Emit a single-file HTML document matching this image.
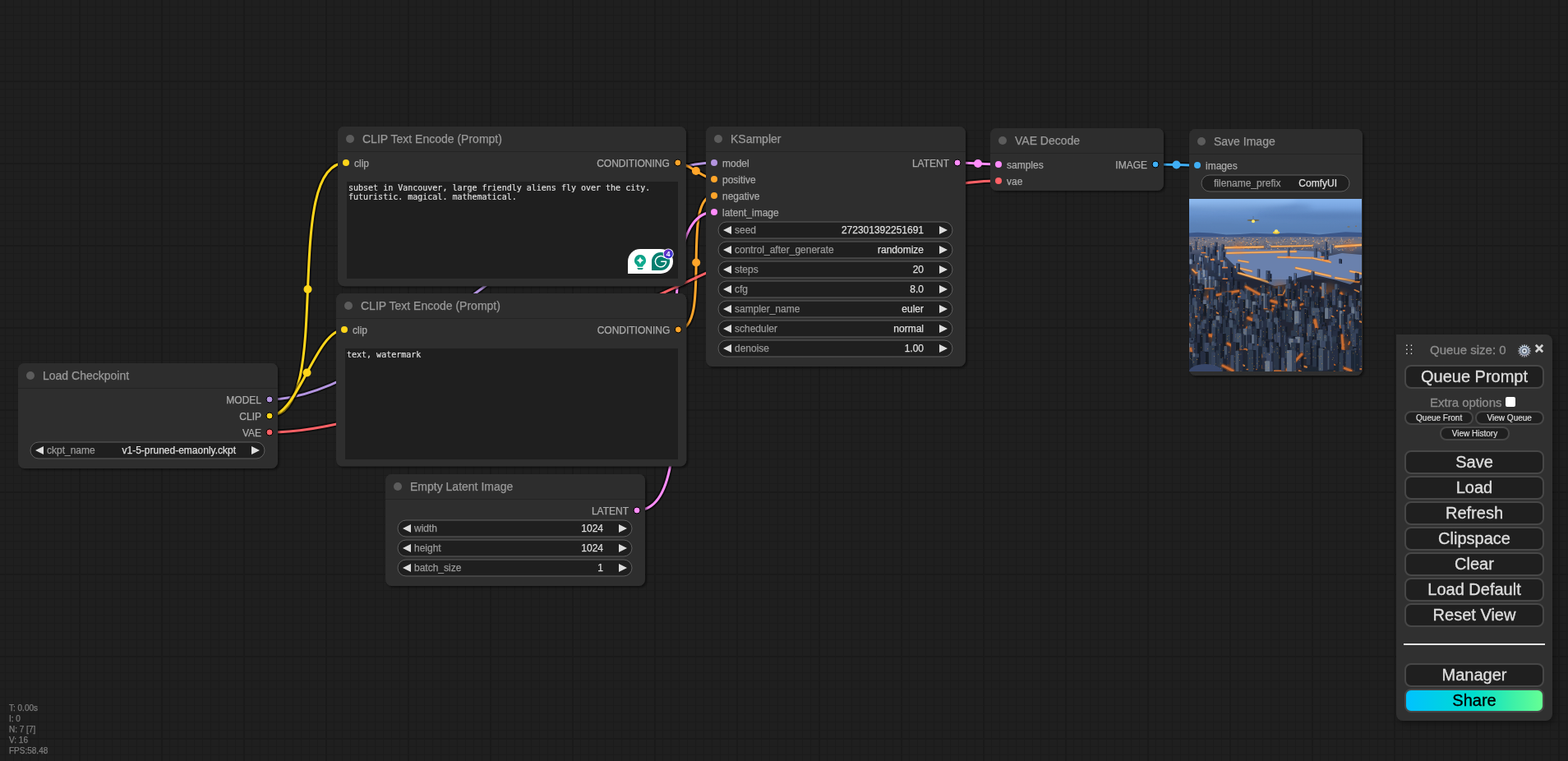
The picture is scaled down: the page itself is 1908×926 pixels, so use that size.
<!DOCTYPE html>
<html lang="en"><head><meta charset="utf-8"><title>ComfyUI</title>
<style>
html,body{margin:0;padding:0;background:#1f1f1f;overflow:hidden}
body{width:1908px;height:926px;position:relative;font-family:"Liberation Sans", sans-serif}
#cv{position:absolute;left:0;top:0;width:1908px;height:926px;display:block;will-change:transform}
#cv text{font-family:"Liberation Sans", sans-serif;stroke-width:0.25px}
.ta{position:absolute;box-sizing:border-box;background:#1f1f1f;color:#ddd;padding:2px;font:10px/11px "DejaVu Sans Mono", "Liberation Mono", monospace;will-change:transform;-webkit-text-stroke:0.2px #ddd;white-space:pre-wrap;overflow:hidden}
.menu{will-change:transform;position:absolute;left:1699px;top:407px;width:190px;height:470px;box-sizing:border-box;background:#303030;border-radius:0 8px 8px 8px;box-shadow:3px 3px 8px rgba(0,0,0,.4);color:#8c8c8c;font-size:15px}
.menu .b{position:absolute;box-sizing:border-box;left:10px;width:170px;height:29px;border:2px solid #474747;border-radius:8px;background:#1f1f1f;color:#ddd;font-size:20px;line-height:23px;padding:1px 6px;text-align:center;white-space:nowrap}
.menu .s{position:absolute;box-sizing:border-box;height:17px;border:2px solid #474747;border-radius:8px;background:#1f1f1f;color:#ddd;font-size:10px;line-height:11px;padding:1px 0;text-align:center;white-space:nowrap}
.menu .t{position:absolute;white-space:nowrap;line-height:17px;-webkit-text-stroke:0.3px #8c8c8c}
.menu .b{-webkit-text-stroke:0.35px #ddd}.menu .s{-webkit-text-stroke:0.2px #ddd}

</style></head><body>
<svg id="cv" width="1908" height="926" viewBox="0 0 1908 926">
<defs>
<pattern id="grid" x="-4" y="-2" width="100" height="100" patternUnits="userSpaceOnUse">
<rect width="100" height="100" fill="#1f1f1f"/>
<rect x="10" y="0" width="1" height="100" fill="#1b1b1b"/><rect x="20" y="0" width="1" height="100" fill="#1b1b1b"/><rect x="30" y="0" width="1" height="100" fill="#1b1b1b"/><rect x="40" y="0" width="1" height="100" fill="#1b1b1b"/><rect x="50" y="0" width="1" height="100" fill="#1b1b1b"/><rect x="60" y="0" width="1" height="100" fill="#1b1b1b"/><rect x="70" y="0" width="1" height="100" fill="#1b1b1b"/><rect x="80" y="0" width="1" height="100" fill="#1b1b1b"/><rect x="90" y="0" width="1" height="100" fill="#1b1b1b"/>
<rect x="0" y="10" width="100" height="1" fill="#1b1b1b"/><rect x="0" y="20" width="100" height="1" fill="#1b1b1b"/><rect x="0" y="30" width="100" height="1" fill="#1b1b1b"/><rect x="0" y="40" width="100" height="1" fill="#1b1b1b"/><rect x="0" y="50" width="100" height="1" fill="#1b1b1b"/><rect x="0" y="60" width="100" height="1" fill="#1b1b1b"/><rect x="0" y="70" width="100" height="1" fill="#1b1b1b"/><rect x="0" y="80" width="100" height="1" fill="#1b1b1b"/><rect x="0" y="90" width="100" height="1" fill="#1b1b1b"/>
<rect x="0" y="0" width="2" height="100" fill="#1a1a1a"/><rect x="0" y="0" width="100" height="2" fill="#1a1a1a"/>
</pattern>
<filter id="sh" x="-10%" y="-10%" width="120%" height="130%"><feDropShadow dx="2" dy="2" stdDeviation="1.5" flood-color="#000" flood-opacity="0.5"/></filter>
<filter id="gb" x="-50%" y="-100%" width="200%" height="300%"><feGaussianBlur stdDeviation="1.2"/></filter>
<linearGradient id="sky" x1="0" y1="0" x2="0" y2="1"><stop offset="0" stop-color="#88b5ee"/><stop offset="0.05" stop-color="#78a4de"/><stop offset="0.1" stop-color="#6690ca"/><stop offset="0.15" stop-color="#5a82b8"/><stop offset="0.19" stop-color="#5a80b4"/><stop offset="0.215" stop-color="#688cba"/></linearGradient>
<filter id="soft" x="-5%" y="-5%" width="110%" height="110%"><feGaussianBlur stdDeviation="0.45"/></filter>
<filter id="gb2" x="-50%" y="-200%" width="200%" height="500%"><feGaussianBlur stdDeviation="3"/></filter>
<linearGradient id="cityg" x1="0" y1="0" x2="0" y2="1"><stop offset="0" stop-color="#5f6a8a"/><stop offset="0.04" stop-color="#77747e"/><stop offset="0.085" stop-color="#5a6178"/><stop offset="0.14" stop-color="#3c4760"/><stop offset="0.3" stop-color="#252e42"/><stop offset="1" stop-color="#212a3c"/></linearGradient>
</defs>
<rect width="1908" height="926" fill="url(#grid)"/>
<path d="M328 486C481.22 486 715.78 198 869 198" fill="none" stroke="rgba(0,0,0,0.5)" stroke-width="7"/>
<path d="M328 486C481.22 486 715.78 198 869 198" fill="none" stroke="#B394DF" stroke-width="3"/>
<circle cx="598.5" cy="342" r="5" fill="#B394DF"/>
<path d="M824.8 198C836.93 198 856.87 218 869 218" fill="none" stroke="rgba(0,0,0,0.5)" stroke-width="7"/>
<path d="M824.8 198C836.93 198 856.87 218 869 218" fill="none" stroke="#FFA52A" stroke-width="3"/>
<circle cx="846.9" cy="208" r="5" fill="#FFA52A"/>
<path d="M825.3 401C867.49 401 826.81 238 869 238" fill="none" stroke="rgba(0,0,0,0.5)" stroke-width="7"/>
<path d="M825.3 401C867.49 401 826.81 238 869 238" fill="none" stroke="#FFA52A" stroke-width="3"/>
<circle cx="847.15" cy="319.5" r="5" fill="#FFA52A"/>
<path d="M775 621C868.74 621 775.26 258 869 258" fill="none" stroke="rgba(0,0,0,0.5)" stroke-width="7"/>
<path d="M775 621C868.74 621 775.26 258 869 258" fill="none" stroke="#FF8CFB" stroke-width="3"/>
<circle cx="822" cy="439.5" r="5" fill="#FF8CFB"/>
<path d="M328 506C408.43 506 340.57 198 421 198" fill="none" stroke="rgba(0,0,0,0.5)" stroke-width="7"/>
<path d="M328 506C408.43 506 340.57 198 421 198" fill="none" stroke="#FFD51A" stroke-width="3"/>
<circle cx="374.5" cy="352" r="5" fill="#FFD51A"/>
<path d="M328 506C362.74 506 384.26 401 419 401" fill="none" stroke="rgba(0,0,0,0.5)" stroke-width="7"/>
<path d="M328 506C362.74 506 384.26 401 419 401" fill="none" stroke="#FFD51A" stroke-width="3"/>
<circle cx="373.5" cy="453.5" r="5" fill="#FFD51A"/>
<path d="M1165 198C1177.51 198 1202.49 200 1215 200" fill="none" stroke="rgba(0,0,0,0.5)" stroke-width="7"/>
<path d="M1165 198C1177.51 198 1202.49 200 1215 200" fill="none" stroke="#FF8CFB" stroke-width="3"/>
<circle cx="1190" cy="199" r="5" fill="#FF8CFB"/>
<path d="M328 526C562.57 526 980.43 220 1215 220" fill="none" stroke="rgba(0,0,0,0.5)" stroke-width="7"/>
<path d="M328 526C562.57 526 980.43 220 1215 220" fill="none" stroke="#FF6166" stroke-width="3"/>
<circle cx="771.5" cy="373" r="5" fill="#FF6166"/>
<path d="M1406 200C1418.75 200 1444.25 201 1457 201" fill="none" stroke="rgba(0,0,0,0.5)" stroke-width="7"/>
<path d="M1406 200C1418.75 200 1444.25 201 1457 201" fill="none" stroke="#40AFF6" stroke-width="3"/>
<circle cx="1431.5" cy="200.5" r="5" fill="#40AFF6"/>
<g transform="translate(859 184)">
<rect x="0" y="-30" width="316" height="292" rx="8" fill="#2f2f2f" filter="url(#sh)"/>
<rect x="0" y="-1" width="316" height="2" fill="rgba(0,0,0,0.2)"/>
<path d="M8 -30H308A8 8 0 0 1 316 -22V0H0V-22A8 8 0 0 1 8 -30Z" fill="#2d2d2d"/>
<circle cx="15" cy="-15" r="5" fill="#5c5c5c"/>
<text x="30" y="-10" font-size="14" fill="#999" stroke="#999">KSampler</text>
<circle cx="10" cy="14" r="4" fill="#B394DF"/>
<text x="20" y="19" font-size="12" fill="#AAA" stroke="#AAA">model</text>
<circle cx="10" cy="34" r="4" fill="#FFA52A"/>
<text x="20" y="39" font-size="12" fill="#AAA" stroke="#AAA">positive</text>
<circle cx="10" cy="54" r="4" fill="#FFA52A"/>
<text x="20" y="59" font-size="12" fill="#AAA" stroke="#AAA">negative</text>
<circle cx="10" cy="74" r="4" fill="#FF8CFB"/>
<text x="20" y="79" font-size="12" fill="#AAA" stroke="#AAA">latent_image</text>
<circle cx="306" cy="14" r="4" fill="#FF8CFB" stroke="#000" stroke-width="1"/>
<text x="296" y="19" font-size="12" fill="#AAA" stroke="#AAA" text-anchor="end">LATENT</text>
<rect x="15" y="86" width="285" height="20" rx="10" fill="#1f1f1f" stroke="#5e5e5e" stroke-width="1"/>
<path d="M31 91L21 96L31 101Z" fill="#DDD"/>
<path d="M284 91L294 96L284 101Z" fill="#DDD"/>
<text x="35" y="100" font-size="12" fill="#999" stroke="#999">seed</text>
<text x="265" y="100" font-size="12" fill="#DDD" stroke="#DDD" text-anchor="end">272301392251691</text>
<rect x="15" y="110" width="285" height="20" rx="10" fill="#1f1f1f" stroke="#5e5e5e" stroke-width="1"/>
<path d="M31 115L21 120L31 125Z" fill="#DDD"/>
<path d="M284 115L294 120L284 125Z" fill="#DDD"/>
<text x="35" y="124" font-size="12" fill="#999" stroke="#999">control_after_generate</text>
<text x="265" y="124" font-size="12" fill="#DDD" stroke="#DDD" text-anchor="end">randomize</text>
<rect x="15" y="134" width="285" height="20" rx="10" fill="#1f1f1f" stroke="#5e5e5e" stroke-width="1"/>
<path d="M31 139L21 144L31 149Z" fill="#DDD"/>
<path d="M284 139L294 144L284 149Z" fill="#DDD"/>
<text x="35" y="148" font-size="12" fill="#999" stroke="#999">steps</text>
<text x="265" y="148" font-size="12" fill="#DDD" stroke="#DDD" text-anchor="end">20</text>
<rect x="15" y="158" width="285" height="20" rx="10" fill="#1f1f1f" stroke="#5e5e5e" stroke-width="1"/>
<path d="M31 163L21 168L31 173Z" fill="#DDD"/>
<path d="M284 163L294 168L284 173Z" fill="#DDD"/>
<text x="35" y="172" font-size="12" fill="#999" stroke="#999">cfg</text>
<text x="265" y="172" font-size="12" fill="#DDD" stroke="#DDD" text-anchor="end">8.0</text>
<rect x="15" y="182" width="285" height="20" rx="10" fill="#1f1f1f" stroke="#5e5e5e" stroke-width="1"/>
<path d="M31 187L21 192L31 197Z" fill="#DDD"/>
<path d="M284 187L294 192L284 197Z" fill="#DDD"/>
<text x="35" y="196" font-size="12" fill="#999" stroke="#999">sampler_name</text>
<text x="265" y="196" font-size="12" fill="#DDD" stroke="#DDD" text-anchor="end">euler</text>
<rect x="15" y="206" width="285" height="20" rx="10" fill="#1f1f1f" stroke="#5e5e5e" stroke-width="1"/>
<path d="M31 211L21 216L31 221Z" fill="#DDD"/>
<path d="M284 211L294 216L284 221Z" fill="#DDD"/>
<text x="35" y="220" font-size="12" fill="#999" stroke="#999">scheduler</text>
<text x="265" y="220" font-size="12" fill="#DDD" stroke="#DDD" text-anchor="end">normal</text>
<rect x="15" y="230" width="285" height="20" rx="10" fill="#1f1f1f" stroke="#5e5e5e" stroke-width="1"/>
<path d="M31 235L21 240L31 245Z" fill="#DDD"/>
<path d="M284 235L294 240L284 245Z" fill="#DDD"/>
<text x="35" y="244" font-size="12" fill="#999" stroke="#999">denoise</text>
<text x="265" y="244" font-size="12" fill="#DDD" stroke="#DDD" text-anchor="end">1.00</text>
</g>
<g transform="translate(22 472)">
<rect x="0" y="-30" width="316" height="128" rx="8" fill="#2f2f2f" filter="url(#sh)"/>
<rect x="0" y="-1" width="316" height="2" fill="rgba(0,0,0,0.2)"/>
<path d="M8 -30H308A8 8 0 0 1 316 -22V0H0V-22A8 8 0 0 1 8 -30Z" fill="#2d2d2d"/>
<circle cx="15" cy="-15" r="5" fill="#5c5c5c"/>
<text x="30" y="-10" font-size="14" fill="#999" stroke="#999">Load Checkpoint</text>
<circle cx="306" cy="14" r="4" fill="#B394DF" stroke="#000" stroke-width="1"/>
<text x="296" y="19" font-size="12" fill="#AAA" stroke="#AAA" text-anchor="end">MODEL</text>
<circle cx="306" cy="34" r="4" fill="#FFD51A" stroke="#000" stroke-width="1"/>
<text x="296" y="39" font-size="12" fill="#AAA" stroke="#AAA" text-anchor="end">CLIP</text>
<circle cx="306" cy="54" r="4" fill="#FF6166" stroke="#000" stroke-width="1"/>
<text x="296" y="59" font-size="12" fill="#AAA" stroke="#AAA" text-anchor="end">VAE</text>
<rect x="15" y="66" width="285" height="20" rx="10" fill="#1f1f1f" stroke="#5e5e5e" stroke-width="1"/>
<path d="M31 71L21 76L31 81Z" fill="#DDD"/>
<path d="M284 71L294 76L284 81Z" fill="#DDD"/>
<text x="35" y="80" font-size="12" fill="#999" stroke="#999">ckpt_name</text>
<text x="265" y="80" font-size="12" fill="#DDD" stroke="#DDD" text-anchor="end">v1-5-pruned-emaonly.ckpt</text>
</g>
<g transform="translate(469 607)">
<rect x="0" y="-30" width="316" height="136" rx="8" fill="#2f2f2f" filter="url(#sh)"/>
<rect x="0" y="-1" width="316" height="2" fill="rgba(0,0,0,0.2)"/>
<path d="M8 -30H308A8 8 0 0 1 316 -22V0H0V-22A8 8 0 0 1 8 -30Z" fill="#2d2d2d"/>
<circle cx="15" cy="-15" r="5" fill="#5c5c5c"/>
<text x="30" y="-10" font-size="14" fill="#999" stroke="#999">Empty Latent Image</text>
<circle cx="306" cy="14" r="4" fill="#FF8CFB" stroke="#000" stroke-width="1"/>
<text x="296" y="19" font-size="12" fill="#AAA" stroke="#AAA" text-anchor="end">LATENT</text>
<rect x="15" y="26" width="285" height="20" rx="10" fill="#1f1f1f" stroke="#5e5e5e" stroke-width="1"/>
<path d="M31 31L21 36L31 41Z" fill="#DDD"/>
<path d="M284 31L294 36L284 41Z" fill="#DDD"/>
<text x="35" y="40" font-size="12" fill="#999" stroke="#999">width</text>
<text x="265" y="40" font-size="12" fill="#DDD" stroke="#DDD" text-anchor="end">1024</text>
<rect x="15" y="50" width="285" height="20" rx="10" fill="#1f1f1f" stroke="#5e5e5e" stroke-width="1"/>
<path d="M31 55L21 60L31 65Z" fill="#DDD"/>
<path d="M284 55L294 60L284 65Z" fill="#DDD"/>
<text x="35" y="64" font-size="12" fill="#999" stroke="#999">height</text>
<text x="265" y="64" font-size="12" fill="#DDD" stroke="#DDD" text-anchor="end">1024</text>
<rect x="15" y="74" width="285" height="20" rx="10" fill="#1f1f1f" stroke="#5e5e5e" stroke-width="1"/>
<path d="M31 79L21 84L31 89Z" fill="#DDD"/>
<path d="M284 79L294 84L284 89Z" fill="#DDD"/>
<text x="35" y="88" font-size="12" fill="#999" stroke="#999">batch_size</text>
<text x="265" y="88" font-size="12" fill="#DDD" stroke="#DDD" text-anchor="end">1</text>
</g>
<g transform="translate(411 184)">
<rect x="0" y="-30" width="423.8" height="194.3" rx="8" fill="#2f2f2f" filter="url(#sh)"/>
<rect x="0" y="-1" width="423.8" height="2" fill="rgba(0,0,0,0.2)"/>
<path d="M8 -30H415.8A8 8 0 0 1 423.8 -22V0H0V-22A8 8 0 0 1 8 -30Z" fill="#2d2d2d"/>
<circle cx="15" cy="-15" r="5" fill="#5c5c5c"/>
<text x="30" y="-10" font-size="14" fill="#999" stroke="#999">CLIP Text Encode (Prompt)</text>
<circle cx="10" cy="14" r="4" fill="#FFD51A"/>
<text x="20" y="19" font-size="12" fill="#AAA" stroke="#AAA">clip</text>
<circle cx="413.8" cy="14" r="4" fill="#FFA52A" stroke="#000" stroke-width="1"/>
<text x="403.8" y="19" font-size="12" fill="#AAA" stroke="#AAA" text-anchor="end">CONDITIONING</text>
</g>
<g transform="translate(409 387)">
<rect x="0" y="-30" width="426.3" height="210.6" rx="8" fill="#2f2f2f" filter="url(#sh)"/>
<rect x="0" y="-1" width="426.3" height="2" fill="rgba(0,0,0,0.2)"/>
<path d="M8 -30H418.3A8 8 0 0 1 426.3 -22V0H0V-22A8 8 0 0 1 8 -30Z" fill="#2d2d2d"/>
<circle cx="15" cy="-15" r="5" fill="#5c5c5c"/>
<text x="30" y="-10" font-size="14" fill="#999" stroke="#999">CLIP Text Encode (Prompt)</text>
<circle cx="10" cy="14" r="4" fill="#FFD51A"/>
<text x="20" y="19" font-size="12" fill="#AAA" stroke="#AAA">clip</text>
<circle cx="416.3" cy="14" r="4" fill="#FFA52A" stroke="#000" stroke-width="1"/>
<text x="406.3" y="19" font-size="12" fill="#AAA" stroke="#AAA" text-anchor="end">CONDITIONING</text>
</g>
<g transform="translate(1205 186)">
<rect x="0" y="-30" width="211" height="76" rx="8" fill="#2f2f2f" filter="url(#sh)"/>
<rect x="0" y="-1" width="211" height="2" fill="rgba(0,0,0,0.2)"/>
<path d="M8 -30H203A8 8 0 0 1 211 -22V0H0V-22A8 8 0 0 1 8 -30Z" fill="#2d2d2d"/>
<circle cx="15" cy="-15" r="5" fill="#5c5c5c"/>
<text x="30" y="-10" font-size="14" fill="#999" stroke="#999">VAE Decode</text>
<circle cx="10" cy="14" r="4" fill="#FF8CFB"/>
<text x="20" y="19" font-size="12" fill="#AAA" stroke="#AAA">samples</text>
<circle cx="10" cy="34" r="4" fill="#FF6166"/>
<text x="20" y="39" font-size="12" fill="#AAA" stroke="#AAA">vae</text>
<circle cx="201" cy="14" r="4" fill="#40AFF6" stroke="#000" stroke-width="1"/>
<text x="191" y="19" font-size="12" fill="#AAA" stroke="#AAA" text-anchor="end">IMAGE</text>
</g>
<g transform="translate(1447 187)">
<rect x="0" y="-30" width="211" height="300" rx="8" fill="#2f2f2f" filter="url(#sh)"/>
<rect x="0" y="-1" width="211" height="2" fill="rgba(0,0,0,0.2)"/>
<path d="M8 -30H203A8 8 0 0 1 211 -22V0H0V-22A8 8 0 0 1 8 -30Z" fill="#2d2d2d"/>
<circle cx="15" cy="-15" r="5" fill="#5c5c5c"/>
<text x="30" y="-10" font-size="14" fill="#999" stroke="#999">Save Image</text>
<circle cx="10" cy="14" r="4" fill="#40AFF6"/>
<text x="20" y="19" font-size="12" fill="#AAA" stroke="#AAA">images</text>
<rect x="15" y="26" width="180" height="20" rx="10" fill="#1f1f1f" stroke="#5e5e5e" stroke-width="1"/>
<text x="30" y="40" font-size="12" fill="#999" stroke="#999">filename_prefix</text>
<text x="180" y="40" font-size="12" fill="#DDD" stroke="#DDD" text-anchor="end">ComfyUI</text>
</g>
<svg x="1447" y="242" width="210" height="210" viewBox="0 0 210 210" overflow="hidden"><g filter="url(#soft)">
<rect width="210" height="210" fill="url(#sky)"/>
<ellipse cx="60" cy="10" rx="90" ry="5" fill="#3b5a8a" opacity="0.35" filter="url(#gb2)"/>
<ellipse cx="160" cy="20" rx="80" ry="5" fill="#3b5a8a" opacity="0.3" filter="url(#gb2)"/>
<ellipse cx="90" cy="30" rx="120" ry="4" fill="#6888b6" opacity="0.25" filter="url(#gb2)"/>
<ellipse cx="40" cy="22" rx="50" ry="3" fill="#5d7fb0" opacity="0.2" filter="url(#gb2)"/>
<ellipse cx="45" cy="0" rx="85" ry="13" fill="#9cc6f6" opacity="0.45" filter="url(#gb2)"/>
<path d="M0 41.500L10 40.800L28 41.500L45 43.500L62 43L78 41.800L100 42.500L120 41.500L140 41.800L158 43.500L172 42L190 40.200L210 41V48H0Z" fill="#3a5688"/>
<rect y="46" width="210" height="164" fill="url(#cityg)"/>
<rect x="95" y="55.2" width="1.1" height="1" fill="#9aa0b0"/>
<rect x="39.9" y="59" width="1.4" height="1" fill="#9aa0b0"/>
<rect x="19.8" y="51.2" width="1.2" height="1" fill="#c89060"/>
<rect x="133.2" y="55.7" width="1.8" height="0.9" fill="#8a93a8"/>
<rect x="129.3" y="48.9" width="1.6" height="0.5" fill="#e0a065"/>
<rect x="7.5" y="60.1" width="1.5" height="0.7" fill="#e0a065"/>
<rect x="124.1" y="49.5" width="1.4" height="0.8" fill="#a09aa0"/>
<rect x="139.1" y="53.6" width="1.1" height="0.8" fill="#34425e"/>
<rect x="195.7" y="47.8" width="1" height="0.6" fill="#34425e"/>
<rect x="60.7" y="47.6" width="1.1" height="1" fill="#c89060"/>
<rect x="81.2" y="61.3" width="0.9" height="1.1" fill="#e0a065"/>
<rect x="11" y="52.3" width="1.1" height="0.8" fill="#8a93a8"/>
<rect x="41.7" y="57" width="0.7" height="0.7" fill="#44506c"/>
<rect x="202.5" y="58.2" width="0.8" height="0.9" fill="#c89060"/>
<rect x="2.3" y="53.7" width="0.8" height="0.8" fill="#9aa0b0"/>
<rect x="94" y="49.5" width="1.1" height="0.7" fill="#f0b070"/>
<rect x="82.9" y="61.8" width="0.9" height="1.1" fill="#e0a065"/>
<rect x="168.7" y="51.2" width="0.9" height="0.7" fill="#e0a065"/>
<rect x="179.4" y="56.4" width="0.7" height="0.6" fill="#c89060"/>
<rect x="92.7" y="46.6" width="1.6" height="0.7" fill="#44506c"/>
<rect x="15.6" y="49.7" width="0.6" height="0.7" fill="#a09aa0"/>
<rect x="130.7" y="48.5" width="1.6" height="0.6" fill="#9aa0b0"/>
<rect x="81.1" y="56.2" width="1.7" height="1" fill="#34425e"/>
<rect x="52.4" y="49.4" width="0.8" height="1.1" fill="#525e78"/>
<rect x="185.3" y="55.9" width="0.7" height="0.6" fill="#8a93a8"/>
<rect x="107.6" y="50.5" width="0.9" height="1" fill="#8a93a8"/>
<rect x="125.3" y="51" width="1.7" height="1.1" fill="#f0b070"/>
<rect x="26.5" y="53.9" width="0.9" height="1.1" fill="#c89060"/>
<rect x="42.8" y="46.8" width="1.1" height="0.6" fill="#34425e"/>
<rect x="9.8" y="50.9" width="1.3" height="0.6" fill="#525e78"/>
<rect x="76.1" y="60.3" width="1.4" height="0.9" fill="#44506c"/>
<rect x="122.7" y="48.7" width="1.7" height="0.8" fill="#e0a065"/>
<rect x="75.1" y="51.3" width="0.6" height="0.9" fill="#e0a065"/>
<rect x="101.3" y="57.8" width="0.8" height="0.5" fill="#44506c"/>
<rect x="95.1" y="52.2" width="1.7" height="0.9" fill="#e0a065"/>
<rect x="147.8" y="58.8" width="1" height="0.9" fill="#44506c"/>
<rect x="189.2" y="60" width="1.7" height="0.5" fill="#8a93a8"/>
<rect x="105" y="46.7" width="1.1" height="0.5" fill="#8a93a8"/>
<rect x="15.2" y="47.9" width="1.8" height="1" fill="#c89060"/>
<rect x="152.9" y="52.5" width="1.1" height="1" fill="#9aa0b0"/>
<rect x="17.6" y="58.1" width="1" height="0.6" fill="#e0a065"/>
<rect x="4.7" y="61.3" width="1.2" height="0.9" fill="#c89060"/>
<rect x="193.3" y="50.5" width="1" height="0.6" fill="#e0a065"/>
<rect x="128.5" y="54.5" width="1.4" height="0.8" fill="#44506c"/>
<rect x="187.3" y="51.6" width="0.8" height="0.8" fill="#34425e"/>
<rect x="169.3" y="60.7" width="1.1" height="0.8" fill="#a09aa0"/>
<rect x="66.5" y="48.6" width="1" height="1" fill="#9aa0b0"/>
<rect x="8.5" y="47.5" width="1.6" height="0.6" fill="#34425e"/>
<rect x="99" y="60.8" width="1.1" height="0.8" fill="#8a93a8"/>
<rect x="141.2" y="57.6" width="1" height="1" fill="#9aa0b0"/>
<rect x="58.4" y="55.9" width="1.3" height="0.7" fill="#34425e"/>
<rect x="166.2" y="46.8" width="1.1" height="0.6" fill="#f0b070"/>
<rect x="161.5" y="50.6" width="1.6" height="1.1" fill="#f0b070"/>
<rect x="24.2" y="48.2" width="1.4" height="1" fill="#525e78"/>
<rect x="201.3" y="57.1" width="1.6" height="0.7" fill="#a09aa0"/>
<rect x="150" y="58.2" width="1.5" height="0.6" fill="#525e78"/>
<rect x="57.2" y="51.9" width="1.2" height="1.1" fill="#525e78"/>
<rect x="33.4" y="59.7" width="0.7" height="1.1" fill="#a09aa0"/>
<rect x="151.7" y="48.5" width="0.8" height="1" fill="#9aa0b0"/>
<rect x="1.4" y="55" width="1.6" height="1.1" fill="#525e78"/>
<rect x="97.4" y="56.6" width="0.7" height="1" fill="#a09aa0"/>
<rect x="167.6" y="60.8" width="0.9" height="1" fill="#c89060"/>
<rect x="205.9" y="61.6" width="1.8" height="1.1" fill="#525e78"/>
<rect x="55" y="57.6" width="1" height="0.5" fill="#e0a065"/>
<rect x="92.6" y="55" width="1.2" height="0.5" fill="#34425e"/>
<rect x="169.9" y="47.5" width="0.8" height="0.7" fill="#e0a065"/>
<rect x="165.5" y="48.7" width="1.8" height="1" fill="#f0b070"/>
<rect x="108.8" y="57" width="1.7" height="0.8" fill="#9aa0b0"/>
<rect x="199.3" y="47.8" width="1.1" height="0.8" fill="#a09aa0"/>
<rect x="174.5" y="55.2" width="1.2" height="1" fill="#f0b070"/>
<rect x="117.6" y="51.3" width="1.7" height="1" fill="#8a93a8"/>
<rect x="128" y="51.2" width="1.8" height="0.8" fill="#f0b070"/>
<rect x="120.3" y="49.6" width="0.7" height="0.5" fill="#525e78"/>
<rect x="79.2" y="54.8" width="1.2" height="0.7" fill="#e0a065"/>
<rect x="168.2" y="55.2" width="0.7" height="0.6" fill="#9aa0b0"/>
<rect x="195.5" y="53.6" width="0.9" height="0.8" fill="#8a93a8"/>
<rect x="26.7" y="53.2" width="1.2" height="0.6" fill="#9aa0b0"/>
<rect x="88.1" y="47" width="0.8" height="1" fill="#34425e"/>
<rect x="4.8" y="49.5" width="0.6" height="0.7" fill="#a09aa0"/>
<rect x="152" y="50.3" width="0.7" height="0.9" fill="#9aa0b0"/>
<rect x="25.8" y="54.4" width="1.5" height="0.9" fill="#34425e"/>
<rect x="184.5" y="46.9" width="1.6" height="0.9" fill="#8a93a8"/>
<rect x="113" y="59.9" width="1.4" height="0.8" fill="#525e78"/>
<rect x="178.8" y="56" width="0.9" height="0.9" fill="#f0b070"/>
<rect x="170.2" y="60.5" width="1.3" height="1" fill="#44506c"/>
<rect x="40.9" y="58.6" width="1.7" height="0.6" fill="#a09aa0"/>
<rect x="50.3" y="57.8" width="1.1" height="0.8" fill="#34425e"/>
<rect x="197.6" y="54.9" width="0.8" height="0.9" fill="#f0b070"/>
<rect x="167.8" y="48" width="1.7" height="1.1" fill="#44506c"/>
<rect x="24.2" y="54.3" width="1.2" height="0.9" fill="#44506c"/>
<rect x="39.7" y="47.6" width="0.6" height="1" fill="#c89060"/>
<rect x="128.8" y="60.5" width="0.8" height="0.6" fill="#9aa0b0"/>
<rect x="42.8" y="59.5" width="1.7" height="0.6" fill="#34425e"/>
<rect x="13" y="61.2" width="0.7" height="0.6" fill="#9aa0b0"/>
<rect x="82.1" y="53.1" width="1.1" height="0.9" fill="#44506c"/>
<rect x="2.8" y="57.4" width="0.8" height="0.8" fill="#a09aa0"/>
<rect x="155.3" y="52.8" width="1.3" height="0.6" fill="#a09aa0"/>
<rect x="166.4" y="51.5" width="1.6" height="0.9" fill="#c89060"/>
<rect x="180.8" y="56.3" width="1.3" height="0.6" fill="#8a93a8"/>
<rect x="122.8" y="51.8" width="0.9" height="0.6" fill="#34425e"/>
<rect x="156" y="49" width="0.8" height="0.7" fill="#8a93a8"/>
<rect x="113.2" y="52.2" width="1.5" height="0.7" fill="#8a93a8"/>
<rect x="151.8" y="47.6" width="1" height="0.6" fill="#44506c"/>
<rect x="186.5" y="61.9" width="0.9" height="1.1" fill="#e0a065"/>
<rect x="139.9" y="51.7" width="1.3" height="0.8" fill="#8a93a8"/>
<rect x="81.8" y="62" width="1.4" height="1" fill="#a09aa0"/>
<rect x="205.8" y="46.9" width="1.5" height="0.7" fill="#c89060"/>
<rect x="84.3" y="47.3" width="1.4" height="0.5" fill="#a09aa0"/>
<rect x="54.3" y="50.8" width="1.3" height="0.8" fill="#44506c"/>
<rect x="203.1" y="55.3" width="1.4" height="1" fill="#c89060"/>
<rect x="16" y="55.8" width="1.1" height="1.1" fill="#e0a065"/>
<rect x="81" y="61.5" width="1.3" height="0.9" fill="#9aa0b0"/>
<rect x="90.2" y="54.2" width="1.2" height="0.9" fill="#34425e"/>
<rect x="76.8" y="50.9" width="1.3" height="0.7" fill="#34425e"/>
<rect x="150.5" y="51.1" width="1.5" height="0.9" fill="#e0a065"/>
<rect x="132.9" y="52.8" width="0.7" height="0.7" fill="#8a93a8"/>
<rect x="83.5" y="55.5" width="0.7" height="1" fill="#44506c"/>
<rect x="90.2" y="53.9" width="0.7" height="0.6" fill="#a09aa0"/>
<rect x="170.1" y="60.6" width="1.8" height="1" fill="#f0b070"/>
<rect x="126.8" y="48.3" width="1.1" height="0.6" fill="#8a93a8"/>
<rect x="10.9" y="54.7" width="1" height="0.6" fill="#c89060"/>
<rect x="87.6" y="55.8" width="1" height="0.9" fill="#8a93a8"/>
<rect x="171.2" y="48.6" width="1.5" height="0.6" fill="#34425e"/>
<rect x="23.9" y="60.3" width="1.3" height="0.7" fill="#525e78"/>
<rect x="57" y="57.1" width="1.4" height="1" fill="#a09aa0"/>
<rect x="39.9" y="50.4" width="1.7" height="0.5" fill="#a09aa0"/>
<rect x="12.8" y="50.7" width="0.6" height="0.5" fill="#8a93a8"/>
<rect x="46.7" y="50.8" width="1.7" height="0.6" fill="#c89060"/>
<rect x="49.3" y="61.7" width="1.2" height="0.6" fill="#9aa0b0"/>
<rect x="72.2" y="58" width="1.6" height="0.8" fill="#c89060"/>
<rect x="172.6" y="59.5" width="1.1" height="0.9" fill="#a09aa0"/>
<rect x="81.9" y="48.8" width="1.4" height="1.1" fill="#f0b070"/>
<rect x="68.3" y="55" width="1.1" height="0.7" fill="#f0b070"/>
<rect x="20.4" y="60.1" width="1.3" height="0.8" fill="#c89060"/>
<rect x="119.3" y="59.1" width="1" height="1" fill="#9aa0b0"/>
<rect x="16" y="49.8" width="1.4" height="0.8" fill="#c89060"/>
<rect x="160.5" y="51.6" width="0.9" height="0.9" fill="#f0b070"/>
<rect x="68.7" y="60.5" width="1.5" height="0.8" fill="#44506c"/>
<rect x="192.9" y="61.1" width="1.1" height="1" fill="#34425e"/>
<rect x="64" y="51.4" width="1.8" height="0.9" fill="#8a93a8"/>
<rect x="108.4" y="47.8" width="0.6" height="0.9" fill="#44506c"/>
<rect x="122.8" y="58.8" width="1.6" height="0.8" fill="#44506c"/>
<rect x="175.6" y="55.2" width="0.7" height="0.8" fill="#f0b070"/>
<rect x="179.5" y="59.1" width="1.2" height="0.8" fill="#a09aa0"/>
<rect x="119.2" y="61.5" width="0.7" height="0.8" fill="#8a93a8"/>
<rect x="165.5" y="47.8" width="0.9" height="0.6" fill="#c89060"/>
<rect x="65.9" y="46.9" width="0.7" height="1" fill="#f0b070"/>
<rect x="88.6" y="57.5" width="1.5" height="0.8" fill="#9aa0b0"/>
<rect x="160.6" y="52.6" width="1.6" height="0.7" fill="#44506c"/>
<rect x="28.7" y="54.1" width="1.4" height="1" fill="#c89060"/>
<rect x="86.2" y="59.3" width="1.6" height="1" fill="#44506c"/>
<rect x="175.1" y="60.3" width="1.4" height="0.8" fill="#525e78"/>
<rect x="149.1" y="58.9" width="1.7" height="1" fill="#8a93a8"/>
<rect x="51.6" y="49" width="1.4" height="0.7" fill="#8a93a8"/>
<rect x="81.8" y="54.7" width="1.8" height="0.5" fill="#34425e"/>
<rect x="64.8" y="48.3" width="1.5" height="0.6" fill="#f0b070"/>
<rect x="13.1" y="53.6" width="1.7" height="0.5" fill="#9aa0b0"/>
<rect x="22.8" y="49.4" width="1.3" height="0.9" fill="#a09aa0"/>
<rect x="99.1" y="54.4" width="0.8" height="0.7" fill="#9aa0b0"/>
<rect x="36.2" y="58.2" width="1.4" height="1.1" fill="#34425e"/>
<rect x="115.6" y="59.7" width="1.7" height="1" fill="#9aa0b0"/>
<rect x="71.8" y="55" width="1.2" height="0.6" fill="#c89060"/>
<rect x="10.4" y="61.2" width="1.8" height="1" fill="#8a93a8"/>
<rect x="162.6" y="58.7" width="1.4" height="0.6" fill="#e0a065"/>
<rect x="2.3" y="53.8" width="1.1" height="0.6" fill="#44506c"/>
<rect x="88.5" y="60.1" width="0.8" height="0.7" fill="#8a93a8"/>
<rect x="54.5" y="60" width="0.8" height="0.9" fill="#525e78"/>
<rect x="130.1" y="54.5" width="0.8" height="1" fill="#e0a065"/>
<rect x="0.3" y="59.2" width="1.6" height="0.5" fill="#f0b070"/>
<rect x="56.7" y="57.6" width="1.7" height="0.9" fill="#c89060"/>
<rect x="17.4" y="58.1" width="1.6" height="0.7" fill="#525e78"/>
<rect x="165.8" y="53" width="1.5" height="0.8" fill="#c89060"/>
<rect x="7.8" y="52.9" width="0.8" height="1" fill="#9aa0b0"/>
<rect x="65.4" y="51.3" width="1.3" height="1.1" fill="#c89060"/>
<rect x="140.1" y="47.5" width="1.4" height="0.6" fill="#c89060"/>
<rect x="82.8" y="53.7" width="1.4" height="0.5" fill="#c89060"/>
<rect x="79.2" y="57.5" width="1" height="0.6" fill="#a09aa0"/>
<rect x="162.1" y="59.8" width="1.7" height="0.6" fill="#a09aa0"/>
<rect x="131.8" y="61" width="1.7" height="1" fill="#34425e"/>
<rect x="116.7" y="47.8" width="0.8" height="0.9" fill="#a09aa0"/>
<rect x="69.2" y="61.1" width="1.5" height="0.7" fill="#9aa0b0"/>
<rect x="173.6" y="47.9" width="1.3" height="0.6" fill="#f0b070"/>
<rect x="132.4" y="49.3" width="1.1" height="1" fill="#a09aa0"/>
<rect x="124.5" y="47.9" width="0.6" height="1.1" fill="#a09aa0"/>
<rect x="91.1" y="58.5" width="1.7" height="0.8" fill="#44506c"/>
<rect x="107.4" y="56.5" width="1.6" height="0.7" fill="#f0b070"/>
<rect x="69.6" y="52.9" width="1.5" height="0.9" fill="#e0a065"/>
<rect x="66.7" y="58.7" width="1.4" height="0.9" fill="#a09aa0"/>
<rect x="3.9" y="51.6" width="1" height="0.8" fill="#44506c"/>
<rect x="117" y="49.7" width="1.5" height="1" fill="#44506c"/>
<rect x="128.4" y="49" width="1.7" height="0.8" fill="#525e78"/>
<rect x="74" y="54.3" width="1.3" height="0.6" fill="#f0b070"/>
<rect x="196" y="62" width="1.3" height="0.5" fill="#a09aa0"/>
<rect x="138.5" y="58.5" width="0.9" height="0.8" fill="#f0b070"/>
<rect x="146.4" y="51.6" width="0.9" height="1" fill="#44506c"/>
<rect x="95" y="57.8" width="1.7" height="0.8" fill="#a09aa0"/>
<rect x="117.8" y="55.2" width="0.8" height="0.9" fill="#34425e"/>
<rect x="188.4" y="51.7" width="0.7" height="1" fill="#f0b070"/>
<rect x="60.6" y="60.4" width="1.5" height="0.7" fill="#a09aa0"/>
<rect x="34.8" y="55.8" width="1.1" height="0.7" fill="#c89060"/>
<rect x="164.4" y="60.9" width="1" height="0.9" fill="#f0b070"/>
<rect x="154.9" y="52.4" width="0.8" height="0.7" fill="#e0a065"/>
<rect x="6.9" y="54.7" width="1.3" height="0.6" fill="#c89060"/>
<rect x="109.2" y="50.6" width="0.7" height="1" fill="#44506c"/>
<rect x="151.5" y="58.7" width="1.8" height="0.9" fill="#8a93a8"/>
<rect x="98.7" y="52.9" width="1.5" height="0.8" fill="#8a93a8"/>
<rect x="208.9" y="59.5" width="1.6" height="0.6" fill="#8a93a8"/>
<rect x="24.1" y="61.1" width="1.2" height="0.8" fill="#44506c"/>
<rect x="189.9" y="51.5" width="1" height="0.9" fill="#e0a065"/>
<rect x="91" y="52.3" width="1.5" height="0.7" fill="#44506c"/>
<rect x="124.6" y="47.6" width="1.6" height="0.6" fill="#c89060"/>
<rect x="183.3" y="61.6" width="1.4" height="0.8" fill="#9aa0b0"/>
<rect x="50.2" y="51.2" width="1.7" height="1" fill="#8a93a8"/>
<rect x="209.8" y="57.8" width="1.6" height="0.8" fill="#44506c"/>
<rect x="169.1" y="49.9" width="1.3" height="1" fill="#8a93a8"/>
<rect x="20.7" y="58.8" width="1.7" height="0.8" fill="#c89060"/>
<rect x="95.2" y="51.1" width="0.6" height="0.6" fill="#34425e"/>
<rect x="92.6" y="53.5" width="1.1" height="0.7" fill="#525e78"/>
<rect x="123" y="47.2" width="1.1" height="0.7" fill="#e0a065"/>
<rect x="68.1" y="48.7" width="1.7" height="0.6" fill="#9aa0b0"/>
<rect x="180.4" y="57.2" width="0.8" height="1" fill="#e0a065"/>
<rect x="74.4" y="53.8" width="1.4" height="0.9" fill="#f0b070"/>
<rect x="117.6" y="54.8" width="0.8" height="1" fill="#a09aa0"/>
<rect x="10.5" y="48.1" width="1.8" height="0.7" fill="#44506c"/>
<rect x="88.3" y="60.1" width="1.4" height="1.1" fill="#44506c"/>
<rect x="93.5" y="47.7" width="1.6" height="0.6" fill="#a09aa0"/>
<rect x="145.1" y="50.7" width="1.2" height="0.7" fill="#a09aa0"/>
<rect x="57.4" y="59" width="1.7" height="0.9" fill="#525e78"/>
<rect x="48.1" y="51.2" width="1.4" height="0.7" fill="#f0b070"/>
<rect x="134.4" y="47.9" width="1.1" height="0.8" fill="#c89060"/>
<rect x="111.5" y="47.2" width="1.2" height="0.8" fill="#34425e"/>
<rect x="119.4" y="49" width="0.9" height="0.7" fill="#a09aa0"/>
<rect x="115.1" y="49.4" width="1.8" height="0.5" fill="#f0b070"/>
<rect x="96.9" y="58.1" width="0.6" height="1" fill="#8a93a8"/>
<rect x="12.6" y="47.5" width="1" height="0.8" fill="#44506c"/>
<rect x="6.7" y="51" width="1.5" height="0.8" fill="#525e78"/>
<rect x="124.7" y="58.5" width="1.3" height="0.6" fill="#c89060"/>
<rect x="92.5" y="58.5" width="0.9" height="0.8" fill="#a09aa0"/>
<rect x="179.1" y="55.9" width="0.6" height="0.9" fill="#34425e"/>
<rect x="150.1" y="55.4" width="1" height="0.9" fill="#f0b070"/>
<rect x="127.8" y="59" width="1.1" height="0.7" fill="#525e78"/>
<rect x="167.7" y="47.6" width="1.3" height="0.8" fill="#f0b070"/>
<rect x="166.2" y="50.2" width="0.7" height="0.8" fill="#f0b070"/>
<rect x="146.1" y="59.2" width="1.5" height="1" fill="#525e78"/>
<rect x="104.7" y="56.6" width="0.8" height="0.7" fill="#525e78"/>
<rect x="33.6" y="57.2" width="0.7" height="0.7" fill="#9aa0b0"/>
<rect x="76.5" y="49.9" width="0.8" height="1" fill="#e0a065"/>
<rect x="126.2" y="48.6" width="1.2" height="1.1" fill="#9aa0b0"/>
<rect x="0.7" y="52.9" width="0.8" height="0.7" fill="#525e78"/>
<rect x="62.6" y="53.1" width="1.8" height="0.9" fill="#c89060"/>
<rect x="150.6" y="61.6" width="1" height="0.6" fill="#a09aa0"/>
<rect x="179.6" y="53" width="1.7" height="0.7" fill="#c89060"/>
<rect x="70.8" y="61.7" width="0.6" height="0.7" fill="#a09aa0"/>
<rect x="136.5" y="47.4" width="1.3" height="1" fill="#44506c"/>
<rect x="185.7" y="60.8" width="1.2" height="0.7" fill="#f0b070"/>
<rect x="177" y="52.4" width="0.9" height="0.7" fill="#e0a065"/>
<rect x="38.6" y="55" width="1.2" height="0.7" fill="#f0b070"/>
<rect x="124.7" y="58.3" width="1.1" height="1.1" fill="#9aa0b0"/>
<rect x="142.6" y="59.9" width="1.2" height="0.8" fill="#a09aa0"/>
<rect x="9.9" y="50.8" width="1.3" height="0.8" fill="#34425e"/>
<rect x="155.7" y="54.4" width="0.9" height="0.7" fill="#a09aa0"/>
<rect x="32.2" y="61" width="0.8" height="0.6" fill="#44506c"/>
<rect x="176.3" y="48.3" width="1.6" height="0.8" fill="#44506c"/>
<rect x="179.5" y="52.4" width="1.5" height="0.8" fill="#34425e"/>
<rect x="11.5" y="52.6" width="1.2" height="0.6" fill="#a09aa0"/>
<rect x="107.9" y="48.5" width="1" height="0.8" fill="#a09aa0"/>
<rect x="114.2" y="48.6" width="0.9" height="0.9" fill="#525e78"/>
<rect x="139.9" y="48.8" width="1.6" height="0.8" fill="#a09aa0"/>
<rect x="94.4" y="48.6" width="1.6" height="0.6" fill="#525e78"/>
<rect x="61.3" y="51.8" width="0.8" height="1" fill="#a09aa0"/>
<rect x="156.9" y="54" width="1.6" height="1.1" fill="#e0a065"/>
<rect x="62.6" y="56.9" width="1.3" height="0.7" fill="#a09aa0"/>
<rect x="25.6" y="58.5" width="0.9" height="0.9" fill="#44506c"/>
<rect x="18.9" y="53.1" width="1.2" height="0.8" fill="#8a93a8"/>
<rect x="195.4" y="50.9" width="0.9" height="1.1" fill="#34425e"/>
<rect x="42.4" y="58.4" width="1.4" height="0.6" fill="#44506c"/>
<rect x="19.5" y="51.8" width="1.6" height="0.8" fill="#8a93a8"/>
<rect x="54" y="59.7" width="1.4" height="0.5" fill="#34425e"/>
<rect x="82.2" y="52.1" width="1.7" height="0.7" fill="#c89060"/>
<rect x="79.2" y="59.6" width="1.2" height="0.7" fill="#34425e"/>
<rect x="53.2" y="46.9" width="1" height="0.7" fill="#44506c"/>
<rect x="62.4" y="59.1" width="1.4" height="0.7" fill="#f0b070"/>
<rect x="71.7" y="60.4" width="1.3" height="1.1" fill="#e0a065"/>
<rect x="162" y="56.2" width="1.1" height="0.7" fill="#525e78"/>
<rect x="58" y="59.4" width="1.1" height="1" fill="#9aa0b0"/>
<rect x="8" y="48.6" width="0.9" height="0.8" fill="#525e78"/>
<rect x="99.3" y="46.8" width="0.9" height="0.7" fill="#a09aa0"/>
<rect x="46.2" y="54.6" width="1.8" height="0.5" fill="#525e78"/>
<rect x="114.9" y="59.7" width="0.7" height="1" fill="#525e78"/>
<rect x="185.7" y="57.2" width="0.9" height="0.6" fill="#44506c"/>
<rect x="4.1" y="59" width="1.4" height="0.9" fill="#a09aa0"/>
<rect x="202.4" y="59.3" width="1" height="0.9" fill="#f0b070"/>
<rect x="169" y="51.1" width="0.9" height="0.9" fill="#8a93a8"/>
<rect x="112.1" y="50.2" width="1" height="0.9" fill="#a09aa0"/>
<rect x="192.7" y="57.9" width="1.8" height="1" fill="#c89060"/>
<rect x="186" y="51.3" width="1.2" height="0.9" fill="#9aa0b0"/>
<rect x="8.5" y="56.1" width="1.6" height="0.5" fill="#8a93a8"/>
<rect x="53.3" y="54.4" width="0.9" height="0.9" fill="#8a93a8"/>
<rect x="77.2" y="57.1" width="1" height="1" fill="#f0b070"/>
<rect x="177" y="59.3" width="1.4" height="0.6" fill="#8a93a8"/>
<rect x="155.5" y="50.7" width="0.8" height="0.7" fill="#f0b070"/>
<rect x="140.6" y="50.1" width="1.8" height="0.8" fill="#f0b070"/>
<rect x="145.7" y="58.8" width="0.9" height="0.7" fill="#f0b070"/>
<rect x="52.9" y="56.8" width="1.7" height="1.1" fill="#8a93a8"/>
<rect x="10.2" y="57.6" width="1.6" height="0.6" fill="#c89060"/>
<rect x="74.9" y="54.8" width="1.1" height="1" fill="#c89060"/>
<rect x="174.9" y="59.8" width="1" height="0.7" fill="#f0b070"/>
<rect x="168.1" y="59.5" width="0.9" height="0.9" fill="#34425e"/>
<rect x="85.7" y="48.7" width="1.4" height="0.6" fill="#8a93a8"/>
<rect x="59.4" y="59.9" width="0.8" height="0.6" fill="#9aa0b0"/>
<rect x="196" y="50.4" width="1.1" height="0.6" fill="#9aa0b0"/>
<rect x="185.7" y="50.7" width="0.9" height="0.7" fill="#f0b070"/>
<rect x="67.7" y="47.8" width="1" height="0.7" fill="#a09aa0"/>
<rect x="10.8" y="47.5" width="1.4" height="0.5" fill="#34425e"/>
<rect x="70.6" y="48.7" width="1.8" height="0.7" fill="#a09aa0"/>
<rect x="6.7" y="51.9" width="1.1" height="0.5" fill="#525e78"/>
<rect x="115.6" y="56.7" width="0.9" height="1.1" fill="#34425e"/>
<rect x="181.6" y="61.9" width="1.3" height="1.1" fill="#9aa0b0"/>
<rect x="9.9" y="59.8" width="1.2" height="0.9" fill="#f0b070"/>
<rect x="56.9" y="46.9" width="1" height="0.8" fill="#525e78"/>
<rect x="2.2" y="49.8" width="0.6" height="0.8" fill="#44506c"/>
<rect x="170.1" y="58.8" width="1.1" height="1" fill="#9aa0b0"/>
<rect x="173.8" y="58.4" width="1.7" height="0.8" fill="#c89060"/>
<rect x="176.4" y="52.8" width="0.6" height="0.6" fill="#e0a065"/>
<rect x="68" y="57.7" width="1.4" height="1" fill="#525e78"/>
<rect x="76.6" y="56.4" width="1" height="0.5" fill="#44506c"/>
<rect x="137.2" y="55.7" width="1" height="0.9" fill="#34425e"/>
<rect x="44.4" y="58" width="1" height="0.6" fill="#525e78"/>
<rect x="73" y="48.9" width="1" height="0.8" fill="#44506c"/>
<rect x="2" y="54.3" width="0.7" height="1.1" fill="#8a93a8"/>
<rect x="176.4" y="58.3" width="1.7" height="0.7" fill="#e0a065"/>
<rect x="158.4" y="48.2" width="1.1" height="1.1" fill="#44506c"/>
<rect x="46.1" y="52.8" width="1.6" height="0.5" fill="#f0b070"/>
<rect x="81.9" y="60.8" width="1.5" height="0.8" fill="#f0b070"/>
<rect x="2.1" y="57.8" width="1.7" height="0.5" fill="#8a93a8"/>
<rect x="129.5" y="51.8" width="1.6" height="0.9" fill="#9aa0b0"/>
<rect x="106" y="55.3" width="0.7" height="0.9" fill="#c89060"/>
<rect x="156.3" y="53.3" width="1.1" height="0.7" fill="#9aa0b0"/>
<rect x="48.3" y="55.8" width="1.2" height="0.5" fill="#e0a065"/>
<rect x="131.7" y="53.4" width="1.3" height="1.1" fill="#e0a065"/>
<rect x="31.9" y="53.8" width="1.5" height="0.7" fill="#34425e"/>
<rect x="154.7" y="61.8" width="0.7" height="1.1" fill="#8a93a8"/>
<rect x="158.1" y="60.4" width="0.9" height="1" fill="#c89060"/>
<rect x="136.3" y="61" width="1.6" height="0.8" fill="#c89060"/>
<rect x="208.7" y="47.5" width="1.5" height="0.7" fill="#e0a065"/>
<rect x="169.5" y="53.5" width="0.6" height="0.8" fill="#525e78"/>
<rect x="102.7" y="61.4" width="0.7" height="0.8" fill="#a09aa0"/>
<rect x="165.3" y="54.1" width="0.7" height="0.8" fill="#a09aa0"/>
<rect x="11.7" y="60" width="1.6" height="0.6" fill="#c89060"/>
<rect x="76.8" y="48.1" width="1.7" height="1.1" fill="#e0a065"/>
<rect x="46.1" y="51" width="0.8" height="0.7" fill="#8a93a8"/>
<rect x="178.3" y="56.1" width="0.7" height="1.1" fill="#9aa0b0"/>
<rect x="43.4" y="56.3" width="1.3" height="1.1" fill="#a09aa0"/>
<rect x="79.4" y="59.2" width="1.6" height="1.1" fill="#44506c"/>
<rect x="138.2" y="49.7" width="0.8" height="0.6" fill="#a09aa0"/>
<rect x="145.7" y="53.7" width="0.9" height="0.7" fill="#f0b070"/>
<rect x="72.2" y="56.2" width="0.8" height="1.1" fill="#34425e"/>
<rect x="145.2" y="57.9" width="1.6" height="1" fill="#44506c"/>
<rect x="42" y="47.6" width="1.1" height="1" fill="#34425e"/>
<rect x="85.9" y="53.6" width="0.7" height="0.6" fill="#525e78"/>
<rect x="107.9" y="53" width="1.3" height="0.7" fill="#9aa0b0"/>
<rect x="183.3" y="50.9" width="1.4" height="0.8" fill="#c89060"/>
<rect x="196.1" y="52.5" width="1.3" height="0.8" fill="#8a93a8"/>
<rect x="13.5" y="53" width="1.3" height="0.9" fill="#34425e"/>
<rect x="56.2" y="56.8" width="1.4" height="0.6" fill="#e0a065"/>
<rect x="86.4" y="48.5" width="1.1" height="0.7" fill="#34425e"/>
<rect x="21.4" y="60.1" width="1.3" height="0.6" fill="#c89060"/>
<rect x="188.3" y="47.9" width="0.6" height="0.5" fill="#44506c"/>
<rect x="123.9" y="57.3" width="1.4" height="0.6" fill="#e0a065"/>
<rect x="15.2" y="49.1" width="1" height="0.9" fill="#525e78"/>
<rect x="127.2" y="61.5" width="1.8" height="0.7" fill="#e0a065"/>
<rect x="174" y="56.6" width="1.8" height="0.5" fill="#c89060"/>
<rect x="97.1" y="52.7" width="1.2" height="0.9" fill="#a09aa0"/>
<rect x="104.4" y="59.4" width="1.1" height="0.9" fill="#525e78"/>
<rect x="17.5" y="49.1" width="1.4" height="1.1" fill="#34425e"/>
<rect x="99.5" y="60.2" width="1.2" height="0.5" fill="#8a93a8"/>
<rect x="180.5" y="61.1" width="0.7" height="0.7" fill="#e0a065"/>
<rect x="117.8" y="61.6" width="1" height="0.8" fill="#c89060"/>
<rect x="26.2" y="55.3" width="1.4" height="0.8" fill="#f0b070"/>
<rect x="64.8" y="52" width="0.9" height="0.7" fill="#a09aa0"/>
<rect x="11.4" y="49.9" width="0.8" height="0.6" fill="#9aa0b0"/>
<rect x="28.9" y="60.4" width="0.8" height="1.1" fill="#525e78"/>
<rect x="110.2" y="52.8" width="1.1" height="0.5" fill="#c89060"/>
<rect x="32.3" y="59.2" width="0.8" height="0.8" fill="#8a93a8"/>
<rect x="6" y="48.2" width="1.7" height="0.8" fill="#34425e"/>
<rect x="160.1" y="58.5" width="1.1" height="0.5" fill="#8a93a8"/>
<rect x="54.8" y="48.2" width="1" height="0.8" fill="#8a93a8"/>
<rect x="137.3" y="60.2" width="1.3" height="0.8" fill="#f0b070"/>
<rect x="189.8" y="52.6" width="0.9" height="0.9" fill="#34425e"/>
<rect x="46.2" y="47.8" width="1.1" height="0.9" fill="#9aa0b0"/>
<rect x="70.1" y="48.3" width="1.6" height="0.5" fill="#34425e"/>
<rect x="110.9" y="55" width="1.6" height="0.9" fill="#8a93a8"/>
<rect x="149.8" y="47" width="1.2" height="0.6" fill="#44506c"/>
<rect x="157.4" y="54.1" width="1" height="0.9" fill="#e0a065"/>
<rect x="22" y="57.2" width="1.8" height="0.7" fill="#44506c"/>
<rect x="125.6" y="52.2" width="0.9" height="1" fill="#34425e"/>
<rect x="11.8" y="49.3" width="1.2" height="1" fill="#c89060"/>
<rect x="11.1" y="47.9" width="1.3" height="1" fill="#34425e"/>
<rect x="198.2" y="56.5" width="1.1" height="0.7" fill="#44506c"/>
<rect x="142.8" y="47.8" width="1.6" height="0.7" fill="#a09aa0"/>
<rect x="66.6" y="59.2" width="1.4" height="0.5" fill="#34425e"/>
<rect x="160.4" y="47.2" width="1.3" height="1.1" fill="#c89060"/>
<rect x="134.1" y="46.8" width="1.3" height="0.5" fill="#a09aa0"/>
<rect x="154.8" y="53" width="0.8" height="0.6" fill="#c89060"/>
<rect x="143.9" y="48.7" width="1.4" height="1" fill="#9aa0b0"/>
<rect x="93.5" y="60.4" width="1.6" height="1.1" fill="#c89060"/>
<rect x="74.7" y="59.4" width="1.4" height="0.7" fill="#c89060"/>
<rect x="145.1" y="56.6" width="1.7" height="0.6" fill="#c89060"/>
<rect x="87.1" y="54.8" width="0.8" height="0.7" fill="#c89060"/>
<rect x="85.6" y="60.4" width="0.8" height="0.9" fill="#8a93a8"/>
<rect x="103.8" y="53.3" width="1.2" height="0.8" fill="#8a93a8"/>
<rect x="115.4" y="59.8" width="0.8" height="0.7" fill="#44506c"/>
<rect x="34.4" y="51.9" width="1.4" height="0.8" fill="#525e78"/>
<rect x="123.6" y="53.7" width="1.2" height="1.1" fill="#f0b070"/>
<rect x="68.9" y="57.3" width="1.4" height="0.7" fill="#a09aa0"/>
<rect x="86.3" y="47.2" width="1.6" height="0.7" fill="#c89060"/>
<rect x="51.1" y="49.8" width="1.3" height="1.1" fill="#c89060"/>
<rect x="191" y="53.6" width="0.7" height="0.6" fill="#9aa0b0"/>
<rect x="130.2" y="57" width="1.6" height="0.5" fill="#525e78"/>
<rect x="146.7" y="55.3" width="1.2" height="0.8" fill="#525e78"/>
<rect x="93.8" y="61.5" width="1.6" height="0.6" fill="#44506c"/>
<rect x="164.7" y="49.9" width="1.6" height="0.9" fill="#a09aa0"/>
<rect x="72.3" y="49" width="1.3" height="1" fill="#a09aa0"/>
<rect x="194" y="57.2" width="0.7" height="1" fill="#44506c"/>
<rect x="169.4" y="55.9" width="0.7" height="0.7" fill="#34425e"/>
<rect x="36.2" y="60.3" width="0.9" height="0.8" fill="#34425e"/>
<rect x="55.1" y="47.7" width="0.9" height="0.7" fill="#e0a065"/>
<rect x="106.9" y="60" width="1.6" height="0.8" fill="#f0b070"/>
<rect x="27.5" y="47.9" width="1.2" height="0.9" fill="#f0b070"/>
<rect x="193" y="58.5" width="1" height="0.8" fill="#34425e"/>
<rect x="163.8" y="56.6" width="0.9" height="0.8" fill="#525e78"/>
<rect x="77.8" y="57.8" width="0.9" height="0.9" fill="#525e78"/>
<rect x="186" y="47.7" width="0.7" height="1.1" fill="#525e78"/>
<rect x="138" y="47.6" width="0.7" height="0.8" fill="#e0a065"/>
<rect x="25.1" y="61.8" width="1" height="0.6" fill="#34425e"/>
<rect x="199.3" y="56.8" width="0.6" height="0.8" fill="#f0b070"/>
<rect x="206.4" y="57.1" width="1.3" height="0.8" fill="#525e78"/>
<rect x="142.7" y="47.8" width="1.3" height="1.1" fill="#44506c"/>
<rect x="184.7" y="48.1" width="1.2" height="0.5" fill="#f0b070"/>
<rect x="102.3" y="55.1" width="0.7" height="1" fill="#525e78"/>
<rect x="53.8" y="49.9" width="1.7" height="1.1" fill="#34425e"/>
<rect x="199.5" y="60.8" width="1.7" height="0.5" fill="#8a93a8"/>
<rect x="102.8" y="55.7" width="1.7" height="0.6" fill="#44506c"/>
<rect x="109" y="61.4" width="0.7" height="0.7" fill="#e0a065"/>
<rect x="63.2" y="61.8" width="0.6" height="1" fill="#8a93a8"/>
<rect x="144.6" y="54.6" width="0.6" height="0.5" fill="#c89060"/>
<rect x="166.8" y="61.6" width="1.1" height="0.7" fill="#a09aa0"/>
<rect x="72.8" y="46.7" width="0.9" height="0.9" fill="#a09aa0"/>
<rect x="110.5" y="51.7" width="1.1" height="0.6" fill="#44506c"/>
<rect x="185.2" y="49.2" width="0.9" height="0.8" fill="#f0b070"/>
<rect x="46.4" y="60.7" width="0.9" height="0.9" fill="#f0b070"/>
<rect x="54.7" y="54.6" width="1.3" height="0.5" fill="#34425e"/>
<rect x="65.3" y="47.5" width="1" height="0.9" fill="#525e78"/>
<rect x="141.6" y="58.7" width="0.7" height="0.9" fill="#525e78"/>
<rect x="105.8" y="53.3" width="1.1" height="1.1" fill="#e0a065"/>
<rect x="77.9" y="52" width="1.8" height="0.7" fill="#c89060"/>
<rect x="28.5" y="58.7" width="1" height="1" fill="#a09aa0"/>
<rect x="79.7" y="50.9" width="1.2" height="1" fill="#c89060"/>
<rect x="2.9" y="54.2" width="1.7" height="0.8" fill="#8a93a8"/>
<rect x="33.3" y="47.5" width="1.7" height="1.1" fill="#f0b070"/>
<rect x="195.6" y="51.8" width="0.8" height="0.9" fill="#f0b070"/>
<rect x="198.6" y="49.5" width="1.4" height="0.6" fill="#f0b070"/>
<rect x="178.3" y="60.2" width="1" height="0.9" fill="#9aa0b0"/>
<rect x="194" y="48.8" width="1.8" height="0.9" fill="#c89060"/>
<rect x="142" y="48.4" width="0.8" height="0.6" fill="#44506c"/>
<rect x="110.7" y="54.9" width="1.5" height="0.8" fill="#9aa0b0"/>
<rect x="198.9" y="47.8" width="0.6" height="1.1" fill="#a09aa0"/>
<rect x="204.9" y="61" width="0.8" height="1.1" fill="#525e78"/>
<rect x="134" y="48.1" width="1.6" height="1.1" fill="#9aa0b0"/>
<rect x="96.5" y="55.8" width="1.2" height="0.6" fill="#9aa0b0"/>
<rect x="198.3" y="61.7" width="1.1" height="0.9" fill="#e0a065"/>
<rect x="114.1" y="50.9" width="0.8" height="0.9" fill="#e0a065"/>
<rect x="44.4" y="46.8" width="1.1" height="1.1" fill="#a09aa0"/>
<rect x="128.6" y="47.5" width="0.8" height="0.5" fill="#e0a065"/>
<rect x="63.9" y="47.1" width="1.6" height="0.8" fill="#34425e"/>
<rect x="144.4" y="50.4" width="0.8" height="0.6" fill="#44506c"/>
<rect x="121.7" y="56" width="1.2" height="0.8" fill="#8a93a8"/>
<rect x="69.8" y="60.7" width="1.4" height="0.9" fill="#a09aa0"/>
<rect x="187.1" y="56.7" width="1.2" height="1.1" fill="#9aa0b0"/>
<rect x="60.6" y="49.1" width="0.9" height="0.9" fill="#44506c"/>
<rect x="33.1" y="61.2" width="1.4" height="0.9" fill="#34425e"/>
<rect x="0.7" y="53.9" width="1.2" height="1.1" fill="#c89060"/>
<rect x="108" y="52.4" width="1.4" height="0.7" fill="#e0a065"/>
<rect x="104.5" y="59.6" width="0.7" height="0.7" fill="#9aa0b0"/>
<rect x="134.2" y="47.5" width="1.8" height="0.7" fill="#f0b070"/>
<rect x="93" y="47.8" width="0.9" height="1" fill="#e0a065"/>
<rect x="167.6" y="50.4" width="0.7" height="0.7" fill="#525e78"/>
<rect x="12.2" y="47.6" width="0.8" height="0.7" fill="#9aa0b0"/>
<rect x="139.8" y="54.3" width="1.4" height="0.9" fill="#a09aa0"/>
<rect x="93.7" y="51.1" width="1.4" height="1" fill="#f0b070"/>
<rect x="149.4" y="59" width="0.7" height="0.8" fill="#f0b070"/>
<rect x="150" y="47.2" width="1.7" height="0.9" fill="#e0a065"/>
<rect x="98.9" y="56.5" width="1.7" height="0.9" fill="#8a93a8"/>
<rect x="13.5" y="56.8" width="0.9" height="0.7" fill="#c89060"/>
<rect x="81.9" y="50.4" width="1.8" height="0.9" fill="#34425e"/>
<rect x="26.3" y="57.8" width="1.1" height="0.7" fill="#e0a065"/>
<rect x="82.8" y="58.2" width="1.3" height="1.1" fill="#e0a065"/>
<rect x="134.2" y="54.1" width="1.5" height="0.5" fill="#8a93a8"/>
<rect x="185.6" y="54.2" width="0.9" height="0.9" fill="#a09aa0"/>
<rect x="24.7" y="48.9" width="1" height="0.7" fill="#8a93a8"/>
<rect x="39.3" y="56.5" width="1" height="1.1" fill="#c89060"/>
<rect x="191.4" y="51" width="1.8" height="1" fill="#34425e"/>
<rect x="70" y="50.8" width="1.8" height="0.5" fill="#525e78"/>
<rect x="20.3" y="57.4" width="1.2" height="0.9" fill="#e0a065"/>
<rect x="52.5" y="49.6" width="0.9" height="0.7" fill="#44506c"/>
<rect x="14.7" y="47.3" width="1" height="1" fill="#44506c"/>
<rect x="179.9" y="54.7" width="1.1" height="0.6" fill="#a09aa0"/>
<rect x="99.5" y="61.4" width="1.1" height="0.8" fill="#c89060"/>
<rect x="87.3" y="56.3" width="1.7" height="0.7" fill="#525e78"/>
<rect x="113.7" y="62" width="0.7" height="0.6" fill="#525e78"/>
<rect x="207.3" y="56" width="1.3" height="0.7" fill="#f0b070"/>
<rect x="151.1" y="57.8" width="0.9" height="1" fill="#44506c"/>
<rect x="8.7" y="47.4" width="1.1" height="0.6" fill="#e0a065"/>
<rect x="99.7" y="61.3" width="1.3" height="0.5" fill="#e0a065"/>
<rect x="97.6" y="56" width="1.8" height="0.8" fill="#f0b070"/>
<rect x="164.8" y="50.3" width="1.4" height="0.9" fill="#a09aa0"/>
<rect x="9.7" y="57.5" width="0.9" height="0.8" fill="#f0b070"/>
<rect x="84.6" y="52.4" width="1.5" height="0.9" fill="#8a93a8"/>
<rect x="43.7" y="50.3" width="1.8" height="1" fill="#9aa0b0"/>
<rect x="194.5" y="56.4" width="1" height="0.6" fill="#44506c"/>
<rect x="181.8" y="54.4" width="1.5" height="1" fill="#8a93a8"/>
<rect x="40.2" y="47" width="1.4" height="0.8" fill="#c89060"/>
<rect x="76.8" y="53.3" width="1.1" height="0.6" fill="#9aa0b0"/>
<rect x="4.9" y="60" width="1.1" height="0.8" fill="#c89060"/>
<rect x="184.7" y="53.5" width="1.4" height="0.8" fill="#8a93a8"/>
<rect x="168.1" y="60.9" width="1.5" height="0.7" fill="#c89060"/>
<rect x="152" y="61.2" width="1.1" height="0.9" fill="#9aa0b0"/>
<rect x="47.5" y="58.4" width="1.3" height="0.9" fill="#525e78"/>
<rect x="118.3" y="52.6" width="1" height="0.8" fill="#8a93a8"/>
<rect x="19" y="52.4" width="1" height="1.1" fill="#8a93a8"/>
<rect x="157" y="53.2" width="1.3" height="1" fill="#9aa0b0"/>
<rect x="175.8" y="52.6" width="1.5" height="0.8" fill="#44506c"/>
<rect x="52.8" y="57.4" width="1.1" height="0.6" fill="#525e78"/>
<rect x="5.3" y="58.2" width="1.6" height="0.8" fill="#44506c"/>
<rect x="4.5" y="58.2" width="1.2" height="0.8" fill="#44506c"/>
<rect x="35.1" y="56.2" width="1.4" height="0.7" fill="#9aa0b0"/>
<rect x="169.3" y="53" width="0.7" height="0.5" fill="#f0b070"/>
<rect x="97.2" y="55.1" width="1.3" height="1.1" fill="#9aa0b0"/>
<rect x="74.1" y="58.3" width="0.6" height="0.8" fill="#c89060"/>
<rect x="35.3" y="52.1" width="1.1" height="0.7" fill="#a09aa0"/>
<rect x="75.3" y="54.8" width="1.2" height="0.7" fill="#e0a065"/>
<rect x="85" y="58.7" width="0.8" height="0.5" fill="#a09aa0"/>
<rect x="191.2" y="56.4" width="1.5" height="0.7" fill="#e0a065"/>
<rect x="102.7" y="57.3" width="1.4" height="0.7" fill="#e0a065"/>
<rect x="69.4" y="56.2" width="1.4" height="0.7" fill="#44506c"/>
<rect x="184.5" y="49.9" width="1.4" height="0.5" fill="#9aa0b0"/>
<rect x="192.7" y="58.7" width="1.3" height="1.1" fill="#34425e"/>
<rect x="46.9" y="50" width="0.8" height="1.1" fill="#44506c"/>
<rect x="71.7" y="53.3" width="0.8" height="0.6" fill="#8a93a8"/>
<rect x="124.5" y="58.3" width="1" height="0.9" fill="#9aa0b0"/>
<rect x="45.4" y="60.2" width="1.2" height="0.5" fill="#a09aa0"/>
<rect x="103.5" y="56.9" width="1.5" height="0.9" fill="#c89060"/>
<rect x="197.6" y="46.9" width="0.7" height="0.7" fill="#44506c"/>
<rect x="206.8" y="55.8" width="0.7" height="0.6" fill="#8a93a8"/>
<rect x="4.4" y="57.3" width="1.3" height="0.5" fill="#f0b070"/>
<rect x="32.1" y="57" width="1.2" height="0.7" fill="#e0a065"/>
<rect x="117.9" y="52" width="0.6" height="1.1" fill="#44506c"/>
<rect x="62.9" y="46.7" width="1" height="0.9" fill="#44506c"/>
<rect x="56.4" y="48.3" width="1.2" height="0.8" fill="#c89060"/>
<rect x="65.5" y="60.2" width="1.4" height="0.8" fill="#9aa0b0"/>
<path d="M46 60L80 61.500L120 62L158 64L168 70L186 66L210 68V96L196 104L176 98L150 92L132 96L118 104L104 106L88 100L70 92L54 80L44 70Z" fill="#6a81ad"/>
<path d="M0 122L10 119L30 118L50 114L64 110L72 118L66 126L40 132L14 132L0 138Z" fill="#43557a"/>
<path d="M40 59.5L90 58.5" stroke="#c8783a" stroke-width="3.8" stroke-linecap="round" opacity="0.45" fill="none"/>
<path d="M40 59.5L90 58.5" stroke="#f39a45" stroke-width="2.2" stroke-linecap="round" opacity="0.95" fill="none"/>
<path d="M40 59.5L90 58.5" stroke="#ffd28a" stroke-width="0.9" stroke-linecap="round" opacity="0.8" fill="none"/>
<path d="M178 58L210 56" stroke="#c8783a" stroke-width="4.2" stroke-linecap="round" opacity="0.45" fill="none"/>
<path d="M178 58L210 56" stroke="#f39a45" stroke-width="2.6" stroke-linecap="round" opacity="0.95" fill="none"/>
<path d="M178 58L210 56" stroke="#ffd28a" stroke-width="1" stroke-linecap="round" opacity="0.8" fill="none"/>
<path d="M100 58L150 57" stroke="#c8783a" stroke-width="3" stroke-linecap="round" opacity="0.45" fill="none"/>
<path d="M100 58L150 57" stroke="#f39a45" stroke-width="1.4" stroke-linecap="round" opacity="0.95" fill="none"/>
<path d="M100 58L150 57" stroke="#ffd28a" stroke-width="0.6" stroke-linecap="round" opacity="0.8" fill="none"/>
<path d="M46 66L130 64" stroke="#c8783a" stroke-width="3.4" stroke-linecap="round" opacity="0.45" fill="none"/>
<path d="M46 66L130 64" stroke="#f39a45" stroke-width="1.8" stroke-linecap="round" opacity="0.95" fill="none"/>
<path d="M46 66L130 64" stroke="#ffd28a" stroke-width="0.7" stroke-linecap="round" opacity="0.8" fill="none"/>
<path d="M108 71L150 72" stroke="#c8783a" stroke-width="3.2" stroke-linecap="round" opacity="0.45" fill="none"/>
<path d="M108 71L150 72" stroke="#f39a45" stroke-width="1.6" stroke-linecap="round" opacity="0.95" fill="none"/>
<path d="M108 71L150 72" stroke="#ffd28a" stroke-width="0.6" stroke-linecap="round" opacity="0.8" fill="none"/>
<path d="M150 72L168 76" stroke="#c8783a" stroke-width="3.2" stroke-linecap="round" opacity="0.45" fill="none"/>
<path d="M150 72L168 76" stroke="#f39a45" stroke-width="1.6" stroke-linecap="round" opacity="0.95" fill="none"/>
<path d="M150 72L168 76" stroke="#ffd28a" stroke-width="0.6" stroke-linecap="round" opacity="0.8" fill="none"/>
<path d="M60 75L72 77" stroke="#c8783a" stroke-width="3" stroke-linecap="round" opacity="0.45" fill="none"/>
<path d="M60 75L72 77" stroke="#f39a45" stroke-width="1.4" stroke-linecap="round" opacity="0.95" fill="none"/>
<path d="M60 75L72 77" stroke="#ffd28a" stroke-width="0.6" stroke-linecap="round" opacity="0.8" fill="none"/>
<path d="M56 83L76 88" stroke="#c8783a" stroke-width="3.4" stroke-linecap="round" opacity="0.45" fill="none"/>
<path d="M56 83L76 88" stroke="#f39a45" stroke-width="1.8" stroke-linecap="round" opacity="0.95" fill="none"/>
<path d="M56 83L76 88" stroke="#ffd28a" stroke-width="0.7" stroke-linecap="round" opacity="0.8" fill="none"/>
<path d="M60 90L96 101" stroke="#c8783a" stroke-width="3.8" stroke-linecap="round" opacity="0.45" fill="none"/>
<path d="M60 90L96 101" stroke="#f39a45" stroke-width="2.2" stroke-linecap="round" opacity="0.95" fill="none"/>
<path d="M60 90L96 101" stroke="#ffd28a" stroke-width="0.9" stroke-linecap="round" opacity="0.8" fill="none"/>
<path d="M130 84L148 88" stroke="#c8783a" stroke-width="3.8" stroke-linecap="round" opacity="0.45" fill="none"/>
<path d="M130 84L148 88" stroke="#f39a45" stroke-width="2.2" stroke-linecap="round" opacity="0.95" fill="none"/>
<path d="M130 84L148 88" stroke="#ffd28a" stroke-width="0.9" stroke-linecap="round" opacity="0.8" fill="none"/>
<path d="M146 88L172 94" stroke="#c8783a" stroke-width="3.6" stroke-linecap="round" opacity="0.45" fill="none"/>
<path d="M146 88L172 94" stroke="#f39a45" stroke-width="2" stroke-linecap="round" opacity="0.95" fill="none"/>
<path d="M146 88L172 94" stroke="#ffd28a" stroke-width="0.8" stroke-linecap="round" opacity="0.8" fill="none"/>
<path d="M196 88L210 91" stroke="#c8783a" stroke-width="3.4" stroke-linecap="round" opacity="0.45" fill="none"/>
<path d="M196 88L210 91" stroke="#f39a45" stroke-width="1.8" stroke-linecap="round" opacity="0.95" fill="none"/>
<path d="M196 88L210 91" stroke="#ffd28a" stroke-width="0.7" stroke-linecap="round" opacity="0.8" fill="none"/>
<path d="M178 96L206 101" stroke="#c8783a" stroke-width="3.4" stroke-linecap="round" opacity="0.45" fill="none"/>
<path d="M178 96L206 101" stroke="#f39a45" stroke-width="1.8" stroke-linecap="round" opacity="0.95" fill="none"/>
<path d="M178 96L206 101" stroke="#ffd28a" stroke-width="0.7" stroke-linecap="round" opacity="0.8" fill="none"/>
<path d="M162 74L172 77" stroke="#c8783a" stroke-width="3.2" stroke-linecap="round" opacity="0.45" fill="none"/>
<path d="M162 74L172 77" stroke="#f39a45" stroke-width="1.6" stroke-linecap="round" opacity="0.95" fill="none"/>
<path d="M162 74L172 77" stroke="#ffd28a" stroke-width="0.6" stroke-linecap="round" opacity="0.8" fill="none"/>
<path d="M20 70L30 74" stroke="#c8783a" stroke-width="3.1" stroke-linecap="round" opacity="0.45" fill="none"/>
<path d="M20 70L30 74" stroke="#f39a45" stroke-width="1.5" stroke-linecap="round" opacity="0.95" fill="none"/>
<path d="M20 70L30 74" stroke="#ffd28a" stroke-width="0.6" stroke-linecap="round" opacity="0.8" fill="none"/>
<path d="M4 86L8 90" stroke="#c8783a" stroke-width="3.2" stroke-linecap="round" opacity="0.45" fill="none"/>
<path d="M4 86L8 90" stroke="#f39a45" stroke-width="1.6" stroke-linecap="round" opacity="0.95" fill="none"/>
<path d="M4 86L8 90" stroke="#ffd28a" stroke-width="0.6" stroke-linecap="round" opacity="0.8" fill="none"/>
<path d="M16 60L22 61" stroke="#c8783a" stroke-width="2.8" stroke-linecap="round" opacity="0.45" fill="none"/>
<path d="M16 60L22 61" stroke="#f39a45" stroke-width="1.2" stroke-linecap="round" opacity="0.95" fill="none"/>
<path d="M16 60L22 61" stroke="#ffd28a" stroke-width="0.5" stroke-linecap="round" opacity="0.8" fill="none"/>
<circle cx="60" cy="59" r="7" fill="#e07a35" opacity="0.33" filter="url(#gb2)"/>
<circle cx="195" cy="57" r="7" fill="#e07a35" opacity="0.33" filter="url(#gb2)"/>
<circle cx="30" cy="118" r="12" fill="#e07a35" opacity="0.33" filter="url(#gb2)"/>
<circle cx="100" cy="124" r="14" fill="#e07a35" opacity="0.33" filter="url(#gb2)"/>
<circle cx="78" cy="148" r="9" fill="#e07a35" opacity="0.33" filter="url(#gb2)"/>
<circle cx="155" cy="155" r="10" fill="#e07a35" opacity="0.33" filter="url(#gb2)"/>
<circle cx="186" cy="120" r="8" fill="#e07a35" opacity="0.33" filter="url(#gb2)"/>
<circle cx="34" cy="168" r="10" fill="#e07a35" opacity="0.33" filter="url(#gb2)"/>
<circle cx="54" cy="180" r="8" fill="#e07a35" opacity="0.33" filter="url(#gb2)"/>
<circle cx="187" cy="178" r="9" fill="#e07a35" opacity="0.33" filter="url(#gb2)"/>
<circle cx="128" cy="198" r="10" fill="#e07a35" opacity="0.33" filter="url(#gb2)"/>
<circle cx="46" cy="206" r="8" fill="#e07a35" opacity="0.33" filter="url(#gb2)"/>
<circle cx="10" cy="150" r="8" fill="#e07a35" opacity="0.33" filter="url(#gb2)"/>
<circle cx="135" cy="163" r="8" fill="#e07a35" opacity="0.33" filter="url(#gb2)"/>
<circle cx="110" cy="108" r="8" fill="#e07a35" opacity="0.33" filter="url(#gb2)"/>
<circle cx="170" cy="112" r="9" fill="#e07a35" opacity="0.33" filter="url(#gb2)"/>
<circle cx="12" cy="90" r="8" fill="#e07a35" opacity="0.33" filter="url(#gb2)"/>
<path d="M81.9 145.4L83.5 141.2" stroke="#ff9a4a" stroke-width="1.7" stroke-linecap="round" opacity="0.95" fill="none"/>
<path d="M165.6 158.6L171.3 161.7" stroke="#e8742e" stroke-width="1.5" stroke-linecap="round" opacity="0.95" fill="none"/>
<path d="M6.7 133.1L12.4 134.9" stroke="#ff9a4a" stroke-width="1.7" stroke-linecap="round" opacity="0.95" fill="none"/>
<path d="M182.4 121L184.6 115.3" stroke="#ff9a4a" stroke-width="2" stroke-linecap="round" opacity="0.95" fill="none"/>
<path d="M19 203.9L23 206" stroke="#ff9a4a" stroke-width="2.3" stroke-linecap="round" opacity="0.95" fill="none"/>
<path d="M175.4 200.9L177.5 202" stroke="#e8742e" stroke-width="1.8" stroke-linecap="round" opacity="0.95" fill="none"/>
<path d="M108.1 159.8L109.7 156.6" stroke="#f5843a" stroke-width="1.8" stroke-linecap="round" opacity="0.95" fill="none"/>
<path d="M23.7 158.5L26 152.6" stroke="#f5843a" stroke-width="2.1" stroke-linecap="round" opacity="0.95" fill="none"/>
<path d="M207.8 149.2L214 151.2" stroke="#ff9a4a" stroke-width="2.1" stroke-linecap="round" opacity="0.95" fill="none"/>
<path d="M149 106.2L151.1 107.3" stroke="#f5843a" stroke-width="2" stroke-linecap="round" opacity="0.95" fill="none"/>
<path d="M137 202.9L142.8 204.7" stroke="#ff9a4a" stroke-width="2.3" stroke-linecap="round" opacity="0.95" fill="none"/>
<path d="M46.2 102L50.8 104.5" stroke="#f5843a" stroke-width="1.9" stroke-linecap="round" opacity="0.95" fill="none"/>
<path d="M70.1 183.8L76.6 185.8" stroke="#ff9a4a" stroke-width="1.8" stroke-linecap="round" opacity="0.95" fill="none"/>
<path d="M39.5 120.2L44.8 123.1" stroke="#f5843a" stroke-width="2.1" stroke-linecap="round" opacity="0.95" fill="none"/>
<path d="M152.5 137.8L157.4 140.5" stroke="#ff9a4a" stroke-width="2" stroke-linecap="round" opacity="0.95" fill="none"/>
<path d="M99.5 118L102.5 111.9" stroke="#ff9a4a" stroke-width="2.2" stroke-linecap="round" opacity="0.95" fill="none"/>
<path d="M133.4 120.3L137.9 122.5" stroke="#e8742e" stroke-width="2.2" stroke-linecap="round" opacity="0.95" fill="none"/>
<path d="M173 142.1L175.8 143.7" stroke="#ff9a4a" stroke-width="1.7" stroke-linecap="round" opacity="0.95" fill="none"/>
<path d="M50.4 206.5L53.4 208.1" stroke="#f5843a" stroke-width="2" stroke-linecap="round" opacity="0.95" fill="none"/>
<path d="M146 127.7L149.5 129.4" stroke="#ff9a4a" stroke-width="2.4" stroke-linecap="round" opacity="0.95" fill="none"/>
<path d="M145.2 171.6L148.3 165.7" stroke="#f5843a" stroke-width="1.8" stroke-linecap="round" opacity="0.95" fill="none"/>
<path d="M123.5 145.1L124.7 142.8" stroke="#f5843a" stroke-width="1.3" stroke-linecap="round" opacity="0.95" fill="none"/>
<path d="M127.9 139.6L129.6 135.1" stroke="#ff9a4a" stroke-width="1.4" stroke-linecap="round" opacity="0.95" fill="none"/>
<path d="M127.7 170.8L130.4 172.1" stroke="#ff9a4a" stroke-width="1.8" stroke-linecap="round" opacity="0.95" fill="none"/>
<path d="M50.2 162.2L52.8 163.4" stroke="#f5843a" stroke-width="1.3" stroke-linecap="round" opacity="0.95" fill="none"/>
<path d="M80.5 114.3L81.7 111.4" stroke="#ff9a4a" stroke-width="1.9" stroke-linecap="round" opacity="0.95" fill="none"/>
<path d="M76.4 118L79.3 112.3" stroke="#f5843a" stroke-width="2.2" stroke-linecap="round" opacity="0.95" fill="none"/>
<path d="M129.2 130.4L134.9 133.6" stroke="#e8742e" stroke-width="2.3" stroke-linecap="round" opacity="0.95" fill="none"/>
<path d="M149.8 115.9L151 113.5" stroke="#f5843a" stroke-width="1.9" stroke-linecap="round" opacity="0.95" fill="none"/>
<path d="M48.3 165.2L49.3 162.5" stroke="#f5843a" stroke-width="1.3" stroke-linecap="round" opacity="0.95" fill="none"/>
<path d="M109.7 108.1L111.9 108.8" stroke="#e8742e" stroke-width="2.1" stroke-linecap="round" opacity="0.95" fill="none"/>
<path d="M119.3 116.5L121 112.2" stroke="#e8742e" stroke-width="1.2" stroke-linecap="round" opacity="0.95" fill="none"/>
<path d="M129.2 104.4L130.5 101.7" stroke="#e8742e" stroke-width="2.3" stroke-linecap="round" opacity="0.95" fill="none"/>
<path d="M123.4 197.6L127.2 198.8" stroke="#ff9a4a" stroke-width="1.5" stroke-linecap="round" opacity="0.95" fill="none"/>
<path d="M80.5 114.5L83 109.6" stroke="#f5843a" stroke-width="2.3" stroke-linecap="round" opacity="0.95" fill="none"/>
<path d="M8.6 199.9L10.1 196.9" stroke="#f5843a" stroke-width="1.5" stroke-linecap="round" opacity="0.95" fill="none"/>
<path d="M194.2 176.9L195.3 174.2" stroke="#e8742e" stroke-width="2.2" stroke-linecap="round" opacity="0.95" fill="none"/>
<path d="M23.7 184.2L26.2 177.8" stroke="#e8742e" stroke-width="2.2" stroke-linecap="round" opacity="0.95" fill="none"/>
<path d="M142.1 165L146.8 166.4" stroke="#e8742e" stroke-width="2.3" stroke-linecap="round" opacity="0.95" fill="none"/>
<path d="M176.2 209.9L181.3 211.4" stroke="#e8742e" stroke-width="1.4" stroke-linecap="round" opacity="0.95" fill="none"/>
<path d="M18.9 154.6L24.2 157.2" stroke="#ff9a4a" stroke-width="1.7" stroke-linecap="round" opacity="0.95" fill="none"/>
<path d="M67.8 130.8L72.2 133.2" stroke="#ff9a4a" stroke-width="1.5" stroke-linecap="round" opacity="0.95" fill="none"/>
<path d="M207.2 194.3L208.7 191.3" stroke="#ff9a4a" stroke-width="1.8" stroke-linecap="round" opacity="0.95" fill="none"/>
<path d="M178.3 120.9L181.2 121.8" stroke="#ff9a4a" stroke-width="1.9" stroke-linecap="round" opacity="0.95" fill="none"/>
<path d="M0.2 100.1L1.1 98.3" stroke="#e8742e" stroke-width="2" stroke-linecap="round" opacity="0.95" fill="none"/>
<path d="M133.9 209.1L136 210.2" stroke="#f5843a" stroke-width="2.2" stroke-linecap="round" opacity="0.95" fill="none"/>
<path d="M179.9 179.5L182.3 173.3" stroke="#ff9a4a" stroke-width="1.5" stroke-linecap="round" opacity="0.95" fill="none"/>
<path d="M65.7 143.7L67.7 138.4" stroke="#ff9a4a" stroke-width="1.8" stroke-linecap="round" opacity="0.95" fill="none"/>
<path d="M164.4 116.7L170.4 120" stroke="#ff9a4a" stroke-width="1.4" stroke-linecap="round" opacity="0.95" fill="none"/>
<path d="M7.4 117.8L11 119.8" stroke="#f5843a" stroke-width="1.9" stroke-linecap="round" opacity="0.95" fill="none"/>
<path d="M141.6 163L147.8 165.9" stroke="#f5843a" stroke-width="1.6" stroke-linecap="round" opacity="0.95" fill="none"/>
<path d="M142 115.3L143.5 112.4" stroke="#e8742e" stroke-width="1.9" stroke-linecap="round" opacity="0.95" fill="none"/>
<path d="M12 203.5L13.9 198.6" stroke="#f5843a" stroke-width="1.5" stroke-linecap="round" opacity="0.95" fill="none"/>
<path d="M179.1 164.5L180.3 162" stroke="#ff9a4a" stroke-width="1.4" stroke-linecap="round" opacity="0.95" fill="none"/>
<path d="M180.7 177.1L183.7 171.2" stroke="#ff9a4a" stroke-width="2" stroke-linecap="round" opacity="0.95" fill="none"/>
<path d="M89.5 140.9L94 143.3" stroke="#ff9a4a" stroke-width="2.2" stroke-linecap="round" opacity="0.95" fill="none"/>
<path d="M68.6 159.4L70.5 155.6" stroke="#e8742e" stroke-width="2" stroke-linecap="round" opacity="0.95" fill="none"/>
<path d="M92.7 123.3L95 117.4" stroke="#ff9a4a" stroke-width="1.9" stroke-linecap="round" opacity="0.95" fill="none"/>
<path d="M55.9 117.2L58 113.1" stroke="#ff9a4a" stroke-width="1.9" stroke-linecap="round" opacity="0.95" fill="none"/>
<path d="M201.4 110.7L206.5 113.1" stroke="#ff9a4a" stroke-width="1.7" stroke-linecap="round" opacity="0.95" fill="none"/>
<path d="M58.7 146.2L61.2 139.9" stroke="#ff9a4a" stroke-width="2.3" stroke-linecap="round" opacity="0.95" fill="none"/>
<path d="M75 152.8L81.3 155.8" stroke="#ff9a4a" stroke-width="2" stroke-linecap="round" opacity="0.95" fill="none"/>
<path d="M142.4 108.7L144.8 110.1" stroke="#f5843a" stroke-width="1.9" stroke-linecap="round" opacity="0.95" fill="none"/>
<path d="M160.4 166.2L162.3 162.5" stroke="#e8742e" stroke-width="1.6" stroke-linecap="round" opacity="0.95" fill="none"/>
<path d="M44.8 197.7L46.6 198.7" stroke="#f5843a" stroke-width="1.8" stroke-linecap="round" opacity="0.95" fill="none"/>
<path d="M23.8 117.9L29.6 120.6" stroke="#f5843a" stroke-width="1.9" stroke-linecap="round" opacity="0.95" fill="none"/>
<path d="M93.6 123.5L98.2 125.7" stroke="#f5843a" stroke-width="1.5" stroke-linecap="round" opacity="0.95" fill="none"/>
<path d="M30.2 136.9L35.5 139.4" stroke="#ff9a4a" stroke-width="1.9" stroke-linecap="round" opacity="0.95" fill="none"/>
<path d="M84.3 136.6L90.1 139.7" stroke="#ff9a4a" stroke-width="2.2" stroke-linecap="round" opacity="0.95" fill="none"/>
<path d="M103.9 119.6L105.2 116.3" stroke="#ff9a4a" stroke-width="1.5" stroke-linecap="round" opacity="0.95" fill="none"/>
<path d="M88 205.4L89 202.8" stroke="#e8742e" stroke-width="1.9" stroke-linecap="round" opacity="0.95" fill="none"/>
<path d="M87.5 106.7L93.5 109.5" stroke="#f5843a" stroke-width="2.2" stroke-linecap="round" opacity="0.95" fill="none"/>
<path d="M114.7 115.4L117.8 109.4" stroke="#ff9a4a" stroke-width="1.5" stroke-linecap="round" opacity="0.95" fill="none"/>
<path d="M183.7 156.9L185.9 152.4" stroke="#e8742e" stroke-width="2.1" stroke-linecap="round" opacity="0.95" fill="none"/>
<path d="M182.4 174.2L188.3 177.4" stroke="#f5843a" stroke-width="1.8" stroke-linecap="round" opacity="0.95" fill="none"/>
<path d="M48.5 156L49.7 153" stroke="#ff9a4a" stroke-width="1.8" stroke-linecap="round" opacity="0.95" fill="none"/>
<path d="M41.7 153.4L43.8 154.6" stroke="#ff9a4a" stroke-width="2.4" stroke-linecap="round" opacity="0.95" fill="none"/>
<path d="M18.9 127.3L23.2 128.6" stroke="#ff9a4a" stroke-width="1.9" stroke-linecap="round" opacity="0.95" fill="none"/>
<path d="M164.3 187.3L167.9 189.3" stroke="#e8742e" stroke-width="2" stroke-linecap="round" opacity="0.95" fill="none"/>
<path d="M164.2 200.2L165.4 197.9" stroke="#e8742e" stroke-width="1.6" stroke-linecap="round" opacity="0.95" fill="none"/>
<path d="M56.3 161.7L61.1 164.3" stroke="#e8742e" stroke-width="2.2" stroke-linecap="round" opacity="0.95" fill="none"/>
<path d="M9.4 175L13.1 176.1" stroke="#f5843a" stroke-width="1.3" stroke-linecap="round" opacity="0.95" fill="none"/>
<path d="M63.6 201.3L67.1 203" stroke="#ff9a4a" stroke-width="2" stroke-linecap="round" opacity="0.95" fill="none"/>
<path d="M132.2 158.4L133.9 154.1" stroke="#f5843a" stroke-width="1.5" stroke-linecap="round" opacity="0.95" fill="none"/>
<path d="M99.4 138.8L100.8 136.1" stroke="#e8742e" stroke-width="2.3" stroke-linecap="round" opacity="0.95" fill="none"/>
<path d="M100.7 133.6L103.6 134.5" stroke="#e8742e" stroke-width="2.2" stroke-linecap="round" opacity="0.95" fill="none"/>
<path d="M2.5 154.6L6.2 156.4" stroke="#ff9a4a" stroke-width="2.2" stroke-linecap="round" opacity="0.95" fill="none"/>
<path d="M50.9 160.9L52.4 156.9" stroke="#f5843a" stroke-width="1.6" stroke-linecap="round" opacity="0.95" fill="none"/>
<path d="M92 156.8L94.9 158.4" stroke="#ff9a4a" stroke-width="1.6" stroke-linecap="round" opacity="0.95" fill="none"/>
<path d="M26.5 163.2L31.9 165.8" stroke="#ff9a4a" stroke-width="1.4" stroke-linecap="round" opacity="0.95" fill="none"/>
<rect x="165.3" y="51.6" width="1.6" height="10.6" rx="0.8" fill="#46587a"/>
<rect x="166.9" y="52.2" width="1.1" height="10" fill="#242f47"/>
<rect x="7.1" y="51.2" width="1.7" height="11" rx="0.8" fill="#3e4f6e"/>
<rect x="8.7" y="51.8" width="0.9" height="10.4" fill="#202a40"/>
<rect x="39.1" y="54.8" width="2.1" height="7.5" rx="0.8" fill="#3e4f6e"/>
<rect x="41.2" y="55.4" width="1.6" height="6.9" fill="#202a40"/>
<rect x="31.2" y="52.3" width="1.9" height="11.1" rx="0.8" fill="#3e4f6e"/>
<rect x="33.1" y="52.9" width="1.4" height="10.5" fill="#202a40"/>
<rect x="29.7" y="62.5" width="6.2" height="2.1" rx="0.800" fill="#f5843a" opacity="0.9"/>
<rect x="-0.1" y="56.7" width="1.5" height="7.9" rx="0.8" fill="#3e4f6e"/>
<rect x="1.4" y="57.3" width="1.7" height="7.3" fill="#202a40"/>
<rect x="15.9" y="56.8" width="2.4" height="8.8" rx="0.8" fill="#3e4f6e"/>
<rect x="18.3" y="57.4" width="1.9" height="8.2" fill="#202a40"/>
<rect x="14.4" y="64.7" width="7.2" height="1.6" rx="0.800" fill="#f5843a" opacity="0.9"/>
<rect x="171.3" y="55.6" width="1.8" height="10.6" rx="0.8" fill="#71839f"/>
<rect x="173.1" y="56.2" width="1.7" height="10" fill="#3d4e6c"/>
<rect x="28.7" y="57.1" width="2.2" height="10.3" rx="0.8" fill="#3e4f6e"/>
<rect x="31" y="57.7" width="2" height="9.7" fill="#202a40"/>
<rect x="28.7" y="61.7" width="2.8" height="7.5" rx="0.8" fill="#2a3650"/>
<rect x="31.4" y="62.3" width="2" height="6.9" fill="#171e2e"/>
<rect x="37.1" y="58.2" width="2.4" height="11.1" rx="0.8" fill="#50637f"/>
<rect x="39.6" y="58.8" width="1.2" height="10.5" fill="#2a3650"/>
<rect x="20.1" y="58.5" width="2.6" height="11.1" rx="0.8" fill="#50637f"/>
<rect x="22.6" y="59.1" width="2.2" height="10.5" fill="#2a3650"/>
<rect x="20.6" y="65.7" width="0.700" height="0.700" fill="#e8b24a"/>
<rect x="37.1" y="59.5" width="2.4" height="10.3" rx="0.8" fill="#50637f"/>
<rect x="39.5" y="60.1" width="1.6" height="9.7" fill="#2a3650"/>
<rect x="164.4" y="62.1" width="2.1" height="8.3" rx="0.8" fill="#46587a"/>
<rect x="166.5" y="62.7" width="1.9" height="7.7" fill="#242f47"/>
<rect x="160.8" y="64.4" width="2.8" height="6.3" rx="0.8" fill="#2f3c55"/>
<rect x="163.6" y="65" width="1.5" height="5.7" fill="#1a2233"/>
<rect x="159.3" y="69.7" width="7.3" height="1.5" rx="0.800" fill="#f5843a" opacity="0.9"/>
<rect x="119.5" y="59.3" width="1.7" height="11.5" rx="0.8" fill="#50637f"/>
<rect x="121.2" y="59.9" width="1.2" height="10.9" fill="#2a3650"/>
<rect x="118" y="69.7" width="6" height="1.8" rx="0.800" fill="#f5843a" opacity="0.9"/>
<rect x="151.8" y="59.7" width="2.5" height="11.6" rx="0.8" fill="#46587a"/>
<rect x="154.4" y="60.3" width="1.3" height="11" fill="#242f47"/>
<rect x="24.3" y="66.3" width="2" height="7.8" rx="0.8" fill="#3e4f6e"/>
<rect x="26.3" y="66.9" width="1.9" height="7.2" fill="#202a40"/>
<rect x="22.8" y="73.1" width="6.9" height="1.9" rx="0.800" fill="#f5843a" opacity="0.9"/>
<rect x="34.8" y="63.5" width="1.7" height="11.1" rx="0.8" fill="#8090a8"/>
<rect x="36.5" y="64.1" width="1.9" height="10.5" fill="#46587a"/>
<rect x="164.4" y="62.9" width="3" height="12.2" rx="0.8" fill="#3e4f6e"/>
<rect x="167.4" y="63.5" width="2" height="11.6" fill="#202a40"/>
<rect x="167.7" y="68.6" width="0.700" height="0.700" fill="#f0c060"/>
<rect x="162.9" y="74.1" width="8" height="1.2" rx="0.800" fill="#f5843a" opacity="0.9"/>
<rect x="39.2" y="64" width="2.3" height="11.8" rx="0.8" fill="#3e4f6e"/>
<rect x="41.5" y="64.6" width="2.3" height="11.2" fill="#202a40"/>
<rect x="42.6" y="71.6" width="0.700" height="0.700" fill="#f0c060"/>
<rect x="37.7" y="74.8" width="7.6" height="1.6" rx="0.800" fill="#f5843a" opacity="0.9"/>
<rect x="13.6" y="67.1" width="2" height="8.7" rx="0.8" fill="#71839f"/>
<rect x="15.6" y="67.7" width="1.6" height="8.1" fill="#3d4e6c"/>
<rect x="4.9" y="68.1" width="2.1" height="8" rx="0.8" fill="#71839f"/>
<rect x="6.9" y="68.7" width="1.2" height="7.4" fill="#3d4e6c"/>
<rect x="14" y="69.8" width="1.9" height="7" rx="0.8" fill="#3e4f6e"/>
<rect x="15.9" y="70.4" width="1.9" height="6.4" fill="#202a40"/>
<rect x="21.7" y="70.5" width="1.9" height="7.2" rx="0.8" fill="#50637f"/>
<rect x="23.6" y="71.1" width="2.3" height="6.6" fill="#2a3650"/>
<rect x="182.3" y="72.8" width="2.5" height="6" rx="0.8" fill="#2a3650"/>
<rect x="184.8" y="73.4" width="1.2" height="5.4" fill="#171e2e"/>
<rect x="2.3" y="66.7" width="2" height="12.2" rx="0.8" fill="#2a3650"/>
<rect x="4.4" y="67.3" width="1.9" height="11.6" fill="#171e2e"/>
<rect x="4.4" y="75.6" width="0.700" height="0.700" fill="#f0c060"/>
<rect x="11.6" y="68.2" width="2.6" height="11" rx="0.8" fill="#3e4f6e"/>
<rect x="14.2" y="68.8" width="1.5" height="10.4" fill="#202a40"/>
<rect x="10.1" y="78.1" width="7" height="1.7" rx="0.800" fill="#f5843a" opacity="0.9"/>
<rect x="0.4" y="73.3" width="2.8" height="6.1" rx="0.8" fill="#8090a8"/>
<rect x="3.1" y="73.9" width="1.4" height="5.5" fill="#46587a"/>
<rect x="41.9" y="73.8" width="2.1" height="6.2" rx="0.8" fill="#3e4f6e"/>
<rect x="44" y="74.4" width="1.2" height="5.6" fill="#202a40"/>
<rect x="12" y="70.6" width="2.4" height="10.6" rx="0.8" fill="#8090a8"/>
<rect x="14.5" y="71.2" width="2.5" height="10" fill="#46587a"/>
<rect x="14.4" y="75.7" width="0.700" height="0.700" fill="#e8b24a"/>
<rect x="10.5" y="80.2" width="8" height="1.3" rx="0.800" fill="#f5843a" opacity="0.9"/>
<rect x="11.6" y="75.3" width="1.9" height="8.4" rx="0.8" fill="#3e4f6e"/>
<rect x="13.6" y="75.9" width="2.2" height="7.8" fill="#202a40"/>
<rect x="41.3" y="75.7" width="2.4" height="8.1" rx="0.8" fill="#71839f"/>
<rect x="43.8" y="76.3" width="2.2" height="7.5" fill="#3d4e6c"/>
<rect x="39.8" y="82.7" width="7.6" height="1.8" rx="0.800" fill="#f5843a" opacity="0.9"/>
<rect x="27.5" y="75.7" width="2.4" height="11.3" rx="0.8" fill="#46587a"/>
<rect x="29.8" y="76.3" width="2.5" height="10.7" fill="#242f47"/>
<rect x="30.8" y="82.5" width="0.700" height="0.700" fill="#f0c060"/>
<rect x="57.1" y="78" width="2.7" height="11.3" rx="0.8" fill="#3e4f6e"/>
<rect x="59.9" y="78.6" width="1.9" height="10.7" fill="#202a40"/>
<rect x="58.6" y="85.3" width="0.700" height="0.700" fill="#d99a3c"/>
<rect x="8.7" y="79.3" width="2.1" height="10.8" rx="0.8" fill="#50637f"/>
<rect x="10.7" y="79.9" width="1.7" height="10.2" fill="#2a3650"/>
<rect x="7.2" y="89.1" width="6.8" height="1.2" rx="0.800" fill="#f5843a" opacity="0.9"/>
<rect x="30.2" y="78.5" width="2.2" height="11.8" rx="0.8" fill="#2f3c55"/>
<rect x="32.4" y="79.1" width="1.2" height="11.2" fill="#1a2233"/>
<rect x="32.5" y="78.6" width="2.2" height="11.7" rx="0.8" fill="#2a3650"/>
<rect x="34.7" y="79.2" width="2.5" height="11.1" fill="#171e2e"/>
<rect x="36.2" y="81" width="0.700" height="0.700" fill="#e8b24a"/>
<rect x="35.8" y="81.8" width="1.9" height="11" rx="0.8" fill="#2a3650"/>
<rect x="37.7" y="82.4" width="1.6" height="10.4" fill="#171e2e"/>
<rect x="-2.9" y="85.9" width="2.6" height="7.2" rx="0.8" fill="#3e4f6e"/>
<rect x="-0.2" y="86.5" width="1.9" height="6.6" fill="#202a40"/>
<rect x="-2.6" y="79.7" width="2.2" height="13.4" rx="0.8" fill="#35445f"/>
<rect x="-0.4" y="80.3" width="1.2" height="12.8" fill="#1e273a"/>
<rect x="-1.4" y="86.9" width="0.700" height="0.700" fill="#d99a3c"/>
<rect x="15.6" y="79" width="2.2" height="14.3" rx="0.8" fill="#50637f"/>
<rect x="17.7" y="79.6" width="2.2" height="13.7" fill="#2a3650"/>
<rect x="16.8" y="89.1" width="0.700" height="0.700" fill="#d99a3c"/>
<rect x="35.5" y="80.5" width="2.5" height="13.7" rx="0.8" fill="#50637f"/>
<rect x="38" y="81.1" width="2" height="13.1" fill="#2a3650"/>
<rect x="36.7" y="91" width="0.700" height="0.700" fill="#e8b24a"/>
<rect x="47.2" y="82.7" width="3.8" height="12.9" rx="0.8" fill="#2a3650"/>
<rect x="51" y="83.3" width="2.3" height="12.3" fill="#171e2e"/>
<rect x="50.9" y="89.1" width="0.700" height="0.700" fill="#f0c060"/>
<rect x="82.7" y="84.9" width="2.4" height="10.7" rx="0.8" fill="#46587a"/>
<rect x="85.1" y="85.5" width="1.2" height="10.1" fill="#242f47"/>
<rect x="41.8" y="90.2" width="2" height="7.2" rx="0.8" fill="#3e4f6e"/>
<rect x="43.7" y="90.8" width="1.9" height="6.6" fill="#202a40"/>
<rect x="40.3" y="96.5" width="6.9" height="1.6" rx="0.800" fill="#f5843a" opacity="0.9"/>
<rect x="15.6" y="90.5" width="3.3" height="8.3" rx="0.8" fill="#46587a"/>
<rect x="18.9" y="91.1" width="2.4" height="7.7" fill="#242f47"/>
<rect x="19.2" y="93" width="0.700" height="0.700" fill="#d99a3c"/>
<rect x="14.1" y="97.8" width="8.6" height="2.1" rx="0.800" fill="#f5843a" opacity="0.9"/>
<rect x="148.6" y="87.7" width="2.1" height="11.2" rx="0.8" fill="#3e4f6e"/>
<rect x="150.7" y="88.3" width="1.8" height="10.6" fill="#202a40"/>
<rect x="11.7" y="89" width="3.1" height="10" rx="0.8" fill="#3e4f6e"/>
<rect x="14.7" y="89.6" width="1.9" height="9.4" fill="#202a40"/>
<rect x="14.7" y="97.2" width="0.700" height="0.700" fill="#e8b24a"/>
<rect x="93.3" y="86.9" width="2.6" height="12.3" rx="0.8" fill="#3e4f6e"/>
<rect x="95.9" y="87.5" width="2.7" height="11.7" fill="#202a40"/>
<rect x="95.5" y="90.1" width="0.700" height="0.700" fill="#e8b24a"/>
<rect x="95.6" y="90.6" width="3.3" height="10.2" rx="0.8" fill="#2a3650"/>
<rect x="98.9" y="91.2" width="1.5" height="9.6" fill="#171e2e"/>
<rect x="99.2" y="97" width="0.700" height="0.700" fill="#e8b24a"/>
<rect x="201.7" y="89.8" width="2.9" height="11.1" rx="0.8" fill="#2a3650"/>
<rect x="204.6" y="90.4" width="2" height="10.5" fill="#171e2e"/>
<rect x="203.8" y="96.3" width="0.700" height="0.700" fill="#e8b24a"/>
<rect x="200.2" y="99.9" width="7.9" height="1.7" rx="0.800" fill="#f5843a" opacity="0.9"/>
<rect x="16.1" y="86.2" width="3.1" height="15.8" rx="0.8" fill="#8090a8"/>
<rect x="19.3" y="86.8" width="3.2" height="15.2" fill="#46587a"/>
<rect x="17.5" y="100.2" width="0.700" height="0.700" fill="#e8b24a"/>
<rect x="18.6" y="92.1" width="0.700" height="0.700" fill="#d99a3c"/>
<rect x="14.6" y="101" width="9.3" height="2.1" rx="0.800" fill="#f5843a" opacity="0.9"/>
<rect x="10.5" y="86.9" width="2.9" height="15.9" rx="0.8" fill="#71839f"/>
<rect x="13.4" y="87.5" width="3.1" height="15.3" fill="#3d4e6c"/>
<rect x="15.2" y="90.6" width="0.700" height="0.700" fill="#f0c060"/>
<rect x="14.4" y="96.7" width="0.700" height="0.700" fill="#f0c060"/>
<rect x="5.2" y="93.1" width="2.2" height="9.9" rx="0.8" fill="#35445f"/>
<rect x="7.4" y="93.7" width="2.3" height="9.3" fill="#1e273a"/>
<rect x="127.2" y="90" width="2.6" height="13.3" rx="0.8" fill="#46587a"/>
<rect x="129.8" y="90.6" width="1.2" height="12.7" fill="#242f47"/>
<rect x="129.4" y="91.7" width="0.700" height="0.700" fill="#d99a3c"/>
<rect x="120.9" y="94.1" width="2.7" height="9.5" rx="0.8" fill="#2f3c55"/>
<rect x="123.6" y="94.7" width="1.2" height="8.9" fill="#1a2233"/>
<rect x="0.3" y="92.1" width="1.9" height="11.8" rx="0.8" fill="#3e4f6e"/>
<rect x="2.2" y="92.7" width="2.3" height="11.2" fill="#202a40"/>
<rect x="2.3" y="94.9" width="0.700" height="0.700" fill="#d99a3c"/>
<rect x="15.8" y="94.9" width="2.9" height="9.7" rx="0.8" fill="#46587a"/>
<rect x="18.6" y="95.5" width="1.3" height="9.1" fill="#242f47"/>
<rect x="28.4" y="94.4" width="2.4" height="11.4" rx="0.8" fill="#50637f"/>
<rect x="30.8" y="95" width="2" height="10.8" fill="#2a3650"/>
<rect x="29.4" y="101.6" width="0.700" height="0.700" fill="#d99a3c"/>
<rect x="18.4" y="94.8" width="4.1" height="11.8" rx="0.8" fill="#3e4f6e"/>
<rect x="22.5" y="95.4" width="1.8" height="11.2" fill="#202a40"/>
<rect x="21.2" y="102.5" width="0.700" height="0.700" fill="#f0c060"/>
<rect x="49.1" y="95.2" width="4.2" height="13.6" rx="0.8" fill="#2a3650"/>
<rect x="53.2" y="95.8" width="1.9" height="13" fill="#171e2e"/>
<rect x="51.6" y="107.3" width="0.700" height="0.700" fill="#d99a3c"/>
<rect x="18.5" y="95.9" width="2.6" height="13.3" rx="0.8" fill="#8090a8"/>
<rect x="21.1" y="96.5" width="1.3" height="12.7" fill="#46587a"/>
<rect x="21" y="99.4" width="0.700" height="0.700" fill="#f0c060"/>
<rect x="17" y="108.2" width="6.9" height="1.8" rx="0.800" fill="#f5843a" opacity="0.9"/>
<rect x="23.6" y="93.9" width="2.6" height="15.4" rx="0.8" fill="#71839f"/>
<rect x="26.2" y="94.5" width="2.9" height="14.8" fill="#3d4e6c"/>
<rect x="25.4" y="99.6" width="0.700" height="0.700" fill="#e8b24a"/>
<rect x="22.1" y="108.3" width="8.6" height="1.5" rx="0.800" fill="#f5843a" opacity="0.9"/>
<rect x="4.2" y="103.1" width="2.4" height="7.7" rx="0.8" fill="#50637f"/>
<rect x="6.5" y="103.7" width="2.7" height="7.1" fill="#2a3650"/>
<rect x="2.7" y="109.8" width="8" height="2.3" rx="0.800" fill="#f5843a" opacity="0.9"/>
<rect x="118.2" y="97.8" width="3.2" height="13.3" rx="0.8" fill="#46587a"/>
<rect x="121.4" y="98.4" width="2.6" height="12.7" fill="#242f47"/>
<rect x="121.4" y="103" width="0.700" height="0.700" fill="#e8b24a"/>
<rect x="116.7" y="110.1" width="8.8" height="2.1" rx="0.800" fill="#f5843a" opacity="0.9"/>
<rect x="30.8" y="98.7" width="2.4" height="13.9" rx="0.8" fill="#71839f"/>
<rect x="33.2" y="99.3" width="1.7" height="13.3" fill="#3d4e6c"/>
<rect x="32.6" y="108.1" width="0.700" height="0.700" fill="#d99a3c"/>
<rect x="140.4" y="104.8" width="2.6" height="8.6" rx="0.8" fill="#46587a"/>
<rect x="143" y="105.4" width="1.6" height="8" fill="#242f47"/>
<rect x="138.9" y="112.4" width="7.2" height="2.2" rx="0.800" fill="#f5843a" opacity="0.9"/>
<rect x="13.6" y="104" width="2.7" height="10.1" rx="0.8" fill="#2a3650"/>
<rect x="16.3" y="104.6" width="2.2" height="9.5" fill="#171e2e"/>
<rect x="15.4" y="106.5" width="0.700" height="0.700" fill="#f0c060"/>
<rect x="96.7" y="105.9" width="2.7" height="8.6" rx="0.8" fill="#35445f"/>
<rect x="99.3" y="106.5" width="2" height="8" fill="#1e273a"/>
<rect x="95.2" y="113.5" width="7.6" height="1.2" rx="0.800" fill="#f5843a" opacity="0.9"/>
<rect x="55.5" y="99.7" width="3.1" height="15.4" rx="0.8" fill="#2f3c55"/>
<rect x="58.6" y="100.3" width="3.4" height="14.8" fill="#1a2233"/>
<rect x="57.5" y="110.4" width="0.700" height="0.700" fill="#e8b24a"/>
<rect x="60.2" y="105.9" width="0.700" height="0.700" fill="#d99a3c"/>
<rect x="54" y="114.1" width="9.5" height="1.4" rx="0.800" fill="#f5843a" opacity="0.9"/>
<rect x="208.2" y="107" width="2.3" height="8.1" rx="0.8" fill="#3e4f6e"/>
<rect x="210.5" y="107.6" width="2.7" height="7.5" fill="#202a40"/>
<rect x="208.3" y="104.8" width="2.7" height="10.6" rx="0.8" fill="#8090a8"/>
<rect x="211.1" y="105.4" width="2.5" height="10" fill="#46587a"/>
<rect x="211.2" y="110.4" width="0.700" height="0.700" fill="#d99a3c"/>
<rect x="31.4" y="106.4" width="3.5" height="9" rx="0.8" fill="#2a3650"/>
<rect x="34.9" y="107" width="1.7" height="8.4" fill="#171e2e"/>
<rect x="35.6" y="114.2" width="0.700" height="0.700" fill="#f0c060"/>
<rect x="46.1" y="100.6" width="2.9" height="14.9" rx="0.8" fill="#46587a"/>
<rect x="49" y="101.2" width="3" height="14.3" fill="#242f47"/>
<rect x="48.1" y="103.2" width="0.700" height="0.700" fill="#f0c060"/>
<rect x="44.6" y="114.6" width="9" height="2.1" rx="0.800" fill="#f5843a" opacity="0.9"/>
<rect x="67.3" y="101.4" width="2.6" height="14.4" rx="0.8" fill="#35445f"/>
<rect x="69.8" y="102" width="1.6" height="13.8" fill="#1e273a"/>
<rect x="69.5" y="103.8" width="0.700" height="0.700" fill="#d99a3c"/>
<path d="M160 108L166 112" stroke="#b35a2a" stroke-width="4.5" stroke-linecap="round" opacity="0.5" fill="none"/>
<path d="M160 108L166 112" stroke="#f5843a" stroke-width="2" stroke-linecap="round" opacity="1" fill="none"/>
<rect x="78.5" y="108.1" width="3.8" height="8" rx="0.8" fill="#35445f"/>
<rect x="82.3" y="108.7" width="2.6" height="7.4" fill="#1e273a"/>
<rect x="82.4" y="113.6" width="0.700" height="0.700" fill="#e8b24a"/>
<rect x="77" y="115.2" width="9.4" height="1.6" rx="0.800" fill="#f5843a" opacity="0.9"/>
<rect x="1" y="104.4" width="2.7" height="12.2" rx="0.8" fill="#2a3650"/>
<rect x="3.8" y="105" width="1.5" height="11.6" fill="#171e2e"/>
<rect x="1.9" y="109.9" width="0.700" height="0.700" fill="#e8b24a"/>
<rect x="107.9" y="106.1" width="2.6" height="11" rx="0.8" fill="#50637f"/>
<rect x="110.5" y="106.7" width="2.6" height="10.4" fill="#2a3650"/>
<rect x="110.9" y="111.7" width="0.700" height="0.700" fill="#f0c060"/>
<rect x="106.4" y="116.1" width="8.2" height="1.5" rx="0.800" fill="#f5843a" opacity="0.9"/>
<rect x="-3.7" y="104.6" width="3.1" height="12.7" rx="0.8" fill="#2a3650"/>
<rect x="-0.6" y="105.2" width="1.8" height="12.1" fill="#171e2e"/>
<rect x="-3.1" y="106.5" width="0.700" height="0.700" fill="#d99a3c"/>
<rect x="177" y="103.4" width="3.5" height="14.1" rx="0.8" fill="#50637f"/>
<rect x="180.5" y="104" width="2.4" height="13.5" fill="#2a3650"/>
<rect x="181.4" y="109.3" width="0.700" height="0.700" fill="#f0c060"/>
<rect x="35.1" y="100.2" width="2.6" height="17.6" rx="0.8" fill="#2f3c55"/>
<rect x="37.7" y="100.8" width="1.5" height="17" fill="#1a2233"/>
<rect x="36.6" y="105.5" width="0.700" height="0.700" fill="#e8b24a"/>
<rect x="87.8" y="104.3" width="4.4" height="13.5" rx="0.8" fill="#35445f"/>
<rect x="92.2" y="104.9" width="2.2" height="12.9" fill="#1e273a"/>
<rect x="91.1" y="106" width="0.700" height="0.700" fill="#d99a3c"/>
<rect x="88.8" y="116.5" width="0.700" height="0.700" fill="#e8b24a"/>
<rect x="132.1" y="100.9" width="2.8" height="17" rx="0.8" fill="#2a3650"/>
<rect x="134.9" y="101.5" width="1.5" height="16.4" fill="#171e2e"/>
<rect x="132.7" y="110.6" width="0.700" height="0.700" fill="#f0c060"/>
<rect x="123.8" y="109.7" width="3" height="8.9" rx="0.8" fill="#2f3c55"/>
<rect x="126.8" y="110.3" width="3.6" height="8.3" fill="#1a2233"/>
<rect x="127.8" y="116.5" width="0.700" height="0.700" fill="#f0c060"/>
<rect x="12.1" y="106" width="3.5" height="12.6" rx="0.8" fill="#35445f"/>
<rect x="15.6" y="106.6" width="1.8" height="12" fill="#1e273a"/>
<rect x="15.8" y="110.2" width="0.700" height="0.700" fill="#f0c060"/>
<rect x="54.2" y="105" width="4.4" height="14" rx="0.8" fill="#2f3c55"/>
<rect x="58.5" y="105.6" width="2.9" height="13.4" fill="#1a2233"/>
<rect x="56.4" y="117.1" width="0.700" height="0.700" fill="#d99a3c"/>
<rect x="55.8" y="111.2" width="0.700" height="0.700" fill="#e8b24a"/>
<rect x="52.7" y="118.1" width="10.2" height="2" rx="0.800" fill="#f5843a" opacity="0.9"/>
<rect x="101.1" y="108.5" width="3.9" height="11.1" rx="0.8" fill="#2f3c55"/>
<rect x="105" y="109.1" width="2.7" height="10.5" fill="#1a2233"/>
<rect x="104.2" y="116.5" width="0.700" height="0.700" fill="#f0c060"/>
<rect x="117.1" y="105.1" width="3.2" height="14.6" rx="0.8" fill="#50637f"/>
<rect x="120.2" y="105.7" width="1.7" height="14" fill="#2a3650"/>
<rect x="119.7" y="112.2" width="0.700" height="0.700" fill="#f0c060"/>
<rect x="120.2" y="102.9" width="3.3" height="16.8" rx="0.8" fill="#46587a"/>
<rect x="123.5" y="103.5" width="1.6" height="16.2" fill="#242f47"/>
<rect x="123.4" y="115.5" width="0.700" height="0.700" fill="#d99a3c"/>
<rect x="161.3" y="101.9" width="3.2" height="17.9" rx="0.8" fill="#8090a8"/>
<rect x="164.5" y="102.5" width="2.4" height="17.3" fill="#46587a"/>
<rect x="165.5" y="115" width="0.700" height="0.700" fill="#f0c060"/>
<rect x="164.1" y="113.5" width="0.700" height="0.700" fill="#e8b24a"/>
<rect x="159.8" y="118.8" width="8.5" height="1.6" rx="0.800" fill="#f5843a" opacity="0.9"/>
<rect x="32.1" y="111.7" width="2.7" height="8.3" rx="0.8" fill="#46587a"/>
<rect x="34.8" y="112.3" width="1.7" height="7.7" fill="#242f47"/>
<rect x="208" y="111.8" width="2.7" height="8.4" rx="0.8" fill="#2f3c55"/>
<rect x="210.7" y="112.4" width="2.4" height="7.8" fill="#1a2233"/>
<rect x="9.1" y="109.7" width="3.5" height="10.8" rx="0.8" fill="#8090a8"/>
<rect x="12.6" y="110.3" width="2.8" height="10.2" fill="#46587a"/>
<rect x="10.2" y="114.8" width="0.700" height="0.700" fill="#e8b24a"/>
<rect x="176.8" y="110.1" width="3.2" height="10.6" rx="0.8" fill="#46587a"/>
<rect x="180.1" y="110.7" width="3.6" height="10" fill="#242f47"/>
<rect x="180.1" y="111.8" width="0.700" height="0.700" fill="#f0c060"/>
<rect x="79.5" y="112.4" width="4.2" height="8.5" rx="0.8" fill="#46587a"/>
<rect x="83.7" y="113" width="2.3" height="7.9" fill="#242f47"/>
<rect x="85" y="119.1" width="0.700" height="0.700" fill="#e8b24a"/>
<rect x="178.1" y="110.1" width="2.4" height="11.8" rx="0.8" fill="#2f3c55"/>
<rect x="180.6" y="110.7" width="2.3" height="11.2" fill="#1a2233"/>
<rect x="179.4" y="120.9" width="0.700" height="0.700" fill="#f0c060"/>
<rect x="69.6" y="107.3" width="3.2" height="15.4" rx="0.8" fill="#8090a8"/>
<rect x="72.8" y="107.9" width="1.5" height="14.8" fill="#46587a"/>
<rect x="72.3" y="115.3" width="0.700" height="0.700" fill="#e8b24a"/>
<rect x="118.8" y="109" width="3" height="13.9" rx="0.8" fill="#2a3650"/>
<rect x="121.7" y="109.6" width="2.9" height="13.3" fill="#171e2e"/>
<rect x="122.7" y="111.8" width="0.700" height="0.700" fill="#e8b24a"/>
<rect x="117.3" y="122" width="8.9" height="2.3" rx="0.800" fill="#f5843a" opacity="0.9"/>
<path d="M23 119L60 112" stroke="#b35a2a" stroke-width="4.9" stroke-linecap="round" opacity="0.5" fill="none"/>
<path d="M23 119L60 112" stroke="#f5843a" stroke-width="2.4" stroke-linecap="round" opacity="1" fill="none"/>
<rect x="135" y="109" width="2.7" height="15.2" rx="0.8" fill="#50637f"/>
<rect x="137.7" y="109.6" width="2.6" height="14.6" fill="#2a3650"/>
<rect x="139" y="116.9" width="0.700" height="0.700" fill="#e8b24a"/>
<rect x="140.4" y="115.4" width="4.3" height="8.9" rx="0.8" fill="#2a3650"/>
<rect x="144.7" y="116" width="1.9" height="8.3" fill="#171e2e"/>
<rect x="142.9" y="118.8" width="0.700" height="0.700" fill="#d99a3c"/>
<rect x="138.9" y="123.3" width="9.2" height="1.7" rx="0.800" fill="#f5843a" opacity="0.9"/>
<rect x="189.8" y="113.6" width="2.7" height="10.8" rx="0.8" fill="#35445f"/>
<rect x="192.5" y="114.2" width="1.7" height="10.2" fill="#1e273a"/>
<rect x="191.3" y="117" width="0.700" height="0.700" fill="#e8b24a"/>
<rect x="44.4" y="112.9" width="3.6" height="11.7" rx="0.8" fill="#3e4f6e"/>
<rect x="48" y="113.5" width="3.4" height="11.1" fill="#202a40"/>
<rect x="49.5" y="123.4" width="0.700" height="0.700" fill="#f0c060"/>
<rect x="39.5" y="113.2" width="4.5" height="11.6" rx="0.8" fill="#3e4f6e"/>
<rect x="44.1" y="113.8" width="2.5" height="11" fill="#202a40"/>
<rect x="40.1" y="117.3" width="0.700" height="0.700" fill="#d99a3c"/>
<rect x="8.1" y="111.3" width="3.5" height="13.6" rx="0.8" fill="#2a3650"/>
<rect x="11.6" y="111.9" width="3.5" height="13" fill="#171e2e"/>
<rect x="9.6" y="120.5" width="0.700" height="0.700" fill="#d99a3c"/>
<rect x="12.5" y="113.1" width="0.700" height="0.700" fill="#e8b24a"/>
<rect x="144.2" y="109.7" width="5" height="15.5" rx="0.8" fill="#46587a"/>
<rect x="149.2" y="110.3" width="2.2" height="14.9" fill="#242f47"/>
<rect x="145.3" y="119.9" width="0.700" height="0.700" fill="#f0c060"/>
<rect x="146.3" y="121.7" width="0.700" height="0.700" fill="#f0c060"/>
<path d="M185 115L188 122" stroke="#b35a2a" stroke-width="5.5" stroke-linecap="round" opacity="0.5" fill="none"/>
<path d="M185 115L188 122" stroke="#f5843a" stroke-width="3" stroke-linecap="round" opacity="1" fill="none"/>
<rect x="123.9" y="111.2" width="3" height="15" rx="0.8" fill="#2a3650"/>
<rect x="126.9" y="111.8" width="2.1" height="14.4" fill="#171e2e"/>
<rect x="126.7" y="113.4" width="0.700" height="0.700" fill="#f0c060"/>
<rect x="70.2" y="111.3" width="4.5" height="15" rx="0.8" fill="#35445f"/>
<rect x="74.7" y="111.9" width="2.9" height="14.4" fill="#1e273a"/>
<rect x="74.5" y="125.1" width="0.700" height="0.700" fill="#e8b24a"/>
<rect x="74.9" y="117.3" width="0.700" height="0.700" fill="#e8b24a"/>
<rect x="23.6" y="111.7" width="3.2" height="14.9" rx="0.8" fill="#2a3650"/>
<rect x="26.9" y="112.3" width="3.8" height="14.3" fill="#171e2e"/>
<rect x="27.4" y="125.5" width="0.700" height="0.700" fill="#d99a3c"/>
<rect x="25.5" y="125.4" width="0.700" height="0.700" fill="#e8b24a"/>
<rect x="22.1" y="125.6" width="10" height="1.5" rx="0.800" fill="#f5843a" opacity="0.9"/>
<rect x="152.7" y="117.2" width="4.3" height="10.6" rx="0.8" fill="#2f3c55"/>
<rect x="156.9" y="117.8" width="2.5" height="10" fill="#1a2233"/>
<rect x="153.9" y="119.6" width="0.700" height="0.700" fill="#e8b24a"/>
<path d="M69 107L100 124" stroke="#b35a2a" stroke-width="5.1" stroke-linecap="round" opacity="0.5" fill="none"/>
<path d="M69 107L100 124" stroke="#f5843a" stroke-width="2.6" stroke-linecap="round" opacity="1" fill="none"/>
<rect x="154.3" y="113" width="3.2" height="15.3" rx="0.8" fill="#35445f"/>
<rect x="157.5" y="113.6" width="3.1" height="14.7" fill="#1e273a"/>
<rect x="158.7" y="124.3" width="0.700" height="0.700" fill="#f0c060"/>
<rect x="157" y="125.9" width="0.700" height="0.700" fill="#e8b24a"/>
<rect x="92.7" y="115.9" width="3.2" height="12.6" rx="0.8" fill="#71839f"/>
<rect x="95.9" y="116.5" width="2.7" height="12" fill="#3d4e6c"/>
<rect x="93.8" y="120.8" width="0.700" height="0.700" fill="#d99a3c"/>
<rect x="91.2" y="127.4" width="8.9" height="1.4" rx="0.800" fill="#f5843a" opacity="0.9"/>
<rect x="169.7" y="113.8" width="4" height="14.8" rx="0.8" fill="#2a3650"/>
<rect x="173.7" y="114.4" width="1.9" height="14.2" fill="#171e2e"/>
<rect x="171.8" y="117.8" width="0.700" height="0.700" fill="#d99a3c"/>
<rect x="40.7" y="116.1" width="3.3" height="12.5" rx="0.8" fill="#35445f"/>
<rect x="44" y="116.7" width="1.9" height="11.9" fill="#1e273a"/>
<rect x="44.4" y="119.5" width="0.700" height="0.700" fill="#d99a3c"/>
<rect x="94.5" y="117.1" width="3.8" height="11.6" rx="0.8" fill="#2f3c55"/>
<rect x="98.3" y="117.7" width="2.5" height="11" fill="#1a2233"/>
<rect x="96.1" y="126.3" width="0.700" height="0.700" fill="#d99a3c"/>
<rect x="185.5" y="117.1" width="4.4" height="11.8" rx="0.8" fill="#2a3650"/>
<rect x="189.9" y="117.7" width="3.2" height="11.2" fill="#171e2e"/>
<rect x="189.5" y="125.4" width="0.700" height="0.700" fill="#d99a3c"/>
<rect x="174" y="110.2" width="4.2" height="19.1" rx="0.8" fill="#46587a"/>
<rect x="178.2" y="110.8" width="2" height="18.5" fill="#242f47"/>
<rect x="176.2" y="118.5" width="0.700" height="0.700" fill="#e8b24a"/>
<rect x="175.3" y="122.7" width="0.700" height="0.700" fill="#e8b24a"/>
<rect x="25.8" y="110.5" width="3.7" height="19.3" rx="0.8" fill="#3e4f6e"/>
<rect x="29.6" y="111.1" width="2.9" height="18.7" fill="#202a40"/>
<rect x="30.7" y="121.2" width="0.700" height="0.700" fill="#f0c060"/>
<rect x="27.2" y="122.6" width="0.700" height="0.700" fill="#d99a3c"/>
<rect x="139.9" y="113.8" width="4.2" height="16.1" rx="0.8" fill="#2f3c55"/>
<rect x="144.1" y="114.4" width="2.4" height="15.5" fill="#1a2233"/>
<rect x="141.2" y="127.1" width="0.700" height="0.700" fill="#d99a3c"/>
<rect x="142.5" y="117.8" width="0.700" height="0.700" fill="#e8b24a"/>
<rect x="182.1" y="116.1" width="3.1" height="13.9" rx="0.8" fill="#35445f"/>
<rect x="185.2" y="116.7" width="3.7" height="13.3" fill="#1e273a"/>
<rect x="182.7" y="124" width="0.700" height="0.700" fill="#d99a3c"/>
<rect x="185.2" y="128.4" width="0.700" height="0.700" fill="#e8b24a"/>
<rect x="180.6" y="129" width="9.8" height="2.4" rx="0.800" fill="#f5843a" opacity="0.9"/>
<rect x="86.7" y="113.3" width="4.4" height="16.8" rx="0.8" fill="#35445f"/>
<rect x="91.1" y="113.9" width="2.1" height="16.2" fill="#1e273a"/>
<rect x="90.9" y="122.7" width="0.700" height="0.700" fill="#d99a3c"/>
<rect x="88.6" y="122.5" width="0.700" height="0.700" fill="#d99a3c"/>
<rect x="98" y="111.5" width="2.4" height="18.6" rx="0.8" fill="#46587a"/>
<rect x="100.5" y="112.1" width="2.7" height="18" fill="#242f47"/>
<rect x="101.9" y="120.1" width="0.700" height="0.700" fill="#d99a3c"/>
<rect x="99" y="120" width="0.700" height="0.700" fill="#f0c060"/>
<rect x="96.5" y="129.1" width="8.2" height="2.1" rx="0.800" fill="#f5843a" opacity="0.9"/>
<rect x="90.5" y="118.1" width="3.6" height="12.1" rx="0.8" fill="#35445f"/>
<rect x="94.1" y="118.7" width="3" height="11.5" fill="#1e273a"/>
<rect x="92.7" y="120.7" width="0.700" height="0.700" fill="#f0c060"/>
<rect x="141" y="120.7" width="4.4" height="9.9" rx="0.8" fill="#46587a"/>
<rect x="145.4" y="121.3" width="1.9" height="9.3" fill="#242f47"/>
<rect x="142.3" y="128.2" width="0.700" height="0.700" fill="#e8b24a"/>
<rect x="142" y="118.9" width="4.6" height="12.3" rx="0.8" fill="#2f3c55"/>
<rect x="146.6" y="119.5" width="2.2" height="11.7" fill="#1a2233"/>
<rect x="145.4" y="126.7" width="0.700" height="0.700" fill="#d99a3c"/>
<rect x="194.3" y="117.6" width="4.2" height="13.8" rx="0.8" fill="#46587a"/>
<rect x="198.5" y="118.2" width="2.4" height="13.2" fill="#242f47"/>
<rect x="197.3" y="122.3" width="0.700" height="0.700" fill="#d99a3c"/>
<rect x="198.9" y="122" width="0.700" height="0.700" fill="#d99a3c"/>
<rect x="-2.8" y="116.1" width="4.4" height="15.7" rx="0.8" fill="#3e4f6e"/>
<rect x="1.6" y="116.7" width="2.1" height="15.1" fill="#202a40"/>
<rect x="0.1" y="127.3" width="0.700" height="0.700" fill="#d99a3c"/>
<rect x="-1.1" y="119.4" width="0.700" height="0.700" fill="#e8b24a"/>
<rect x="29.4" y="118.3" width="3.8" height="13.6" rx="0.8" fill="#2a3650"/>
<rect x="33.1" y="118.9" width="1.9" height="13" fill="#171e2e"/>
<rect x="33" y="120.6" width="0.700" height="0.700" fill="#e8b24a"/>
<rect x="164.4" y="116" width="4.2" height="16" rx="0.8" fill="#3e4f6e"/>
<rect x="168.7" y="116.6" width="2.1" height="15.4" fill="#202a40"/>
<rect x="169.3" y="123.5" width="0.700" height="0.700" fill="#d99a3c"/>
<rect x="168.9" y="124.3" width="0.700" height="0.700" fill="#e8b24a"/>
<rect x="11.3" y="114.5" width="2.8" height="17.7" rx="0.8" fill="#2a3650"/>
<rect x="14.1" y="115.1" width="3.1" height="17.1" fill="#171e2e"/>
<rect x="12.2" y="121.2" width="0.700" height="0.700" fill="#e8b24a"/>
<rect x="14.8" y="124.2" width="0.700" height="0.700" fill="#d99a3c"/>
<rect x="9.8" y="131.2" width="8.9" height="2.3" rx="0.800" fill="#f5843a" opacity="0.9"/>
<rect x="199.8" y="113.9" width="3.6" height="18.4" rx="0.8" fill="#2a3650"/>
<rect x="203.4" y="114.5" width="3" height="17.8" fill="#171e2e"/>
<rect x="203.1" y="122.3" width="0.700" height="0.700" fill="#f0c060"/>
<rect x="204.7" y="121.8" width="0.700" height="0.700" fill="#d99a3c"/>
<rect x="166.6" y="120.3" width="3.1" height="12.8" rx="0.8" fill="#2f3c55"/>
<rect x="169.8" y="120.9" width="1.9" height="12.2" fill="#1a2233"/>
<rect x="169.4" y="127.2" width="0.700" height="0.700" fill="#f0c060"/>
<rect x="52.6" y="116.4" width="3.5" height="16.9" rx="0.8" fill="#2a3650"/>
<rect x="56.1" y="117" width="2.9" height="16.3" fill="#171e2e"/>
<rect x="54.8" y="129.4" width="0.700" height="0.700" fill="#f0c060"/>
<rect x="57.7" y="131.8" width="0.700" height="0.700" fill="#f0c060"/>
<rect x="51.1" y="132.2" width="9.4" height="2.4" rx="0.800" fill="#f5843a" opacity="0.9"/>
<rect x="165.4" y="115.9" width="2.7" height="17.8" rx="0.8" fill="#35445f"/>
<rect x="168.1" y="116.5" width="2.7" height="17.2" fill="#1e273a"/>
<rect x="168" y="131.1" width="0.700" height="0.700" fill="#d99a3c"/>
<rect x="167.1" y="122.1" width="0.700" height="0.700" fill="#f0c060"/>
<rect x="163.9" y="132.7" width="8.4" height="1.2" rx="0.800" fill="#f5843a" opacity="0.9"/>
<rect x="88" y="114.7" width="4.2" height="19.2" rx="0.8" fill="#8090a8"/>
<rect x="92.2" y="115.3" width="2.4" height="18.6" fill="#46587a"/>
<rect x="90" y="123.2" width="0.700" height="0.700" fill="#f0c060"/>
<rect x="88.6" y="130.6" width="0.700" height="0.700" fill="#d99a3c"/>
<rect x="86.5" y="132.9" width="9.5" height="1.3" rx="0.800" fill="#f5843a" opacity="0.9"/>
<rect x="165.9" y="122.4" width="4.4" height="11.5" rx="0.8" fill="#3e4f6e"/>
<rect x="170.2" y="123" width="2.9" height="10.9" fill="#202a40"/>
<rect x="172" y="130.1" width="0.700" height="0.700" fill="#d99a3c"/>
<rect x="164.4" y="133" width="10.3" height="1.7" rx="0.800" fill="#f5843a" opacity="0.9"/>
<rect x="95.3" y="119.5" width="3" height="14.6" rx="0.8" fill="#2a3650"/>
<rect x="98.3" y="120.1" width="2.1" height="14" fill="#171e2e"/>
<rect x="97.8" y="123.7" width="0.700" height="0.700" fill="#e8b24a"/>
<rect x="18.7" y="123.9" width="3.8" height="10.5" rx="0.8" fill="#2a3650"/>
<rect x="22.6" y="124.5" width="2.9" height="9.9" fill="#171e2e"/>
<rect x="24.2" y="127.6" width="0.700" height="0.700" fill="#e8b24a"/>
<rect x="17.2" y="133.4" width="9.7" height="1.6" rx="0.800" fill="#f5843a" opacity="0.9"/>
<rect x="205.3" y="124.1" width="3.3" height="10.8" rx="0.8" fill="#50637f"/>
<rect x="208.6" y="124.7" width="3" height="10.2" fill="#2a3650"/>
<rect x="207.8" y="126.1" width="0.700" height="0.700" fill="#e8b24a"/>
<rect x="203.8" y="133.9" width="9.4" height="1.3" rx="0.800" fill="#f5843a" opacity="0.9"/>
<rect x="153.6" y="119" width="3.3" height="15.9" rx="0.8" fill="#2a3650"/>
<rect x="156.9" y="119.6" width="1.8" height="15.3" fill="#171e2e"/>
<rect x="155.8" y="128.1" width="0.700" height="0.700" fill="#f0c060"/>
<rect x="29.9" y="122.2" width="4.4" height="12.9" rx="0.8" fill="#50637f"/>
<rect x="34.3" y="122.8" width="1.9" height="12.3" fill="#2a3650"/>
<rect x="31" y="131.4" width="0.700" height="0.700" fill="#e8b24a"/>
<rect x="104.6" y="118.1" width="2.4" height="17.1" rx="0.8" fill="#3e4f6e"/>
<rect x="107" y="118.7" width="2.6" height="16.5" fill="#202a40"/>
<rect x="105.6" y="123" width="0.700" height="0.700" fill="#d99a3c"/>
<rect x="37.3" y="117.5" width="3.5" height="17.9" rx="0.8" fill="#3e4f6e"/>
<rect x="40.7" y="118.1" width="2.8" height="17.3" fill="#202a40"/>
<rect x="38.2" y="127.3" width="0.700" height="0.700" fill="#d99a3c"/>
<rect x="39.3" y="124.4" width="0.700" height="0.700" fill="#d99a3c"/>
<rect x="180.4" y="117.9" width="5.1" height="18.1" rx="0.8" fill="#35445f"/>
<rect x="185.4" y="118.5" width="3" height="17.5" fill="#1e273a"/>
<rect x="186.6" y="126.2" width="0.700" height="0.700" fill="#d99a3c"/>
<rect x="183.4" y="127.1" width="0.700" height="0.700" fill="#f0c060"/>
<rect x="181.2" y="133.2" width="0.700" height="0.700" fill="#f0c060"/>
<rect x="178.9" y="134.9" width="11" height="2" rx="0.800" fill="#f5843a" opacity="0.9"/>
<path d="M100 124L127 132" stroke="#b35a2a" stroke-width="5.5" stroke-linecap="round" opacity="0.5" fill="none"/>
<path d="M100 124L127 132" stroke="#f5843a" stroke-width="3" stroke-linecap="round" opacity="1" fill="none"/>
<path d="M127 132L138 128" stroke="#b35a2a" stroke-width="4.5" stroke-linecap="round" opacity="0.5" fill="none"/>
<path d="M127 132L138 128" stroke="#f5843a" stroke-width="2" stroke-linecap="round" opacity="1" fill="none"/>
<rect x="107.7" y="117.9" width="3.5" height="18.3" rx="0.8" fill="#2f3c55"/>
<rect x="111.2" y="118.5" width="4.2" height="17.7" fill="#1a2233"/>
<rect x="109.6" y="129.7" width="0.700" height="0.700" fill="#d99a3c"/>
<rect x="109" y="125.5" width="0.700" height="0.700" fill="#d99a3c"/>
<rect x="111.7" y="130" width="0.700" height="0.700" fill="#f0c060"/>
<rect x="16.7" y="123.1" width="4.2" height="13.2" rx="0.8" fill="#71839f"/>
<rect x="20.9" y="123.7" width="3.5" height="12.6" fill="#3d4e6c"/>
<rect x="17.4" y="129.2" width="0.700" height="0.700" fill="#d99a3c"/>
<rect x="19.1" y="135.2" width="0.700" height="0.700" fill="#d99a3c"/>
<rect x="15.2" y="135.4" width="10.7" height="2.3" rx="0.800" fill="#f5843a" opacity="0.9"/>
<rect x="197.2" y="126.7" width="2.8" height="10" rx="0.8" fill="#50637f"/>
<rect x="200" y="127.3" width="2" height="9.4" fill="#2a3650"/>
<rect x="197.8" y="135.3" width="0.700" height="0.700" fill="#d99a3c"/>
<rect x="80.3" y="120.4" width="3.2" height="16.4" rx="0.8" fill="#2f3c55"/>
<rect x="83.5" y="121" width="1.8" height="15.8" fill="#1a2233"/>
<rect x="83.2" y="124.2" width="0.700" height="0.700" fill="#f0c060"/>
<rect x="68.3" y="122.3" width="3.7" height="14.7" rx="0.8" fill="#71839f"/>
<rect x="72" y="122.9" width="3.5" height="14.1" fill="#3d4e6c"/>
<rect x="69.9" y="132" width="0.700" height="0.700" fill="#d99a3c"/>
<rect x="73.8" y="132.2" width="0.700" height="0.700" fill="#f0c060"/>
<rect x="84.7" y="117.3" width="3.4" height="19.7" rx="0.8" fill="#46587a"/>
<rect x="88.1" y="117.9" width="2.4" height="19.1" fill="#242f47"/>
<rect x="88.7" y="121.5" width="0.700" height="0.700" fill="#d99a3c"/>
<rect x="88.2" y="123.4" width="0.700" height="0.700" fill="#d99a3c"/>
<rect x="181.8" y="123.7" width="3.2" height="13.4" rx="0.8" fill="#71839f"/>
<rect x="185" y="124.3" width="1.6" height="12.8" fill="#3d4e6c"/>
<rect x="185" y="134.9" width="0.700" height="0.700" fill="#f0c060"/>
<rect x="48" y="123.1" width="3.5" height="14.3" rx="0.8" fill="#3e4f6e"/>
<rect x="51.6" y="123.7" width="3.1" height="13.7" fill="#202a40"/>
<rect x="52.2" y="126.3" width="0.700" height="0.700" fill="#e8b24a"/>
<rect x="50.3" y="134" width="0.700" height="0.700" fill="#f0c060"/>
<rect x="46.5" y="136.3" width="9.6" height="1.6" rx="0.800" fill="#f5843a" opacity="0.9"/>
<path d="M206 132L210 134" stroke="#b35a2a" stroke-width="4.9" stroke-linecap="round" opacity="0.5" fill="none"/>
<path d="M206 132L210 134" stroke="#f5843a" stroke-width="2.4" stroke-linecap="round" opacity="1" fill="none"/>
<rect x="61.3" y="121.9" width="4.7" height="16.3" rx="0.8" fill="#2a3650"/>
<rect x="66" y="122.5" width="2.4" height="15.7" fill="#171e2e"/>
<rect x="66.4" y="133.2" width="0.700" height="0.700" fill="#e8b24a"/>
<rect x="65.8" y="124" width="0.700" height="0.700" fill="#e8b24a"/>
<rect x="59.8" y="137.2" width="10.1" height="1.5" rx="0.800" fill="#f5843a" opacity="0.9"/>
<rect x="76.7" y="124.7" width="4.2" height="14.1" rx="0.8" fill="#8090a8"/>
<rect x="80.9" y="125.3" width="2.4" height="13.5" fill="#46587a"/>
<rect x="79.5" y="136.3" width="0.700" height="0.700" fill="#d99a3c"/>
<rect x="81.3" y="131.9" width="0.700" height="0.700" fill="#d99a3c"/>
<rect x="75.2" y="137.8" width="9.6" height="1.9" rx="0.800" fill="#f5843a" opacity="0.9"/>
<rect x="25.5" y="128.9" width="3.5" height="9.9" rx="0.8" fill="#2f3c55"/>
<rect x="29" y="129.5" width="3.2" height="9.3" fill="#1a2233"/>
<rect x="30.9" y="131.3" width="0.700" height="0.700" fill="#d99a3c"/>
<rect x="24" y="137.9" width="9.6" height="1.5" rx="0.800" fill="#f5843a" opacity="0.9"/>
<rect x="18.4" y="127.7" width="5.1" height="11.4" rx="0.8" fill="#71839f"/>
<rect x="23.5" y="128.3" width="2.2" height="10.8" fill="#3d4e6c"/>
<rect x="22.7" y="131.4" width="0.700" height="0.700" fill="#e8b24a"/>
<rect x="166.9" y="124.1" width="3.7" height="15.2" rx="0.8" fill="#2a3650"/>
<rect x="170.6" y="124.7" width="3" height="14.6" fill="#171e2e"/>
<rect x="167.7" y="130.4" width="0.700" height="0.700" fill="#f0c060"/>
<rect x="171.5" y="130.7" width="0.700" height="0.700" fill="#e8b24a"/>
<rect x="52.6" y="122.7" width="3.2" height="16.7" rx="0.8" fill="#50637f"/>
<rect x="55.8" y="123.3" width="3.3" height="16.1" fill="#2a3650"/>
<rect x="56.6" y="126.1" width="0.700" height="0.700" fill="#f0c060"/>
<rect x="56.3" y="125" width="0.700" height="0.700" fill="#f0c060"/>
<rect x="82.9" y="128.2" width="2.7" height="11.5" rx="0.8" fill="#46587a"/>
<rect x="85.6" y="128.8" width="2.6" height="10.9" fill="#242f47"/>
<rect x="85.6" y="135.7" width="0.700" height="0.700" fill="#e8b24a"/>
<rect x="127.2" y="122.3" width="3.4" height="17.4" rx="0.8" fill="#35445f"/>
<rect x="130.6" y="122.9" width="4" height="16.8" fill="#1e273a"/>
<rect x="130.8" y="136.7" width="0.700" height="0.700" fill="#d99a3c"/>
<rect x="131.1" y="133.8" width="0.700" height="0.700" fill="#d99a3c"/>
<path d="M16 134L22 136" stroke="#b35a2a" stroke-width="4.5" stroke-linecap="round" opacity="0.5" fill="none"/>
<path d="M16 134L22 136" stroke="#f5843a" stroke-width="2" stroke-linecap="round" opacity="1" fill="none"/>
<rect x="148" y="124.6" width="4.1" height="15.8" rx="0.8" fill="#35445f"/>
<rect x="152.2" y="125.2" width="3" height="15.2" fill="#1e273a"/>
<rect x="153.5" y="127.7" width="0.700" height="0.700" fill="#d99a3c"/>
<rect x="153.3" y="126.5" width="0.700" height="0.700" fill="#e8b24a"/>
<rect x="209.3" y="121.5" width="3.2" height="19.1" rx="0.8" fill="#50637f"/>
<rect x="212.5" y="122.1" width="1.7" height="18.5" fill="#2a3650"/>
<rect x="211.7" y="127.5" width="0.700" height="0.700" fill="#d99a3c"/>
<rect x="210.8" y="124.7" width="0.700" height="0.700" fill="#f0c060"/>
<rect x="207.8" y="139.6" width="8" height="1.8" rx="0.800" fill="#f5843a" opacity="0.9"/>
<rect x="124.8" y="123.7" width="3.9" height="17" rx="0.8" fill="#8090a8"/>
<rect x="128.8" y="124.3" width="2.7" height="16.4" fill="#46587a"/>
<rect x="127.1" y="138.4" width="0.700" height="0.700" fill="#e8b24a"/>
<rect x="128.9" y="126.2" width="0.700" height="0.700" fill="#d99a3c"/>
<rect x="123.3" y="139.7" width="9.7" height="1.8" rx="0.800" fill="#f5843a" opacity="0.9"/>
<rect x="1" y="130.4" width="2.5" height="10.7" rx="0.8" fill="#35445f"/>
<rect x="3.4" y="131" width="2.6" height="10.1" fill="#1e273a"/>
<rect x="2.3" y="133.3" width="0.700" height="0.700" fill="#e8b24a"/>
<rect x="-0.5" y="140.1" width="8.1" height="1.9" rx="0.800" fill="#f5843a" opacity="0.9"/>
<rect x="37.9" y="128.9" width="4" height="12.3" rx="0.8" fill="#3e4f6e"/>
<rect x="41.9" y="129.5" width="2.4" height="11.7" fill="#202a40"/>
<rect x="40.4" y="136.3" width="0.700" height="0.700" fill="#f0c060"/>
<rect x="51.5" y="131.5" width="3.3" height="10.1" rx="0.8" fill="#3e4f6e"/>
<rect x="54.8" y="132.1" width="3.3" height="9.5" fill="#202a40"/>
<rect x="53" y="140.4" width="0.700" height="0.700" fill="#f0c060"/>
<rect x="170.9" y="131.9" width="3.6" height="10" rx="0.8" fill="#46587a"/>
<rect x="174.6" y="132.5" width="4.2" height="9.4" fill="#242f47"/>
<rect x="171.7" y="137.1" width="0.700" height="0.700" fill="#d99a3c"/>
<rect x="1.2" y="129" width="4.5" height="13.3" rx="0.8" fill="#35445f"/>
<rect x="5.7" y="129.6" width="2" height="12.7" fill="#1e273a"/>
<rect x="2.4" y="139.9" width="0.700" height="0.700" fill="#d99a3c"/>
<rect x="13.7" y="127.4" width="3.6" height="15.2" rx="0.8" fill="#2a3650"/>
<rect x="17.3" y="128" width="3.9" height="14.6" fill="#171e2e"/>
<rect x="16.6" y="134.6" width="0.700" height="0.700" fill="#e8b24a"/>
<rect x="20.2" y="129.2" width="0.700" height="0.700" fill="#e8b24a"/>
<rect x="67.6" y="132.8" width="3.6" height="10" rx="0.8" fill="#2a3650"/>
<rect x="71.2" y="133.4" width="2.2" height="9.4" fill="#171e2e"/>
<rect x="69.4" y="135.1" width="0.700" height="0.700" fill="#f0c060"/>
<rect x="164.7" y="123.2" width="3.6" height="19.8" rx="0.8" fill="#3e4f6e"/>
<rect x="168.3" y="123.8" width="2.3" height="19.2" fill="#202a40"/>
<rect x="167.7" y="129.8" width="0.700" height="0.700" fill="#f0c060"/>
<rect x="169" y="127.6" width="0.700" height="0.700" fill="#d99a3c"/>
<rect x="119.6" y="122.2" width="3.1" height="20.8" rx="0.8" fill="#50637f"/>
<rect x="122.7" y="122.8" width="1.6" height="20.2" fill="#2a3650"/>
<rect x="122.9" y="126.6" width="0.700" height="0.700" fill="#e8b24a"/>
<rect x="122.8" y="127.4" width="0.700" height="0.700" fill="#e8b24a"/>
<rect x="197.3" y="131.5" width="4" height="11.6" rx="0.8" fill="#71839f"/>
<rect x="201.3" y="132.1" width="1.8" height="11" fill="#3d4e6c"/>
<rect x="201.4" y="140.5" width="0.700" height="0.700" fill="#f0c060"/>
<rect x="6.1" y="124.5" width="3.4" height="18.8" rx="0.8" fill="#50637f"/>
<rect x="9.6" y="125.1" width="2.9" height="18.2" fill="#2a3650"/>
<rect x="10.4" y="139.3" width="0.700" height="0.700" fill="#f0c060"/>
<rect x="7" y="132.7" width="0.700" height="0.700" fill="#d99a3c"/>
<rect x="4.6" y="142.2" width="9.3" height="1.9" rx="0.800" fill="#f5843a" opacity="0.9"/>
<rect x="138.7" y="133" width="4.8" height="10.4" rx="0.8" fill="#46587a"/>
<rect x="143.6" y="133.6" width="3.3" height="9.8" fill="#242f47"/>
<rect x="145.6" y="142.3" width="0.700" height="0.700" fill="#f0c060"/>
<rect x="180.9" y="132.1" width="3.4" height="11.9" rx="0.8" fill="#2a3650"/>
<rect x="184.3" y="132.7" width="2.4" height="11.3" fill="#171e2e"/>
<rect x="184.2" y="141.9" width="0.700" height="0.700" fill="#f0c060"/>
<rect x="36.3" y="126" width="3.2" height="18.4" rx="0.8" fill="#2a3650"/>
<rect x="39.5" y="126.6" width="2.6" height="17.8" fill="#171e2e"/>
<rect x="40.9" y="142.6" width="0.700" height="0.700" fill="#e8b24a"/>
<rect x="37.1" y="136.7" width="0.700" height="0.700" fill="#f0c060"/>
<rect x="80.4" y="132.1" width="4.4" height="12.9" rx="0.8" fill="#2a3650"/>
<rect x="84.8" y="132.7" width="2.4" height="12.3" fill="#171e2e"/>
<rect x="82.4" y="136.2" width="0.700" height="0.700" fill="#f0c060"/>
<rect x="78.9" y="144" width="9.9" height="2.1" rx="0.800" fill="#f5843a" opacity="0.9"/>
<rect x="204.1" y="130.1" width="2.7" height="15" rx="0.8" fill="#2f3c55"/>
<rect x="206.8" y="130.7" width="2.2" height="14.4" fill="#1a2233"/>
<rect x="207.3" y="135.3" width="0.700" height="0.700" fill="#d99a3c"/>
<rect x="125.6" y="130.6" width="3" height="14.6" rx="0.8" fill="#46587a"/>
<rect x="128.6" y="131.2" width="2.3" height="14" fill="#242f47"/>
<rect x="126.7" y="133.7" width="0.700" height="0.700" fill="#f0c060"/>
<rect x="138.1" y="134.7" width="4.5" height="10.6" rx="0.8" fill="#2a3650"/>
<rect x="142.6" y="135.3" width="2.3" height="10" fill="#171e2e"/>
<rect x="140.9" y="144" width="0.700" height="0.700" fill="#e8b24a"/>
<rect x="159.9" y="131.5" width="3.8" height="13.9" rx="0.8" fill="#3e4f6e"/>
<rect x="163.7" y="132.1" width="2.1" height="13.3" fill="#202a40"/>
<rect x="161.7" y="140.3" width="0.700" height="0.700" fill="#f0c060"/>
<rect x="165.1" y="132.6" width="4.4" height="13.4" rx="0.8" fill="#8090a8"/>
<rect x="169.5" y="133.2" width="2.6" height="12.8" fill="#46587a"/>
<rect x="171.1" y="135.3" width="0.700" height="0.700" fill="#e8b24a"/>
<rect x="171" y="144.2" width="0.700" height="0.700" fill="#e8b24a"/>
<rect x="44.5" y="135.5" width="2.8" height="10.6" rx="0.8" fill="#46587a"/>
<rect x="47.3" y="136.1" width="2.8" height="10" fill="#242f47"/>
<rect x="45" y="144" width="0.700" height="0.700" fill="#d99a3c"/>
<rect x="52.1" y="134" width="4.1" height="12.3" rx="0.8" fill="#50637f"/>
<rect x="56.1" y="134.6" width="4.2" height="11.7" fill="#2a3650"/>
<rect x="57.6" y="138.8" width="0.700" height="0.700" fill="#f0c060"/>
<rect x="55" y="140.3" width="0.700" height="0.700" fill="#d99a3c"/>
<rect x="113.4" y="135.7" width="3.9" height="11.1" rx="0.8" fill="#35445f"/>
<rect x="117.3" y="136.3" width="1.8" height="10.5" fill="#1e273a"/>
<rect x="117.9" y="137.4" width="0.700" height="0.700" fill="#e8b24a"/>
<rect x="82.4" y="134.9" width="3.9" height="12.1" rx="0.8" fill="#50637f"/>
<rect x="86.3" y="135.5" width="4.4" height="11.5" fill="#2a3650"/>
<rect x="86.8" y="143" width="0.700" height="0.700" fill="#d99a3c"/>
<rect x="84.1" y="140.8" width="0.700" height="0.700" fill="#d99a3c"/>
<rect x="80.9" y="145.9" width="11.3" height="1.5" rx="0.800" fill="#f5843a" opacity="0.9"/>
<rect x="199.2" y="136.5" width="4.5" height="10.7" rx="0.8" fill="#8090a8"/>
<rect x="203.7" y="137.1" width="3.2" height="10.1" fill="#46587a"/>
<rect x="204.6" y="144.9" width="0.700" height="0.700" fill="#f0c060"/>
<rect x="106.9" y="134.9" width="3" height="12.3" rx="0.8" fill="#50637f"/>
<rect x="110" y="135.5" width="2.9" height="11.7" fill="#2a3650"/>
<rect x="110.4" y="143.7" width="0.700" height="0.700" fill="#f0c060"/>
<rect x="55.3" y="132.5" width="4.8" height="14.8" rx="0.8" fill="#50637f"/>
<rect x="60.2" y="133.1" width="3.5" height="14.2" fill="#2a3650"/>
<rect x="61.7" y="137.5" width="0.700" height="0.700" fill="#d99a3c"/>
<rect x="56.3" y="139.7" width="0.700" height="0.700" fill="#d99a3c"/>
<rect x="25.2" y="132.1" width="4.3" height="15.5" rx="0.8" fill="#46587a"/>
<rect x="29.4" y="132.7" width="3.4" height="14.9" fill="#242f47"/>
<rect x="29.2" y="136.1" width="0.700" height="0.700" fill="#d99a3c"/>
<rect x="29" y="134.1" width="0.700" height="0.700" fill="#f0c060"/>
<rect x="197.7" y="134" width="3.4" height="13.6" rx="0.8" fill="#8090a8"/>
<rect x="201.1" y="134.6" width="1.5" height="13" fill="#46587a"/>
<rect x="199.2" y="146.4" width="0.700" height="0.700" fill="#d99a3c"/>
<rect x="25.3" y="133.9" width="3.3" height="14.3" rx="0.8" fill="#35445f"/>
<rect x="28.7" y="134.5" width="1.7" height="13.7" fill="#1e273a"/>
<rect x="26.3" y="138.3" width="0.700" height="0.700" fill="#d99a3c"/>
<rect x="23.8" y="147.2" width="8" height="1.6" rx="0.800" fill="#f5843a" opacity="0.9"/>
<rect x="77.7" y="128.8" width="3.1" height="19.4" rx="0.8" fill="#2f3c55"/>
<rect x="80.8" y="129.4" width="2.9" height="18.8" fill="#1a2233"/>
<rect x="82.4" y="134.7" width="0.700" height="0.700" fill="#e8b24a"/>
<rect x="79.3" y="136.5" width="0.700" height="0.700" fill="#e8b24a"/>
<rect x="63.7" y="138" width="2.5" height="10.8" rx="0.8" fill="#46587a"/>
<rect x="66.3" y="138.6" width="2.9" height="10.2" fill="#242f47"/>
<rect x="65.7" y="147" width="0.700" height="0.700" fill="#e8b24a"/>
<rect x="194.8" y="139" width="4.6" height="10.1" rx="0.8" fill="#46587a"/>
<rect x="199.4" y="139.6" width="2.4" height="9.5" fill="#242f47"/>
<rect x="197.4" y="141.2" width="0.700" height="0.700" fill="#f0c060"/>
<rect x="106" y="137.5" width="4.3" height="11.9" rx="0.8" fill="#35445f"/>
<rect x="110.3" y="138.1" width="2.3" height="11.3" fill="#1e273a"/>
<rect x="110.7" y="147" width="0.700" height="0.700" fill="#e8b24a"/>
<rect x="117.9" y="134.5" width="3.9" height="15.2" rx="0.8" fill="#2f3c55"/>
<rect x="121.8" y="135.1" width="3.8" height="14.6" fill="#1a2233"/>
<rect x="118.9" y="141.3" width="0.700" height="0.700" fill="#e8b24a"/>
<rect x="121.6" y="144.4" width="0.700" height="0.700" fill="#d99a3c"/>
<rect x="21.3" y="133.4" width="4" height="16.5" rx="0.8" fill="#35445f"/>
<rect x="25.4" y="134" width="2.3" height="15.9" fill="#1e273a"/>
<rect x="25.4" y="141.3" width="0.700" height="0.700" fill="#f0c060"/>
<rect x="26.5" y="147.9" width="0.700" height="0.700" fill="#d99a3c"/>
<rect x="47" y="138.9" width="5" height="11.1" rx="0.8" fill="#50637f"/>
<rect x="51.9" y="139.5" width="3.5" height="10.5" fill="#2a3650"/>
<rect x="52.6" y="148.9" width="0.700" height="0.700" fill="#d99a3c"/>
<rect x="49.4" y="147.1" width="0.700" height="0.700" fill="#d99a3c"/>
<rect x="26.2" y="139" width="3.2" height="11.2" rx="0.8" fill="#35445f"/>
<rect x="29.5" y="139.6" width="2.6" height="10.6" fill="#1e273a"/>
<rect x="30.6" y="140.8" width="0.700" height="0.700" fill="#e8b24a"/>
<rect x="120.6" y="135.4" width="4.7" height="14.9" rx="0.8" fill="#35445f"/>
<rect x="125.4" y="136" width="2.9" height="14.3" fill="#1e273a"/>
<rect x="125.3" y="145.8" width="0.700" height="0.700" fill="#f0c060"/>
<rect x="124.4" y="144.5" width="0.700" height="0.700" fill="#e8b24a"/>
<rect x="156.2" y="137.2" width="4.4" height="13.9" rx="0.8" fill="#2a3650"/>
<rect x="160.6" y="137.8" width="4.4" height="13.3" fill="#171e2e"/>
<rect x="162.1" y="141.3" width="0.700" height="0.700" fill="#e8b24a"/>
<rect x="161.2" y="139.1" width="0.700" height="0.700" fill="#f0c060"/>
<rect x="149.2" y="132.5" width="4.5" height="19.4" rx="0.8" fill="#50637f"/>
<rect x="153.8" y="133.1" width="2.8" height="18.8" fill="#2a3650"/>
<rect x="151.4" y="137.3" width="0.700" height="0.700" fill="#d99a3c"/>
<rect x="154.6" y="143.8" width="0.700" height="0.700" fill="#d99a3c"/>
<rect x="155.2" y="148.6" width="0.700" height="0.700" fill="#e8b24a"/>
<rect x="147.7" y="150.9" width="10.3" height="2.4" rx="0.800" fill="#f5843a" opacity="0.9"/>
<rect x="153" y="136" width="5" height="16.4" rx="0.8" fill="#35445f"/>
<rect x="158" y="136.6" width="3.1" height="15.8" fill="#1e273a"/>
<rect x="155.7" y="145.7" width="0.700" height="0.700" fill="#e8b24a"/>
<rect x="153.9" y="149.5" width="0.700" height="0.700" fill="#e8b24a"/>
<rect x="181.2" y="141.8" width="5.1" height="10.6" rx="0.8" fill="#2a3650"/>
<rect x="186.2" y="142.4" width="2.8" height="10" fill="#171e2e"/>
<rect x="186.4" y="144.8" width="0.700" height="0.700" fill="#f0c060"/>
<rect x="93.4" y="135.8" width="3.7" height="16.8" rx="0.8" fill="#71839f"/>
<rect x="97.2" y="136.4" width="3.7" height="16.2" fill="#3d4e6c"/>
<rect x="96.6" y="138.6" width="0.700" height="0.700" fill="#f0c060"/>
<rect x="98.1" y="147.9" width="0.700" height="0.700" fill="#f0c060"/>
<rect x="127.9" y="136.6" width="5.9" height="16.8" rx="0.8" fill="#8090a8"/>
<rect x="133.7" y="137.2" width="2.9" height="16.2" fill="#46587a"/>
<rect x="130" y="143.5" width="0.700" height="0.700" fill="#e8b24a"/>
<rect x="129.8" y="150.4" width="0.700" height="0.700" fill="#d99a3c"/>
<rect x="135.1" y="145.8" width="0.700" height="0.700" fill="#f0c060"/>
<path d="M72 145L82 150" stroke="#b35a2a" stroke-width="5.9" stroke-linecap="round" opacity="0.5" fill="none"/>
<path d="M72 145L82 150" stroke="#f5843a" stroke-width="3.4" stroke-linecap="round" opacity="1" fill="none"/>
<rect x="56.5" y="141" width="4.3" height="13.2" rx="0.8" fill="#2f3c55"/>
<rect x="60.8" y="141.6" width="3.7" height="12.6" fill="#1a2233"/>
<rect x="61.6" y="153.1" width="0.700" height="0.700" fill="#f0c060"/>
<rect x="60.8" y="143.4" width="0.700" height="0.700" fill="#e8b24a"/>
<rect x="55" y="153.2" width="11" height="1.4" rx="0.800" fill="#f5843a" opacity="0.9"/>
<rect x="86.7" y="140.5" width="4" height="13.8" rx="0.8" fill="#2a3650"/>
<rect x="90.7" y="141.1" width="1.9" height="13.2" fill="#171e2e"/>
<rect x="89.9" y="150.4" width="0.700" height="0.700" fill="#e8b24a"/>
<rect x="136.2" y="133.4" width="4.3" height="21.1" rx="0.8" fill="#2f3c55"/>
<rect x="140.5" y="134" width="1.9" height="20.5" fill="#1a2233"/>
<rect x="141.2" y="139.2" width="0.700" height="0.700" fill="#f0c060"/>
<rect x="138.6" y="152.4" width="0.700" height="0.700" fill="#f0c060"/>
<rect x="182.9" y="135.9" width="3.5" height="18.7" rx="0.8" fill="#8090a8"/>
<rect x="186.4" y="136.5" width="1.7" height="18.1" fill="#46587a"/>
<rect x="186.3" y="147.2" width="0.700" height="0.700" fill="#d99a3c"/>
<rect x="183.7" y="150.9" width="0.700" height="0.700" fill="#e8b24a"/>
<rect x="181.4" y="153.6" width="8.2" height="2.2" rx="0.800" fill="#f5843a" opacity="0.9"/>
<rect x="152.5" y="132.7" width="5.5" height="22" rx="0.8" fill="#50637f"/>
<rect x="158.1" y="133.3" width="2.5" height="21.4" fill="#2a3650"/>
<rect x="155.4" y="140.7" width="0.700" height="0.700" fill="#f0c060"/>
<rect x="157.9" y="136" width="0.700" height="0.700" fill="#f0c060"/>
<rect x="159.4" y="150.9" width="0.700" height="0.700" fill="#e8b24a"/>
<rect x="104.4" y="142.7" width="3.7" height="12.1" rx="0.8" fill="#8090a8"/>
<rect x="108.1" y="143.3" width="2.5" height="11.5" fill="#46587a"/>
<rect x="105.4" y="150.7" width="0.700" height="0.700" fill="#f0c060"/>
<rect x="57.9" y="136.5" width="3.4" height="18.6" rx="0.8" fill="#35445f"/>
<rect x="61.3" y="137.1" width="3.5" height="18" fill="#1e273a"/>
<rect x="60.4" y="148.2" width="0.700" height="0.700" fill="#e8b24a"/>
<rect x="63.1" y="142.2" width="0.700" height="0.700" fill="#d99a3c"/>
<rect x="103.2" y="132.8" width="3.3" height="22.3" rx="0.8" fill="#2a3650"/>
<rect x="106.5" y="133.4" width="3.7" height="21.7" fill="#171e2e"/>
<rect x="105.7" y="152.8" width="0.700" height="0.700" fill="#d99a3c"/>
<rect x="106.3" y="137.3" width="0.700" height="0.700" fill="#d99a3c"/>
<rect x="106.5" y="152.5" width="0.700" height="0.700" fill="#e8b24a"/>
<rect x="101.7" y="154.1" width="10" height="1.9" rx="0.800" fill="#f5843a" opacity="0.9"/>
<rect x="156.7" y="141.5" width="3.2" height="13.9" rx="0.8" fill="#8090a8"/>
<rect x="159.9" y="142.1" width="3" height="13.3" fill="#46587a"/>
<rect x="158.7" y="152.1" width="0.700" height="0.700" fill="#f0c060"/>
<rect x="21.8" y="145" width="4.8" height="11.3" rx="0.8" fill="#2a3650"/>
<rect x="26.6" y="145.6" width="2.3" height="10.7" fill="#171e2e"/>
<rect x="25.2" y="151.4" width="0.700" height="0.700" fill="#d99a3c"/>
<rect x="20.3" y="155.4" width="10.2" height="1.8" rx="0.800" fill="#f5843a" opacity="0.9"/>
<rect x="44.1" y="145.3" width="3.1" height="11.1" rx="0.8" fill="#35445f"/>
<rect x="47.3" y="145.9" width="2.3" height="10.5" fill="#1e273a"/>
<rect x="45" y="152.3" width="0.700" height="0.700" fill="#e8b24a"/>
<rect x="77.1" y="146.1" width="3" height="10.4" rx="0.8" fill="#2f3c55"/>
<rect x="80" y="146.7" width="2.5" height="9.8" fill="#1a2233"/>
<rect x="78.4" y="149.3" width="0.700" height="0.700" fill="#d99a3c"/>
<rect x="90.1" y="137.7" width="4.5" height="18.9" rx="0.8" fill="#2a3650"/>
<rect x="94.7" y="138.3" width="2.7" height="18.3" fill="#171e2e"/>
<rect x="91.2" y="153" width="0.700" height="0.700" fill="#d99a3c"/>
<rect x="94.2" y="145.3" width="0.700" height="0.700" fill="#d99a3c"/>
<rect x="95.4" y="149.4" width="0.700" height="0.700" fill="#d99a3c"/>
<rect x="88.6" y="155.6" width="10.2" height="2.3" rx="0.800" fill="#f5843a" opacity="0.9"/>
<rect x="184.5" y="139.5" width="3.7" height="17.5" rx="0.8" fill="#35445f"/>
<rect x="188.2" y="140.1" width="4.5" height="16.9" fill="#1e273a"/>
<rect x="187" y="141.4" width="0.700" height="0.700" fill="#f0c060"/>
<rect x="190.7" y="150.4" width="0.700" height="0.700" fill="#d99a3c"/>
<rect x="191.1" y="150.9" width="0.700" height="0.700" fill="#d99a3c"/>
<rect x="153.7" y="138" width="4.6" height="19.2" rx="0.8" fill="#3e4f6e"/>
<rect x="158.4" y="138.6" width="4.3" height="18.6" fill="#202a40"/>
<rect x="161.5" y="143" width="0.700" height="0.700" fill="#d99a3c"/>
<rect x="155.7" y="141" width="0.700" height="0.700" fill="#e8b24a"/>
<rect x="158.2" y="147.3" width="0.700" height="0.700" fill="#f0c060"/>
<rect x="43.7" y="137" width="3.6" height="20.7" rx="0.8" fill="#2a3650"/>
<rect x="47.2" y="137.6" width="1.9" height="20.1" fill="#171e2e"/>
<rect x="44.7" y="153.6" width="0.700" height="0.700" fill="#d99a3c"/>
<rect x="46" y="143.4" width="0.700" height="0.700" fill="#f0c060"/>
<rect x="32.5" y="142.2" width="5" height="15.6" rx="0.8" fill="#8090a8"/>
<rect x="37.4" y="142.8" width="2.4" height="15" fill="#46587a"/>
<rect x="35.8" y="148.3" width="0.700" height="0.700" fill="#e8b24a"/>
<rect x="35.4" y="147.5" width="0.700" height="0.700" fill="#e8b24a"/>
<rect x="142.9" y="145.2" width="3.6" height="12.9" rx="0.8" fill="#2a3650"/>
<rect x="146.5" y="145.8" width="3.8" height="12.3" fill="#171e2e"/>
<rect x="146.7" y="154.6" width="0.700" height="0.700" fill="#f0c060"/>
<rect x="148.5" y="156" width="0.700" height="0.700" fill="#e8b24a"/>
<rect x="192.5" y="140.4" width="3.7" height="18" rx="0.8" fill="#50637f"/>
<rect x="196.2" y="141" width="2" height="17.4" fill="#2a3650"/>
<rect x="196.2" y="143.8" width="0.700" height="0.700" fill="#d99a3c"/>
<rect x="193.5" y="156" width="0.700" height="0.700" fill="#e8b24a"/>
<rect x="43.1" y="141.5" width="3.1" height="17.1" rx="0.8" fill="#2f3c55"/>
<rect x="46.2" y="142.1" width="2.2" height="16.5" fill="#1a2233"/>
<rect x="44.1" y="152.6" width="0.700" height="0.700" fill="#f0c060"/>
<rect x="44.8" y="143.5" width="0.700" height="0.700" fill="#e8b24a"/>
<rect x="41.6" y="157.6" width="8.3" height="1.6" rx="0.800" fill="#f5843a" opacity="0.9"/>
<rect x="10.2" y="139.3" width="3.2" height="19.5" rx="0.8" fill="#3e4f6e"/>
<rect x="13.4" y="139.9" width="3.4" height="18.9" fill="#202a40"/>
<rect x="12.7" y="151.8" width="0.700" height="0.700" fill="#f0c060"/>
<rect x="14.9" y="147.9" width="0.700" height="0.700" fill="#f0c060"/>
<rect x="199.7" y="146.6" width="3.4" height="12.7" rx="0.8" fill="#35445f"/>
<rect x="203.1" y="147.2" width="2.3" height="12.1" fill="#1e273a"/>
<rect x="202.8" y="158" width="0.700" height="0.700" fill="#f0c060"/>
<rect x="89.7" y="148.7" width="4.6" height="10.9" rx="0.8" fill="#35445f"/>
<rect x="94.4" y="149.3" width="3.2" height="10.3" fill="#1e273a"/>
<rect x="91.3" y="153.2" width="0.700" height="0.700" fill="#e8b24a"/>
<rect x="88.2" y="158.6" width="10.9" height="1.4" rx="0.800" fill="#f5843a" opacity="0.9"/>
<rect x="82.8" y="143" width="5.4" height="17.1" rx="0.8" fill="#3e4f6e"/>
<rect x="88.2" y="143.6" width="3.1" height="16.5" fill="#202a40"/>
<rect x="89.3" y="155.8" width="0.700" height="0.700" fill="#d99a3c"/>
<rect x="85.9" y="147.7" width="0.700" height="0.700" fill="#e8b24a"/>
<rect x="88.6" y="155.7" width="0.700" height="0.700" fill="#f0c060"/>
<rect x="30.1" y="146.9" width="4.3" height="13.6" rx="0.8" fill="#3e4f6e"/>
<rect x="34.4" y="147.5" width="2.1" height="13" fill="#202a40"/>
<rect x="31.9" y="159.4" width="0.700" height="0.700" fill="#d99a3c"/>
<rect x="173.6" y="143.9" width="4" height="16.8" rx="0.8" fill="#35445f"/>
<rect x="177.6" y="144.5" width="4.2" height="16.2" fill="#1e273a"/>
<rect x="179.1" y="158.7" width="0.700" height="0.700" fill="#f0c060"/>
<rect x="176.1" y="155.3" width="0.700" height="0.700" fill="#f0c060"/>
<rect x="176.6" y="156.5" width="0.700" height="0.700" fill="#d99a3c"/>
<rect x="172.1" y="159.7" width="11.3" height="1.8" rx="0.800" fill="#f5843a" opacity="0.9"/>
<rect x="77.6" y="140.3" width="5.9" height="20.7" rx="0.8" fill="#46587a"/>
<rect x="83.5" y="140.9" width="3" height="20.1" fill="#242f47"/>
<rect x="80" y="146.8" width="0.700" height="0.700" fill="#e8b24a"/>
<rect x="84.8" y="156.8" width="0.700" height="0.700" fill="#e8b24a"/>
<rect x="82.2" y="147.6" width="0.700" height="0.700" fill="#e8b24a"/>
<rect x="80.7" y="157" width="0.700" height="0.700" fill="#e8b24a"/>
<rect x="130" y="151.2" width="4.4" height="10.4" rx="0.8" fill="#46587a"/>
<rect x="134.4" y="151.8" width="4.5" height="9.8" fill="#242f47"/>
<rect x="130.5" y="159.2" width="0.700" height="0.700" fill="#e8b24a"/>
<rect x="136.1" y="153.4" width="0.700" height="0.700" fill="#e8b24a"/>
<rect x="0.3" y="138.6" width="3.1" height="23" rx="0.8" fill="#46587a"/>
<rect x="3.4" y="139.2" width="3.6" height="22.4" fill="#242f47"/>
<rect x="2.3" y="144" width="0.700" height="0.700" fill="#d99a3c"/>
<rect x="5.2" y="152.1" width="0.700" height="0.700" fill="#d99a3c"/>
<rect x="1.5" y="156.6" width="0.700" height="0.700" fill="#f0c060"/>
<path d="M0 152L6 158" stroke="#b35a2a" stroke-width="4.9" stroke-linecap="round" opacity="0.5" fill="none"/>
<path d="M0 152L6 158" stroke="#f5843a" stroke-width="2.4" stroke-linecap="round" opacity="1" fill="none"/>
<rect x="194.8" y="145.5" width="5.3" height="16.7" rx="0.8" fill="#2f3c55"/>
<rect x="200.1" y="146.1" width="2.5" height="16.1" fill="#1a2233"/>
<rect x="201.3" y="158.4" width="0.700" height="0.700" fill="#f0c060"/>
<rect x="201.3" y="157.8" width="0.700" height="0.700" fill="#e8b24a"/>
<rect x="47.6" y="145" width="3.8" height="17.5" rx="0.8" fill="#2a3650"/>
<rect x="51.4" y="145.6" width="4" height="16.9" fill="#171e2e"/>
<rect x="48.5" y="149.3" width="0.700" height="0.700" fill="#d99a3c"/>
<rect x="48.9" y="151.8" width="0.700" height="0.700" fill="#f0c060"/>
<rect x="54.2" y="153.5" width="0.700" height="0.700" fill="#d99a3c"/>
<rect x="48.3" y="147.3" width="5.1" height="16" rx="0.8" fill="#50637f"/>
<rect x="53.4" y="147.9" width="4.1" height="15.4" fill="#2a3650"/>
<rect x="55.9" y="161.7" width="0.700" height="0.700" fill="#d99a3c"/>
<rect x="53.6" y="156.8" width="0.700" height="0.700" fill="#d99a3c"/>
<rect x="55.3" y="160.9" width="0.700" height="0.700" fill="#f0c060"/>
<rect x="24.5" y="152" width="3.9" height="11.3" rx="0.8" fill="#50637f"/>
<rect x="28.3" y="152.6" width="2.4" height="10.7" fill="#2a3650"/>
<rect x="25.9" y="162" width="0.700" height="0.700" fill="#d99a3c"/>
<rect x="14.6" y="149.3" width="3.9" height="14.1" rx="0.8" fill="#46587a"/>
<rect x="18.4" y="149.9" width="3.5" height="13.5" fill="#242f47"/>
<rect x="19.2" y="159.3" width="0.700" height="0.700" fill="#e8b24a"/>
<rect x="16.9" y="154.7" width="0.700" height="0.700" fill="#f0c060"/>
<rect x="13.1" y="162.4" width="10.4" height="2.4" rx="0.800" fill="#f5843a" opacity="0.9"/>
<rect x="28.1" y="147.9" width="4.8" height="15.9" rx="0.8" fill="#50637f"/>
<rect x="32.9" y="148.5" width="2.7" height="15.3" fill="#2a3650"/>
<rect x="29.5" y="152.2" width="0.700" height="0.700" fill="#e8b24a"/>
<rect x="29.8" y="153.5" width="0.700" height="0.700" fill="#e8b24a"/>
<path d="M196 150L200 160" stroke="#b35a2a" stroke-width="4.5" stroke-linecap="round" opacity="0.5" fill="none"/>
<path d="M196 150L200 160" stroke="#f5843a" stroke-width="2" stroke-linecap="round" opacity="1" fill="none"/>
<rect x="93.7" y="146.4" width="3.7" height="18.1" rx="0.8" fill="#35445f"/>
<rect x="97.4" y="147" width="3.8" height="17.5" fill="#1e273a"/>
<rect x="97.3" y="156.9" width="0.700" height="0.700" fill="#f0c060"/>
<rect x="95.6" y="158.8" width="0.700" height="0.700" fill="#d99a3c"/>
<rect x="96" y="159.8" width="0.700" height="0.700" fill="#d99a3c"/>
<rect x="146" y="141.4" width="4" height="23.2" rx="0.8" fill="#35445f"/>
<rect x="150" y="142" width="3.1" height="22.6" fill="#1e273a"/>
<rect x="147.4" y="149.7" width="0.700" height="0.700" fill="#d99a3c"/>
<rect x="150.7" y="150.6" width="0.700" height="0.700" fill="#e8b24a"/>
<rect x="150" y="150.4" width="0.700" height="0.700" fill="#d99a3c"/>
<rect x="17.1" y="151.5" width="3.2" height="13.2" rx="0.8" fill="#35445f"/>
<rect x="20.3" y="152.1" width="2.7" height="12.6" fill="#1e273a"/>
<rect x="20.9" y="156.7" width="0.700" height="0.700" fill="#e8b24a"/>
<rect x="71.8" y="148.8" width="5.3" height="16.1" rx="0.8" fill="#2a3650"/>
<rect x="77.1" y="149.4" width="3.1" height="15.5" fill="#171e2e"/>
<rect x="78.3" y="154.2" width="0.700" height="0.700" fill="#e8b24a"/>
<rect x="79" y="163.2" width="0.700" height="0.700" fill="#f0c060"/>
<rect x="19.2" y="145.3" width="4.6" height="19.7" rx="0.8" fill="#2f3c55"/>
<rect x="23.8" y="145.9" width="3.6" height="19.1" fill="#1a2233"/>
<rect x="21.1" y="150.2" width="0.700" height="0.700" fill="#d99a3c"/>
<rect x="24" y="149.3" width="0.700" height="0.700" fill="#e8b24a"/>
<rect x="22" y="153.4" width="0.700" height="0.700" fill="#e8b24a"/>
<rect x="17.7" y="164.1" width="11.3" height="1.6" rx="0.800" fill="#f5843a" opacity="0.9"/>
<rect x="4.1" y="148.5" width="6.4" height="16.7" rx="0.8" fill="#3e4f6e"/>
<rect x="10.5" y="149.1" width="2.8" height="16.1" fill="#202a40"/>
<rect x="10.2" y="161.7" width="0.700" height="0.700" fill="#f0c060"/>
<rect x="5.7" y="163" width="0.700" height="0.700" fill="#e8b24a"/>
<rect x="5" y="161.6" width="0.700" height="0.700" fill="#e8b24a"/>
<rect x="2.6" y="164.2" width="12.2" height="2.1" rx="0.800" fill="#f5843a" opacity="0.9"/>
<rect x="95.4" y="145.8" width="3.9" height="19.6" rx="0.8" fill="#50637f"/>
<rect x="99.4" y="146.4" width="1.8" height="19" fill="#2a3650"/>
<rect x="97.9" y="159.4" width="0.700" height="0.700" fill="#d99a3c"/>
<rect x="100.1" y="156.2" width="0.700" height="0.700" fill="#d99a3c"/>
<rect x="161.2" y="149.9" width="3.9" height="15.5" rx="0.8" fill="#2a3650"/>
<rect x="165.1" y="150.5" width="2.3" height="14.9" fill="#171e2e"/>
<rect x="165.2" y="160.7" width="0.700" height="0.700" fill="#f0c060"/>
<rect x="162.7" y="159.9" width="0.700" height="0.700" fill="#e8b24a"/>
<rect x="35.7" y="151.3" width="2.8" height="14.2" rx="0.8" fill="#2a3650"/>
<rect x="38.6" y="151.9" width="3.1" height="13.6" fill="#171e2e"/>
<rect x="40.6" y="157.3" width="0.700" height="0.700" fill="#d99a3c"/>
<rect x="16.6" y="147" width="4.2" height="18.6" rx="0.8" fill="#50637f"/>
<rect x="20.8" y="147.6" width="2.9" height="18" fill="#2a3650"/>
<rect x="20.4" y="157.4" width="0.700" height="0.700" fill="#e8b24a"/>
<rect x="22.6" y="159.1" width="0.700" height="0.700" fill="#f0c060"/>
<rect x="85.8" y="148.1" width="3.9" height="17.9" rx="0.8" fill="#50637f"/>
<rect x="89.8" y="148.7" width="4.7" height="17.3" fill="#2a3650"/>
<rect x="92.6" y="164.5" width="0.700" height="0.700" fill="#d99a3c"/>
<rect x="87.7" y="159.2" width="0.700" height="0.700" fill="#e8b24a"/>
<rect x="91.8" y="159" width="0.700" height="0.700" fill="#f0c060"/>
<path d="M153 148L156 162" stroke="#b35a2a" stroke-width="6.1" stroke-linecap="round" opacity="0.5" fill="none"/>
<path d="M153 148L156 162" stroke="#f5843a" stroke-width="3.6" stroke-linecap="round" opacity="1" fill="none"/>
<rect x="170" y="148.8" width="3.3" height="17.4" rx="0.8" fill="#2a3650"/>
<rect x="173.3" y="149.4" width="2.6" height="16.8" fill="#171e2e"/>
<rect x="171.8" y="162.9" width="0.700" height="0.700" fill="#f0c060"/>
<rect x="171.9" y="160.6" width="0.700" height="0.700" fill="#d99a3c"/>
<rect x="185.8" y="153.2" width="2.9" height="13.1" rx="0.8" fill="#46587a"/>
<rect x="188.6" y="153.8" width="3" height="12.5" fill="#242f47"/>
<rect x="187.2" y="155.8" width="0.700" height="0.700" fill="#d99a3c"/>
<rect x="184.3" y="165.3" width="8.9" height="1.6" rx="0.800" fill="#f5843a" opacity="0.9"/>
<rect x="113.3" y="154.8" width="3.5" height="12.1" rx="0.8" fill="#2f3c55"/>
<rect x="116.8" y="155.4" width="2.9" height="11.5" fill="#1a2233"/>
<rect x="114.1" y="159.2" width="0.700" height="0.700" fill="#e8b24a"/>
<rect x="80.9" y="145.4" width="4.3" height="21.6" rx="0.8" fill="#50637f"/>
<rect x="85.2" y="146" width="3.3" height="21" fill="#2a3650"/>
<rect x="82.2" y="159.9" width="0.700" height="0.700" fill="#f0c060"/>
<rect x="85.6" y="148.5" width="0.700" height="0.700" fill="#e8b24a"/>
<rect x="87" y="147.3" width="0.700" height="0.700" fill="#f0c060"/>
<rect x="79.4" y="166" width="10.5" height="2.1" rx="0.800" fill="#f5843a" opacity="0.9"/>
<rect x="15" y="151.1" width="3.7" height="15.9" rx="0.8" fill="#46587a"/>
<rect x="18.7" y="151.7" width="2.9" height="15.3" fill="#242f47"/>
<rect x="17.7" y="157.3" width="0.700" height="0.700" fill="#f0c060"/>
<rect x="20.3" y="162.6" width="0.700" height="0.700" fill="#d99a3c"/>
<rect x="103" y="144.6" width="5.1" height="22.9" rx="0.8" fill="#50637f"/>
<rect x="108.1" y="145.2" width="2.9" height="22.3" fill="#2a3650"/>
<rect x="109" y="156.5" width="0.700" height="0.700" fill="#d99a3c"/>
<rect x="103.8" y="154.3" width="0.700" height="0.700" fill="#d99a3c"/>
<rect x="107.1" y="164.1" width="0.700" height="0.700" fill="#e8b24a"/>
<rect x="107.9" y="148.8" width="0.700" height="0.700" fill="#d99a3c"/>
<rect x="42.3" y="150.5" width="4.3" height="17.1" rx="0.8" fill="#46587a"/>
<rect x="46.6" y="151.1" width="1.9" height="16.5" fill="#242f47"/>
<rect x="43.1" y="165.1" width="0.700" height="0.700" fill="#f0c060"/>
<rect x="47.3" y="157.6" width="0.700" height="0.700" fill="#f0c060"/>
<rect x="98.5" y="151.9" width="4.1" height="15.9" rx="0.8" fill="#2a3650"/>
<rect x="102.6" y="152.5" width="3.9" height="15.3" fill="#171e2e"/>
<rect x="100.8" y="159.5" width="0.700" height="0.700" fill="#e8b24a"/>
<rect x="104.2" y="166.5" width="0.700" height="0.700" fill="#f0c060"/>
<rect x="97" y="166.8" width="11" height="2.1" rx="0.800" fill="#f5843a" opacity="0.9"/>
<rect x="174.9" y="145.8" width="4.8" height="22.1" rx="0.8" fill="#3e4f6e"/>
<rect x="179.7" y="146.4" width="2.7" height="21.5" fill="#202a40"/>
<rect x="177.7" y="153.6" width="0.700" height="0.700" fill="#e8b24a"/>
<rect x="178" y="148.8" width="0.700" height="0.700" fill="#f0c060"/>
<rect x="179.6" y="156.9" width="0.700" height="0.700" fill="#d99a3c"/>
<rect x="173.4" y="166.9" width="10.5" height="1.4" rx="0.800" fill="#f5843a" opacity="0.9"/>
<rect x="185.3" y="153" width="3.8" height="14.9" rx="0.8" fill="#46587a"/>
<rect x="189.1" y="153.6" width="2.9" height="14.3" fill="#242f47"/>
<rect x="190.6" y="164.3" width="0.700" height="0.700" fill="#f0c060"/>
<rect x="188.9" y="159.9" width="0.700" height="0.700" fill="#e8b24a"/>
<rect x="8.2" y="153" width="3.5" height="15.1" rx="0.8" fill="#71839f"/>
<rect x="11.7" y="153.6" width="4.1" height="14.5" fill="#3d4e6c"/>
<rect x="14.3" y="160.9" width="0.700" height="0.700" fill="#d99a3c"/>
<rect x="13.1" y="162.7" width="0.700" height="0.700" fill="#e8b24a"/>
<rect x="6.7" y="167" width="10.6" height="2" rx="0.800" fill="#f5843a" opacity="0.9"/>
<rect x="73.7" y="150.8" width="4" height="17.4" rx="0.8" fill="#71839f"/>
<rect x="77.7" y="151.4" width="4.5" height="16.8" fill="#3d4e6c"/>
<rect x="78.5" y="153.9" width="0.700" height="0.700" fill="#e8b24a"/>
<rect x="74.2" y="161.5" width="0.700" height="0.700" fill="#f0c060"/>
<rect x="75.8" y="160.2" width="0.700" height="0.700" fill="#d99a3c"/>
<rect x="2.4" y="145.4" width="5" height="23" rx="0.8" fill="#35445f"/>
<rect x="7.4" y="146" width="2.7" height="22.4" fill="#1e273a"/>
<rect x="3.9" y="156.6" width="0.700" height="0.700" fill="#f0c060"/>
<rect x="3" y="158.8" width="0.700" height="0.700" fill="#f0c060"/>
<rect x="6.2" y="151.2" width="0.700" height="0.700" fill="#e8b24a"/>
<rect x="41" y="146.6" width="3.5" height="22.7" rx="0.8" fill="#2f3c55"/>
<rect x="44.5" y="147.2" width="2" height="22.1" fill="#1a2233"/>
<rect x="41.5" y="167.2" width="0.700" height="0.700" fill="#d99a3c"/>
<rect x="44.1" y="161.5" width="0.700" height="0.700" fill="#f0c060"/>
<rect x="172.7" y="150" width="4.6" height="19.3" rx="0.8" fill="#3e4f6e"/>
<rect x="177.3" y="150.6" width="2.8" height="18.7" fill="#202a40"/>
<rect x="178.7" y="164.8" width="0.700" height="0.700" fill="#d99a3c"/>
<rect x="176" y="153.3" width="0.700" height="0.700" fill="#e8b24a"/>
<rect x="177" y="158" width="0.700" height="0.700" fill="#d99a3c"/>
<path d="M130 160L140 166" stroke="#b35a2a" stroke-width="5.1" stroke-linecap="round" opacity="0.5" fill="none"/>
<path d="M130 160L140 166" stroke="#f5843a" stroke-width="2.6" stroke-linecap="round" opacity="1" fill="none"/>
<rect x="88.3" y="156" width="5" height="14.3" rx="0.8" fill="#2a3650"/>
<rect x="93.3" y="156.6" width="3.4" height="13.7" fill="#171e2e"/>
<rect x="93.8" y="161.7" width="0.700" height="0.700" fill="#e8b24a"/>
<rect x="88.9" y="169.3" width="0.700" height="0.700" fill="#f0c060"/>
<rect x="96.1" y="149.7" width="5.5" height="21.2" rx="0.8" fill="#3e4f6e"/>
<rect x="101.6" y="150.3" width="3.1" height="20.6" fill="#202a40"/>
<rect x="100.9" y="168.8" width="0.700" height="0.700" fill="#f0c060"/>
<rect x="103.4" y="157.3" width="0.700" height="0.700" fill="#f0c060"/>
<rect x="98.9" y="158" width="0.700" height="0.700" fill="#d99a3c"/>
<rect x="100.8" y="164.5" width="0.700" height="0.700" fill="#e8b24a"/>
<rect x="199.2" y="153" width="4.5" height="18.9" rx="0.8" fill="#2a3650"/>
<rect x="203.6" y="153.6" width="2.4" height="18.3" fill="#171e2e"/>
<rect x="203.6" y="169.8" width="0.700" height="0.700" fill="#f0c060"/>
<rect x="200.3" y="165.4" width="0.700" height="0.700" fill="#e8b24a"/>
<rect x="167.4" y="158.2" width="3.7" height="13.8" rx="0.8" fill="#46587a"/>
<rect x="171.1" y="158.8" width="3.8" height="13.2" fill="#242f47"/>
<rect x="173.5" y="169.6" width="0.700" height="0.700" fill="#e8b24a"/>
<rect x="170.8" y="162" width="0.700" height="0.700" fill="#f0c060"/>
<rect x="158" y="152.1" width="3.4" height="20" rx="0.8" fill="#2a3650"/>
<rect x="161.5" y="152.7" width="2.8" height="19.4" fill="#171e2e"/>
<rect x="161.3" y="163.7" width="0.700" height="0.700" fill="#e8b24a"/>
<rect x="163" y="154.7" width="0.700" height="0.700" fill="#d99a3c"/>
<rect x="143.6" y="152" width="5.3" height="20.3" rx="0.8" fill="#50637f"/>
<rect x="148.9" y="152.6" width="3.4" height="19.7" fill="#2a3650"/>
<rect x="146.1" y="154" width="0.700" height="0.700" fill="#e8b24a"/>
<rect x="150.4" y="160.8" width="0.700" height="0.700" fill="#f0c060"/>
<rect x="148" y="163.1" width="0.700" height="0.700" fill="#f0c060"/>
<rect x="197.4" y="161.3" width="2.9" height="11.1" rx="0.8" fill="#8090a8"/>
<rect x="200.4" y="161.9" width="3.5" height="10.5" fill="#46587a"/>
<rect x="200.4" y="169.7" width="0.700" height="0.700" fill="#f0c060"/>
<rect x="174.5" y="161.6" width="6" height="11.7" rx="0.8" fill="#35445f"/>
<rect x="180.5" y="162.2" width="3.2" height="11.1" fill="#1e273a"/>
<rect x="177.6" y="169.4" width="0.700" height="0.700" fill="#e8b24a"/>
<rect x="176.3" y="164" width="0.700" height="0.700" fill="#d99a3c"/>
<rect x="155.6" y="160.6" width="4.4" height="12.7" rx="0.8" fill="#50637f"/>
<rect x="160" y="161.2" width="3.7" height="12.1" fill="#2a3650"/>
<rect x="157.9" y="168.4" width="0.700" height="0.700" fill="#e8b24a"/>
<rect x="160.7" y="170.8" width="0.700" height="0.700" fill="#e8b24a"/>
<rect x="154.1" y="172.3" width="11.1" height="1.9" rx="0.800" fill="#f5843a" opacity="0.9"/>
<rect x="123.9" y="160" width="4.9" height="13.4" rx="0.8" fill="#35445f"/>
<rect x="128.8" y="160.6" width="2.7" height="12.8" fill="#1e273a"/>
<rect x="129.3" y="163.6" width="0.700" height="0.700" fill="#d99a3c"/>
<rect x="127.9" y="163.3" width="0.700" height="0.700" fill="#f0c060"/>
<rect x="196.3" y="149.3" width="4.4" height="24.2" rx="0.8" fill="#3e4f6e"/>
<rect x="200.7" y="149.9" width="5" height="23.6" fill="#202a40"/>
<rect x="202.8" y="163.3" width="0.700" height="0.700" fill="#f0c060"/>
<rect x="202.9" y="161.5" width="0.700" height="0.700" fill="#f0c060"/>
<rect x="199.6" y="158.4" width="0.700" height="0.700" fill="#f0c060"/>
<rect x="197.2" y="165.2" width="0.700" height="0.700" fill="#e8b24a"/>
<rect x="198.9" y="155" width="0.700" height="0.700" fill="#d99a3c"/>
<rect x="153.2" y="156.9" width="3" height="16.6" rx="0.8" fill="#2a3650"/>
<rect x="156.3" y="157.5" width="2.9" height="16" fill="#171e2e"/>
<rect x="154.9" y="164.1" width="0.700" height="0.700" fill="#d99a3c"/>
<rect x="156.9" y="160" width="0.700" height="0.700" fill="#e8b24a"/>
<rect x="137.2" y="152.1" width="3.5" height="21.5" rx="0.8" fill="#35445f"/>
<rect x="140.7" y="152.7" width="2.2" height="20.9" fill="#1e273a"/>
<rect x="138.4" y="159" width="0.700" height="0.700" fill="#e8b24a"/>
<rect x="141.8" y="172.5" width="0.700" height="0.700" fill="#f0c060"/>
<rect x="113.2" y="161.8" width="4.7" height="11.8" rx="0.8" fill="#35445f"/>
<rect x="118" y="162.4" width="2.2" height="11.2" fill="#1e273a"/>
<rect x="116.8" y="169.1" width="0.700" height="0.700" fill="#f0c060"/>
<rect x="60.3" y="162.6" width="5.8" height="11.2" rx="0.8" fill="#71839f"/>
<rect x="66.1" y="163.2" width="3.6" height="10.6" fill="#3d4e6c"/>
<rect x="64.7" y="165.2" width="0.700" height="0.700" fill="#d99a3c"/>
<rect x="61.1" y="169.4" width="0.700" height="0.700" fill="#f0c060"/>
<rect x="70.7" y="149.7" width="5.2" height="24.2" rx="0.8" fill="#2f3c55"/>
<rect x="76" y="150.3" width="4.5" height="23.6" fill="#1a2233"/>
<rect x="77.5" y="158.5" width="0.700" height="0.700" fill="#e8b24a"/>
<rect x="73.3" y="154" width="0.700" height="0.700" fill="#d99a3c"/>
<rect x="72.6" y="158.8" width="0.700" height="0.700" fill="#d99a3c"/>
<rect x="73.8" y="168.5" width="0.700" height="0.700" fill="#d99a3c"/>
<rect x="75.5" y="153.2" width="0.700" height="0.700" fill="#f0c060"/>
<rect x="69.2" y="172.9" width="12.8" height="2.2" rx="0.800" fill="#f5843a" opacity="0.9"/>
<rect x="59.4" y="158.1" width="4.1" height="15.9" rx="0.8" fill="#35445f"/>
<rect x="63.6" y="158.7" width="3.4" height="15.3" fill="#1e273a"/>
<rect x="63.6" y="167.8" width="0.700" height="0.700" fill="#e8b24a"/>
<rect x="63.9" y="166.7" width="0.700" height="0.700" fill="#d99a3c"/>
<rect x="57.9" y="173" width="10.5" height="1.6" rx="0.800" fill="#f5843a" opacity="0.9"/>
<path d="M24 166L42 170" stroke="#b35a2a" stroke-width="5.5" stroke-linecap="round" opacity="0.5" fill="none"/>
<path d="M24 166L42 170" stroke="#f5843a" stroke-width="3" stroke-linecap="round" opacity="1" fill="none"/>
<rect x="178.4" y="157.3" width="5.1" height="17.1" rx="0.8" fill="#2a3650"/>
<rect x="183.5" y="157.9" width="2.4" height="16.5" fill="#171e2e"/>
<rect x="184.1" y="170.4" width="0.700" height="0.700" fill="#d99a3c"/>
<rect x="181.9" y="169.2" width="0.700" height="0.700" fill="#d99a3c"/>
<rect x="38.6" y="163.3" width="4.8" height="11.4" rx="0.8" fill="#46587a"/>
<rect x="43.4" y="163.9" width="3" height="10.8" fill="#242f47"/>
<rect x="43.1" y="168.8" width="0.700" height="0.700" fill="#e8b24a"/>
<rect x="71.2" y="154.7" width="4.7" height="20.1" rx="0.8" fill="#50637f"/>
<rect x="75.9" y="155.3" width="4.2" height="19.5" fill="#2a3650"/>
<rect x="75" y="166" width="0.700" height="0.700" fill="#e8b24a"/>
<rect x="77.9" y="158.8" width="0.700" height="0.700" fill="#e8b24a"/>
<rect x="72.8" y="164" width="0.700" height="0.700" fill="#d99a3c"/>
<rect x="31.9" y="155.5" width="5.4" height="19.7" rx="0.8" fill="#35445f"/>
<rect x="37.2" y="156.1" width="3.7" height="19.1" fill="#1e273a"/>
<rect x="33.8" y="170.7" width="0.700" height="0.700" fill="#d99a3c"/>
<rect x="35.6" y="167.6" width="0.700" height="0.700" fill="#e8b24a"/>
<rect x="35.4" y="159" width="0.700" height="0.700" fill="#d99a3c"/>
<rect x="81.9" y="160.5" width="6" height="14.7" rx="0.8" fill="#2f3c55"/>
<rect x="88" y="161.1" width="3.9" height="14.1" fill="#1a2233"/>
<rect x="90.3" y="163.3" width="0.700" height="0.700" fill="#d99a3c"/>
<rect x="87.5" y="164.4" width="0.700" height="0.700" fill="#e8b24a"/>
<rect x="85.6" y="163.6" width="0.700" height="0.700" fill="#d99a3c"/>
<rect x="153.9" y="163.4" width="4.8" height="12.1" rx="0.8" fill="#50637f"/>
<rect x="158.7" y="164" width="2.2" height="11.5" fill="#2a3650"/>
<rect x="155.7" y="168.6" width="0.700" height="0.700" fill="#f0c060"/>
<rect x="11.1" y="157.3" width="4.5" height="18.7" rx="0.8" fill="#35445f"/>
<rect x="15.6" y="157.9" width="5.1" height="18.1" fill="#1e273a"/>
<rect x="16.1" y="169.8" width="0.700" height="0.700" fill="#d99a3c"/>
<rect x="13.4" y="164.3" width="0.700" height="0.700" fill="#e8b24a"/>
<rect x="19.6" y="171.6" width="0.700" height="0.700" fill="#d99a3c"/>
<rect x="127.1" y="152.6" width="5.2" height="23.7" rx="0.8" fill="#35445f"/>
<rect x="132.3" y="153.2" width="3.1" height="23.1" fill="#1e273a"/>
<rect x="132.1" y="163.7" width="0.700" height="0.700" fill="#d99a3c"/>
<rect x="130.1" y="169.9" width="0.700" height="0.700" fill="#f0c060"/>
<rect x="134.2" y="163.1" width="0.700" height="0.700" fill="#f0c060"/>
<rect x="130.2" y="161.4" width="0.700" height="0.700" fill="#f0c060"/>
<rect x="125.6" y="175.3" width="11.2" height="1.8" rx="0.800" fill="#f5843a" opacity="0.9"/>
<rect x="162" y="155" width="4.7" height="21.4" rx="0.8" fill="#2a3650"/>
<rect x="166.7" y="155.6" width="2.5" height="20.8" fill="#171e2e"/>
<rect x="163.1" y="168.8" width="0.700" height="0.700" fill="#f0c060"/>
<rect x="166" y="161" width="0.700" height="0.700" fill="#f0c060"/>
<rect x="165.8" y="158.6" width="0.700" height="0.700" fill="#d99a3c"/>
<rect x="10.1" y="158.7" width="4.1" height="17.9" rx="0.8" fill="#46587a"/>
<rect x="14.2" y="159.3" width="3.3" height="17.3" fill="#242f47"/>
<rect x="13.6" y="161.9" width="0.700" height="0.700" fill="#f0c060"/>
<rect x="15.6" y="167.6" width="0.700" height="0.700" fill="#f0c060"/>
<rect x="8.6" y="175.6" width="10.5" height="1.8" rx="0.800" fill="#f5843a" opacity="0.9"/>
<rect x="53" y="152.7" width="4.9" height="24.1" rx="0.8" fill="#35445f"/>
<rect x="57.9" y="153.3" width="2.3" height="23.5" fill="#1e273a"/>
<rect x="57.7" y="164" width="0.700" height="0.700" fill="#d99a3c"/>
<rect x="55.8" y="169.8" width="0.700" height="0.700" fill="#e8b24a"/>
<rect x="55.5" y="164.5" width="0.700" height="0.700" fill="#e8b24a"/>
<rect x="51.5" y="175.7" width="10.2" height="1.5" rx="0.800" fill="#f5843a" opacity="0.9"/>
<rect x="28.4" y="155.9" width="3.3" height="21.3" rx="0.8" fill="#3e4f6e"/>
<rect x="31.8" y="156.5" width="2.7" height="20.7" fill="#202a40"/>
<rect x="30.4" y="171.7" width="0.700" height="0.700" fill="#d99a3c"/>
<rect x="30" y="168.1" width="0.700" height="0.700" fill="#d99a3c"/>
<rect x="133.5" y="155.2" width="3.5" height="22" rx="0.8" fill="#46587a"/>
<rect x="137" y="155.8" width="4.2" height="21.4" fill="#242f47"/>
<rect x="136.1" y="171.5" width="0.700" height="0.700" fill="#d99a3c"/>
<rect x="137.8" y="159" width="0.700" height="0.700" fill="#d99a3c"/>
<rect x="139.7" y="171.4" width="0.700" height="0.700" fill="#d99a3c"/>
<rect x="136.1" y="163.3" width="3.6" height="14" rx="0.8" fill="#2a3650"/>
<rect x="139.7" y="163.9" width="3.3" height="13.4" fill="#171e2e"/>
<rect x="138" y="174" width="0.700" height="0.700" fill="#f0c060"/>
<rect x="140" y="173.6" width="0.700" height="0.700" fill="#d99a3c"/>
<rect x="83.3" y="159.1" width="5.3" height="18.4" rx="0.8" fill="#46587a"/>
<rect x="88.6" y="159.7" width="3.4" height="17.8" fill="#242f47"/>
<rect x="85.9" y="167.5" width="0.700" height="0.700" fill="#f0c060"/>
<rect x="90.3" y="166.7" width="0.700" height="0.700" fill="#d99a3c"/>
<rect x="89.9" y="161.4" width="0.700" height="0.700" fill="#f0c060"/>
<rect x="202.3" y="157.8" width="4.3" height="19.8" rx="0.8" fill="#35445f"/>
<rect x="206.6" y="158.4" width="4.6" height="19.2" fill="#1e273a"/>
<rect x="204.6" y="175.1" width="0.700" height="0.700" fill="#d99a3c"/>
<rect x="204.6" y="167.9" width="0.700" height="0.700" fill="#d99a3c"/>
<rect x="205.2" y="176.5" width="0.700" height="0.700" fill="#f0c060"/>
<rect x="78.4" y="157.4" width="3.8" height="20.3" rx="0.8" fill="#2f3c55"/>
<rect x="82.2" y="158" width="3.7" height="19.7" fill="#1a2233"/>
<rect x="82.3" y="169.2" width="0.700" height="0.700" fill="#d99a3c"/>
<rect x="83.8" y="167.2" width="0.700" height="0.700" fill="#d99a3c"/>
<rect x="80.6" y="174.7" width="0.700" height="0.700" fill="#e8b24a"/>
<rect x="76.9" y="176.8" width="10.5" height="1.7" rx="0.800" fill="#f5843a" opacity="0.9"/>
<rect x="163.9" y="160.7" width="6" height="17.2" rx="0.8" fill="#2a3650"/>
<rect x="170" y="161.3" width="2.7" height="16.6" fill="#171e2e"/>
<rect x="165.7" y="162.9" width="0.700" height="0.700" fill="#d99a3c"/>
<rect x="170.2" y="166.7" width="0.700" height="0.700" fill="#e8b24a"/>
<rect x="169.9" y="165.1" width="0.700" height="0.700" fill="#f0c060"/>
<rect x="43.9" y="156" width="6" height="22.3" rx="0.8" fill="#35445f"/>
<rect x="49.9" y="156.6" width="2.8" height="21.7" fill="#1e273a"/>
<rect x="45.9" y="170.4" width="0.700" height="0.700" fill="#f0c060"/>
<rect x="47.7" y="166" width="0.700" height="0.700" fill="#d99a3c"/>
<rect x="46" y="167.4" width="0.700" height="0.700" fill="#d99a3c"/>
<rect x="48.2" y="172.7" width="0.700" height="0.700" fill="#d99a3c"/>
<rect x="168.8" y="153.8" width="4.3" height="24.9" rx="0.8" fill="#46587a"/>
<rect x="173" y="154.4" width="4.6" height="24.3" fill="#242f47"/>
<rect x="174.6" y="166.5" width="0.700" height="0.700" fill="#d99a3c"/>
<rect x="176.6" y="177" width="0.700" height="0.700" fill="#e8b24a"/>
<rect x="171.9" y="160.3" width="0.700" height="0.700" fill="#d99a3c"/>
<rect x="174.9" y="167.9" width="0.700" height="0.700" fill="#d99a3c"/>
<rect x="57.4" y="162.1" width="3.3" height="17.4" rx="0.8" fill="#2a3650"/>
<rect x="60.7" y="162.7" width="2.8" height="16.8" fill="#171e2e"/>
<rect x="60.7" y="171.2" width="0.700" height="0.700" fill="#d99a3c"/>
<rect x="60.7" y="177.4" width="0.700" height="0.700" fill="#d99a3c"/>
<rect x="2.3" y="164.4" width="5.2" height="15.7" rx="0.8" fill="#2f3c55"/>
<rect x="7.5" y="165" width="2.7" height="15.1" fill="#1a2233"/>
<rect x="3.6" y="169.8" width="0.700" height="0.700" fill="#e8b24a"/>
<rect x="6.1" y="176.8" width="0.700" height="0.700" fill="#f0c060"/>
<rect x="65.6" y="157.7" width="4.8" height="22.7" rx="0.8" fill="#71839f"/>
<rect x="70.4" y="158.3" width="4.7" height="22.1" fill="#3d4e6c"/>
<rect x="67.2" y="170.4" width="0.700" height="0.700" fill="#e8b24a"/>
<rect x="69.9" y="175.6" width="0.700" height="0.700" fill="#d99a3c"/>
<rect x="68.7" y="160.3" width="0.700" height="0.700" fill="#d99a3c"/>
<rect x="66.6" y="162.7" width="0.700" height="0.700" fill="#f0c060"/>
<rect x="148" y="163.1" width="4.8" height="17.6" rx="0.8" fill="#35445f"/>
<rect x="152.8" y="163.7" width="2.4" height="17" fill="#1e273a"/>
<rect x="151" y="169.8" width="0.700" height="0.700" fill="#f0c060"/>
<rect x="151.1" y="166.1" width="0.700" height="0.700" fill="#f0c060"/>
<rect x="131" y="167.1" width="5.5" height="13.9" rx="0.8" fill="#2f3c55"/>
<rect x="136.5" y="167.7" width="2.7" height="13.3" fill="#1a2233"/>
<rect x="133.3" y="178.7" width="0.700" height="0.700" fill="#f0c060"/>
<rect x="133.3" y="170.9" width="0.700" height="0.700" fill="#e8b24a"/>
<rect x="179.5" y="167.7" width="4.3" height="13.3" rx="0.8" fill="#8090a8"/>
<rect x="183.8" y="168.3" width="3.7" height="12.7" fill="#46587a"/>
<rect x="182.4" y="171.3" width="0.700" height="0.700" fill="#f0c060"/>
<rect x="182.5" y="173.3" width="0.700" height="0.700" fill="#f0c060"/>
<rect x="178" y="180" width="11" height="2.3" rx="0.800" fill="#f5843a" opacity="0.9"/>
<rect x="198.2" y="161.5" width="3.5" height="19.5" rx="0.8" fill="#35445f"/>
<rect x="201.7" y="162.1" width="2.5" height="18.9" fill="#1e273a"/>
<rect x="201.6" y="166.5" width="0.700" height="0.700" fill="#d99a3c"/>
<rect x="201.1" y="172.2" width="0.700" height="0.700" fill="#d99a3c"/>
<rect x="103.3" y="164.6" width="5.1" height="16.8" rx="0.8" fill="#46587a"/>
<rect x="108.5" y="165.2" width="3" height="16.2" fill="#242f47"/>
<rect x="105.2" y="170.7" width="0.700" height="0.700" fill="#d99a3c"/>
<rect x="105.6" y="178.9" width="0.700" height="0.700" fill="#e8b24a"/>
<rect x="105.3" y="173.9" width="0.700" height="0.700" fill="#d99a3c"/>
<rect x="156.8" y="159.1" width="6" height="22.6" rx="0.8" fill="#50637f"/>
<rect x="162.8" y="159.7" width="3.5" height="22" fill="#2a3650"/>
<rect x="159.2" y="168.5" width="0.700" height="0.700" fill="#f0c060"/>
<rect x="164" y="168.7" width="0.700" height="0.700" fill="#e8b24a"/>
<rect x="164.8" y="165.1" width="0.700" height="0.700" fill="#f0c060"/>
<rect x="157.9" y="164" width="0.700" height="0.700" fill="#d99a3c"/>
<rect x="120.9" y="166.5" width="5.4" height="15.4" rx="0.8" fill="#2a3650"/>
<rect x="126.4" y="167.1" width="4.5" height="14.8" fill="#171e2e"/>
<rect x="129.4" y="179.2" width="0.700" height="0.700" fill="#d99a3c"/>
<rect x="128.6" y="174.6" width="0.700" height="0.700" fill="#f0c060"/>
<rect x="126.2" y="171.8" width="0.700" height="0.700" fill="#e8b24a"/>
<rect x="172.2" y="168.3" width="3.8" height="13.6" rx="0.8" fill="#46587a"/>
<rect x="176" y="168.9" width="2.4" height="13" fill="#242f47"/>
<rect x="177" y="177.7" width="0.700" height="0.700" fill="#e8b24a"/>
<rect x="12.4" y="166.5" width="3.8" height="15.5" rx="0.8" fill="#2f3c55"/>
<rect x="16.2" y="167.1" width="3" height="14.9" fill="#1a2233"/>
<rect x="14.5" y="174.8" width="0.700" height="0.700" fill="#f0c060"/>
<rect x="15.2" y="175.2" width="0.700" height="0.700" fill="#f0c060"/>
<rect x="54.4" y="158.3" width="3" height="24" rx="0.8" fill="#46587a"/>
<rect x="57.4" y="158.9" width="2.9" height="23.4" fill="#242f47"/>
<rect x="58" y="163.7" width="0.700" height="0.700" fill="#d99a3c"/>
<rect x="56.6" y="165.1" width="0.700" height="0.700" fill="#e8b24a"/>
<rect x="56.1" y="167.6" width="0.700" height="0.700" fill="#d99a3c"/>
<rect x="174.5" y="160.6" width="6.2" height="21.8" rx="0.8" fill="#2a3650"/>
<rect x="180.7" y="161.2" width="3.6" height="21.2" fill="#171e2e"/>
<rect x="176" y="171.9" width="0.700" height="0.700" fill="#f0c060"/>
<rect x="176" y="178.3" width="0.700" height="0.700" fill="#e8b24a"/>
<rect x="181.3" y="166.8" width="0.700" height="0.700" fill="#e8b24a"/>
<rect x="181.4" y="173.7" width="0.700" height="0.700" fill="#d99a3c"/>
<rect x="173" y="181.4" width="12.8" height="1.9" rx="0.800" fill="#f5843a" opacity="0.9"/>
<rect x="62.1" y="165" width="4.4" height="17.7" rx="0.8" fill="#3e4f6e"/>
<rect x="66.5" y="165.6" width="2.9" height="17.1" fill="#202a40"/>
<rect x="63.5" y="179.5" width="0.700" height="0.700" fill="#f0c060"/>
<rect x="63.2" y="170.6" width="0.700" height="0.700" fill="#d99a3c"/>
<rect x="60.6" y="181.7" width="10.3" height="2.1" rx="0.800" fill="#f5843a" opacity="0.9"/>
<rect x="105.4" y="162.5" width="4.1" height="20.3" rx="0.8" fill="#2f3c55"/>
<rect x="109.5" y="163.1" width="1.8" height="19.7" fill="#1a2233"/>
<rect x="106.9" y="180.4" width="0.700" height="0.700" fill="#e8b24a"/>
<rect x="106.3" y="164.5" width="0.700" height="0.700" fill="#d99a3c"/>
<rect x="70.4" y="165.3" width="4.3" height="17.7" rx="0.8" fill="#2a3650"/>
<rect x="74.8" y="165.9" width="4.7" height="17.1" fill="#171e2e"/>
<rect x="74.7" y="178.8" width="0.700" height="0.700" fill="#d99a3c"/>
<rect x="72" y="178.1" width="0.700" height="0.700" fill="#f0c060"/>
<rect x="76.9" y="170.6" width="0.700" height="0.700" fill="#d99a3c"/>
<rect x="57.3" y="163.3" width="6.3" height="20.1" rx="0.8" fill="#50637f"/>
<rect x="63.6" y="163.9" width="2.8" height="19.5" fill="#2a3650"/>
<rect x="64.3" y="178.5" width="0.700" height="0.700" fill="#f0c060"/>
<rect x="63.3" y="179.2" width="0.700" height="0.700" fill="#d99a3c"/>
<rect x="59.1" y="168.8" width="0.700" height="0.700" fill="#d99a3c"/>
<rect x="61.3" y="167.3" width="0.700" height="0.700" fill="#e8b24a"/>
<rect x="111.4" y="166" width="5.9" height="17.6" rx="0.8" fill="#46587a"/>
<rect x="117.3" y="166.6" width="2.6" height="17" fill="#242f47"/>
<rect x="115.9" y="176.5" width="0.700" height="0.700" fill="#e8b24a"/>
<rect x="112.7" y="182" width="0.700" height="0.700" fill="#e8b24a"/>
<rect x="112.8" y="180.5" width="0.700" height="0.700" fill="#f0c060"/>
<rect x="1.7" y="169" width="4.5" height="14.9" rx="0.8" fill="#46587a"/>
<rect x="6.2" y="169.6" width="2.1" height="14.3" fill="#242f47"/>
<rect x="5.7" y="181.2" width="0.700" height="0.700" fill="#d99a3c"/>
<rect x="4.7" y="181.2" width="0.700" height="0.700" fill="#f0c060"/>
<rect x="0.2" y="182.9" width="9.6" height="1.2" rx="0.800" fill="#f5843a" opacity="0.9"/>
<path d="M208 170L210 180" stroke="#b35a2a" stroke-width="4.5" stroke-linecap="round" opacity="0.5" fill="none"/>
<path d="M208 170L210 180" stroke="#f5843a" stroke-width="2" stroke-linecap="round" opacity="1" fill="none"/>
<rect x="209.6" y="169.7" width="3.3" height="14.7" rx="0.8" fill="#50637f"/>
<rect x="212.9" y="170.3" width="2.8" height="14.1" fill="#2a3650"/>
<rect x="213.9" y="178.6" width="0.700" height="0.700" fill="#f0c060"/>
<rect x="212.7" y="174.1" width="0.700" height="0.700" fill="#f0c060"/>
<rect x="208.1" y="183.4" width="9.2" height="1.4" rx="0.800" fill="#f5843a" opacity="0.9"/>
<rect x="201.3" y="159" width="4.5" height="25.8" rx="0.8" fill="#3e4f6e"/>
<rect x="205.7" y="159.6" width="5.1" height="25.2" fill="#202a40"/>
<rect x="207.2" y="170.6" width="0.700" height="0.700" fill="#e8b24a"/>
<rect x="202.5" y="177.2" width="0.700" height="0.700" fill="#e8b24a"/>
<rect x="206.8" y="167.3" width="0.700" height="0.700" fill="#f0c060"/>
<rect x="202.5" y="179.2" width="0.700" height="0.700" fill="#f0c060"/>
<rect x="209" y="167" width="0.700" height="0.700" fill="#d99a3c"/>
<rect x="14.2" y="163.6" width="6.4" height="21.9" rx="0.8" fill="#35445f"/>
<rect x="20.6" y="164.2" width="2.8" height="21.3" fill="#1e273a"/>
<rect x="20.2" y="176.6" width="0.700" height="0.700" fill="#e8b24a"/>
<rect x="15.7" y="184.2" width="0.700" height="0.700" fill="#d99a3c"/>
<rect x="21.7" y="177.3" width="0.700" height="0.700" fill="#e8b24a"/>
<rect x="15.4" y="176.5" width="0.700" height="0.700" fill="#f0c060"/>
<rect x="198.1" y="163.2" width="5" height="22.8" rx="0.8" fill="#3e4f6e"/>
<rect x="203.1" y="163.8" width="2.9" height="22.2" fill="#202a40"/>
<rect x="203.7" y="176.3" width="0.700" height="0.700" fill="#d99a3c"/>
<rect x="199.9" y="172.5" width="0.700" height="0.700" fill="#f0c060"/>
<rect x="198.9" y="178.1" width="0.700" height="0.700" fill="#e8b24a"/>
<rect x="198.8" y="169.6" width="0.700" height="0.700" fill="#d99a3c"/>
<rect x="196.6" y="185" width="10.9" height="2.3" rx="0.800" fill="#f5843a" opacity="0.9"/>
<rect x="34.9" y="163.4" width="5.8" height="22.6" rx="0.8" fill="#2a3650"/>
<rect x="40.7" y="164" width="4" height="22" fill="#171e2e"/>
<rect x="37.9" y="184.3" width="0.700" height="0.700" fill="#f0c060"/>
<rect x="41" y="184.3" width="0.700" height="0.700" fill="#d99a3c"/>
<rect x="36.5" y="180.7" width="0.700" height="0.700" fill="#e8b24a"/>
<rect x="42.9" y="182.4" width="0.700" height="0.700" fill="#d99a3c"/>
<rect x="-1" y="168.9" width="3.3" height="17.2" rx="0.8" fill="#3e4f6e"/>
<rect x="2.3" y="169.5" width="2.7" height="16.6" fill="#202a40"/>
<rect x="1.4" y="181.9" width="0.700" height="0.700" fill="#f0c060"/>
<rect x="-0.2" y="178.2" width="0.700" height="0.700" fill="#e8b24a"/>
<rect x="97.5" y="170.7" width="3.1" height="15.6" rx="0.8" fill="#2a3650"/>
<rect x="100.6" y="171.3" width="3.1" height="15" fill="#171e2e"/>
<rect x="101.8" y="185.1" width="0.700" height="0.700" fill="#f0c060"/>
<rect x="98.5" y="184.4" width="0.700" height="0.700" fill="#d99a3c"/>
<rect x="96" y="185.3" width="9.2" height="2.3" rx="0.800" fill="#f5843a" opacity="0.9"/>
<rect x="106.4" y="162.3" width="4.6" height="24.1" rx="0.8" fill="#46587a"/>
<rect x="111" y="162.9" width="4.4" height="23.5" fill="#242f47"/>
<rect x="108.6" y="167.1" width="0.700" height="0.700" fill="#f0c060"/>
<rect x="111.1" y="180.7" width="0.700" height="0.700" fill="#e8b24a"/>
<rect x="109.3" y="179.1" width="0.700" height="0.700" fill="#d99a3c"/>
<rect x="113" y="166.7" width="0.700" height="0.700" fill="#d99a3c"/>
<rect x="101.2" y="174.2" width="5" height="12.2" rx="0.8" fill="#2a3650"/>
<rect x="106.2" y="174.8" width="2.9" height="11.6" fill="#171e2e"/>
<rect x="107.2" y="179.7" width="0.700" height="0.700" fill="#f0c060"/>
<rect x="102.5" y="183.3" width="0.700" height="0.700" fill="#e8b24a"/>
<rect x="99.7" y="185.4" width="10.9" height="1.7" rx="0.800" fill="#f5843a" opacity="0.9"/>
<rect x="9.4" y="164.3" width="3.7" height="22.3" rx="0.8" fill="#2a3650"/>
<rect x="13.1" y="164.9" width="3.3" height="21.7" fill="#171e2e"/>
<rect x="15.1" y="166.8" width="0.700" height="0.700" fill="#f0c060"/>
<rect x="14.4" y="180.6" width="0.700" height="0.700" fill="#e8b24a"/>
<rect x="14.4" y="185.4" width="0.700" height="0.700" fill="#d99a3c"/>
<path d="M47 176L60 183" stroke="#b35a2a" stroke-width="5.3" stroke-linecap="round" opacity="0.5" fill="none"/>
<path d="M47 176L60 183" stroke="#f5843a" stroke-width="2.8" stroke-linecap="round" opacity="1" fill="none"/>
<rect x="174.3" y="167.3" width="5" height="20.6" rx="0.8" fill="#35445f"/>
<rect x="179.2" y="167.9" width="5.5" height="20" fill="#1e273a"/>
<rect x="176.8" y="182.9" width="0.700" height="0.700" fill="#d99a3c"/>
<rect x="178.9" y="182.5" width="0.700" height="0.700" fill="#d99a3c"/>
<rect x="180.4" y="181.6" width="0.700" height="0.700" fill="#e8b24a"/>
<rect x="183" y="175.6" width="0.700" height="0.700" fill="#e8b24a"/>
<rect x="84.3" y="168.7" width="3.9" height="19.4" rx="0.8" fill="#3e4f6e"/>
<rect x="88.1" y="169.3" width="4.7" height="18.8" fill="#202a40"/>
<rect x="90.7" y="186.3" width="0.700" height="0.700" fill="#f0c060"/>
<rect x="89.8" y="172.4" width="0.700" height="0.700" fill="#f0c060"/>
<rect x="87.3" y="179.3" width="0.700" height="0.700" fill="#f0c060"/>
<rect x="134.6" y="162.6" width="3.3" height="25.7" rx="0.8" fill="#2f3c55"/>
<rect x="137.9" y="163.2" width="3.5" height="25.1" fill="#1a2233"/>
<rect x="137.5" y="165.2" width="0.700" height="0.700" fill="#d99a3c"/>
<rect x="139.9" y="177.5" width="0.700" height="0.700" fill="#f0c060"/>
<rect x="137.2" y="179.9" width="0.700" height="0.700" fill="#d99a3c"/>
<rect x="128.9" y="167.8" width="6.2" height="20.5" rx="0.8" fill="#8090a8"/>
<rect x="135.2" y="168.4" width="4.2" height="19.9" fill="#46587a"/>
<rect x="131.9" y="178.6" width="0.700" height="0.700" fill="#f0c060"/>
<rect x="133.1" y="184" width="0.700" height="0.700" fill="#f0c060"/>
<rect x="135.2" y="179.8" width="0.700" height="0.700" fill="#e8b24a"/>
<rect x="137" y="185.1" width="0.700" height="0.700" fill="#e8b24a"/>
<rect x="28" y="166.3" width="4" height="22.2" rx="0.8" fill="#35445f"/>
<rect x="32" y="166.9" width="2.1" height="21.6" fill="#1e273a"/>
<rect x="32.3" y="184.1" width="0.700" height="0.700" fill="#e8b24a"/>
<rect x="31.9" y="168.8" width="0.700" height="0.700" fill="#d99a3c"/>
<rect x="32.5" y="175.4" width="5.6" height="13.3" rx="0.8" fill="#35445f"/>
<rect x="38.1" y="176" width="2.7" height="12.7" fill="#1e273a"/>
<rect x="34.1" y="178.7" width="0.700" height="0.700" fill="#e8b24a"/>
<rect x="36.9" y="177" width="0.700" height="0.700" fill="#f0c060"/>
<rect x="31" y="187.7" width="11.3" height="1.3" rx="0.800" fill="#f5843a" opacity="0.9"/>
<rect x="76" y="165" width="3.2" height="23.9" rx="0.8" fill="#71839f"/>
<rect x="79.2" y="165.6" width="3.5" height="23.3" fill="#3d4e6c"/>
<rect x="79.5" y="186.8" width="0.700" height="0.700" fill="#e8b24a"/>
<rect x="80.9" y="186.6" width="0.700" height="0.700" fill="#d99a3c"/>
<rect x="78.9" y="186" width="0.700" height="0.700" fill="#d99a3c"/>
<rect x="0.5" y="172" width="4.8" height="17.3" rx="0.8" fill="#3e4f6e"/>
<rect x="5.3" y="172.6" width="2.7" height="16.7" fill="#202a40"/>
<rect x="6.5" y="186.9" width="0.700" height="0.700" fill="#e8b24a"/>
<rect x="5.6" y="176.2" width="0.700" height="0.700" fill="#f0c060"/>
<rect x="-1" y="188.3" width="10.4" height="1.5" rx="0.800" fill="#f5843a" opacity="0.9"/>
<rect x="163.7" y="166.1" width="4" height="23.3" rx="0.8" fill="#50637f"/>
<rect x="167.7" y="166.7" width="3.2" height="22.7" fill="#2a3650"/>
<rect x="164.8" y="167.9" width="0.700" height="0.700" fill="#f0c060"/>
<rect x="165.9" y="181.2" width="0.700" height="0.700" fill="#d99a3c"/>
<rect x="166.8" y="176.6" width="0.700" height="0.700" fill="#f0c060"/>
<rect x="162.2" y="188.4" width="10.1" height="1.5" rx="0.800" fill="#f5843a" opacity="0.9"/>
<rect x="120.3" y="168.4" width="4.2" height="21.2" rx="0.8" fill="#3e4f6e"/>
<rect x="124.5" y="169" width="4.8" height="20.6" fill="#202a40"/>
<rect x="122.7" y="185.5" width="0.700" height="0.700" fill="#f0c060"/>
<rect x="123.4" y="188.2" width="0.700" height="0.700" fill="#d99a3c"/>
<rect x="124.7" y="175.3" width="0.700" height="0.700" fill="#f0c060"/>
<rect x="126.9" y="185.8" width="0.700" height="0.700" fill="#d99a3c"/>
<rect x="130.6" y="168.3" width="4.2" height="21.7" rx="0.8" fill="#8090a8"/>
<rect x="134.7" y="168.9" width="2.5" height="21.1" fill="#46587a"/>
<rect x="132.8" y="187.6" width="0.700" height="0.700" fill="#e8b24a"/>
<rect x="133.8" y="170.7" width="0.700" height="0.700" fill="#d99a3c"/>
<rect x="131.4" y="173" width="0.700" height="0.700" fill="#d99a3c"/>
<rect x="145.5" y="167.1" width="4.2" height="23" rx="0.8" fill="#2a3650"/>
<rect x="149.7" y="167.7" width="2.7" height="22.4" fill="#171e2e"/>
<rect x="150.4" y="173" width="0.700" height="0.700" fill="#e8b24a"/>
<rect x="150.7" y="172.2" width="0.700" height="0.700" fill="#e8b24a"/>
<rect x="151.2" y="170.9" width="0.700" height="0.700" fill="#e8b24a"/>
<rect x="-1.7" y="178.1" width="4.4" height="12.2" rx="0.8" fill="#8090a8"/>
<rect x="2.7" y="178.7" width="2.3" height="11.6" fill="#46587a"/>
<rect x="2.7" y="181.2" width="0.700" height="0.700" fill="#e8b24a"/>
<rect x="-3.2" y="189.2" width="9.8" height="2" rx="0.800" fill="#f5843a" opacity="0.9"/>
<rect x="-3.3" y="174.4" width="4" height="16.5" rx="0.8" fill="#35445f"/>
<rect x="0.6" y="175" width="3.5" height="15.9" fill="#1e273a"/>
<rect x="-1" y="187.7" width="0.700" height="0.700" fill="#e8b24a"/>
<rect x="-0.8" y="179.1" width="0.700" height="0.700" fill="#e8b24a"/>
<rect x="171.4" y="177.9" width="4.8" height="13.1" rx="0.8" fill="#46587a"/>
<rect x="176.2" y="178.5" width="3.9" height="12.5" fill="#242f47"/>
<rect x="172.2" y="186.7" width="0.700" height="0.700" fill="#d99a3c"/>
<rect x="173.3" y="179.9" width="0.700" height="0.700" fill="#f0c060"/>
<rect x="160.8" y="172.7" width="5.1" height="18.9" rx="0.8" fill="#46587a"/>
<rect x="165.9" y="173.3" width="5.6" height="18.3" fill="#242f47"/>
<rect x="165.7" y="181.2" width="0.700" height="0.700" fill="#d99a3c"/>
<rect x="170.1" y="186.6" width="0.700" height="0.700" fill="#f0c060"/>
<rect x="164" y="182.4" width="0.700" height="0.700" fill="#e8b24a"/>
<rect x="165" y="180.1" width="0.700" height="0.700" fill="#d99a3c"/>
<rect x="121.6" y="169.9" width="5.2" height="22" rx="0.8" fill="#8090a8"/>
<rect x="126.8" y="170.5" width="5.1" height="21.4" fill="#46587a"/>
<rect x="126.3" y="190.7" width="0.700" height="0.700" fill="#d99a3c"/>
<rect x="124.8" y="172.8" width="0.700" height="0.700" fill="#d99a3c"/>
<rect x="128.6" y="184.6" width="0.700" height="0.700" fill="#d99a3c"/>
<rect x="128.8" y="178.7" width="0.700" height="0.700" fill="#d99a3c"/>
<rect x="130.4" y="184.5" width="0.700" height="0.700" fill="#d99a3c"/>
<rect x="51.1" y="174.1" width="5.8" height="18.6" rx="0.8" fill="#2a3650"/>
<rect x="57" y="174.7" width="4.3" height="18" fill="#171e2e"/>
<rect x="59.9" y="188.7" width="0.700" height="0.700" fill="#d99a3c"/>
<rect x="59" y="187.8" width="0.700" height="0.700" fill="#e8b24a"/>
<rect x="56.6" y="186.3" width="0.700" height="0.700" fill="#e8b24a"/>
<rect x="58.9" y="183.7" width="0.700" height="0.700" fill="#e8b24a"/>
<rect x="103.5" y="179.6" width="4.4" height="13.3" rx="0.8" fill="#35445f"/>
<rect x="107.9" y="180.2" width="5" height="12.7" fill="#1e273a"/>
<rect x="110.8" y="182.3" width="0.700" height="0.700" fill="#e8b24a"/>
<rect x="109.1" y="189.4" width="0.700" height="0.700" fill="#e8b24a"/>
<rect x="126.2" y="181" width="5.1" height="12.2" rx="0.8" fill="#2a3650"/>
<rect x="131.3" y="181.6" width="2.7" height="11.6" fill="#171e2e"/>
<rect x="131.6" y="183.9" width="0.700" height="0.700" fill="#e8b24a"/>
<rect x="127.3" y="186.8" width="0.700" height="0.700" fill="#e8b24a"/>
<rect x="149.6" y="180.8" width="4.2" height="12.6" rx="0.8" fill="#2f3c55"/>
<rect x="153.8" y="181.4" width="3" height="12" fill="#1a2233"/>
<rect x="155" y="189.8" width="0.700" height="0.700" fill="#f0c060"/>
<rect x="148.1" y="192.3" width="10.1" height="1.8" rx="0.800" fill="#f5843a" opacity="0.9"/>
<rect x="113.6" y="177.5" width="3.9" height="16.3" rx="0.8" fill="#2a3650"/>
<rect x="117.4" y="178.1" width="3" height="15.7" fill="#171e2e"/>
<rect x="117.4" y="184.6" width="0.700" height="0.700" fill="#d99a3c"/>
<rect x="115.8" y="179.4" width="0.700" height="0.700" fill="#f0c060"/>
<rect x="4" y="174.4" width="6" height="19.4" rx="0.8" fill="#2a3650"/>
<rect x="10" y="175" width="3.2" height="18.8" fill="#171e2e"/>
<rect x="8.1" y="189.1" width="0.700" height="0.700" fill="#f0c060"/>
<rect x="4.8" y="180.4" width="0.700" height="0.700" fill="#f0c060"/>
<rect x="6.4" y="182.2" width="0.700" height="0.700" fill="#f0c060"/>
<rect x="141.2" y="174.4" width="5.6" height="19.4" rx="0.8" fill="#3e4f6e"/>
<rect x="146.8" y="175" width="4.3" height="18.8" fill="#202a40"/>
<rect x="147" y="190.8" width="0.700" height="0.700" fill="#e8b24a"/>
<rect x="146.7" y="178.6" width="0.700" height="0.700" fill="#d99a3c"/>
<rect x="147.2" y="188.9" width="0.700" height="0.700" fill="#f0c060"/>
<rect x="144.1" y="183.5" width="0.700" height="0.700" fill="#e8b24a"/>
<path d="M186 166L188 190" stroke="#b35a2a" stroke-width="5.1" stroke-linecap="round" opacity="0.5" fill="none"/>
<path d="M186 166L188 190" stroke="#f5843a" stroke-width="2.6" stroke-linecap="round" opacity="1" fill="none"/>
<rect x="140.5" y="176.8" width="6.5" height="17.3" rx="0.8" fill="#35445f"/>
<rect x="147" y="177.4" width="3.8" height="16.7" fill="#1e273a"/>
<rect x="149.1" y="180.5" width="0.700" height="0.700" fill="#f0c060"/>
<rect x="149.4" y="189.7" width="0.700" height="0.700" fill="#d99a3c"/>
<rect x="144.7" y="192.5" width="0.700" height="0.700" fill="#f0c060"/>
<rect x="139" y="193.2" width="13.3" height="1.4" rx="0.800" fill="#f5843a" opacity="0.9"/>
<rect x="18.6" y="175" width="6" height="19.2" rx="0.8" fill="#46587a"/>
<rect x="24.7" y="175.6" width="2.6" height="18.6" fill="#242f47"/>
<rect x="24.4" y="181.2" width="0.700" height="0.700" fill="#d99a3c"/>
<rect x="22.1" y="182.2" width="0.700" height="0.700" fill="#f0c060"/>
<rect x="25.7" y="186" width="0.700" height="0.700" fill="#f0c060"/>
<rect x="-4.6" y="175.6" width="6" height="18.6" rx="0.8" fill="#8090a8"/>
<rect x="1.4" y="176.2" width="4.6" height="18" fill="#46587a"/>
<rect x="-3.8" y="189.3" width="0.700" height="0.700" fill="#d99a3c"/>
<rect x="-2.8" y="183.9" width="0.700" height="0.700" fill="#f0c060"/>
<rect x="4.8" y="188.9" width="0.700" height="0.700" fill="#e8b24a"/>
<rect x="-0.4" y="182.5" width="0.700" height="0.700" fill="#f0c060"/>
<rect x="27.2" y="173.6" width="3.6" height="20.8" rx="0.8" fill="#50637f"/>
<rect x="30.8" y="174.2" width="2.6" height="20.2" fill="#2a3650"/>
<rect x="29.9" y="182.2" width="0.700" height="0.700" fill="#e8b24a"/>
<rect x="28.1" y="180.9" width="0.700" height="0.700" fill="#e8b24a"/>
<rect x="87.9" y="172.4" width="5.1" height="22.2" rx="0.8" fill="#2f3c55"/>
<rect x="93" y="173" width="4.9" height="21.6" fill="#1a2233"/>
<rect x="90.2" y="177.6" width="0.700" height="0.700" fill="#f0c060"/>
<rect x="91.8" y="174.5" width="0.700" height="0.700" fill="#f0c060"/>
<rect x="92.8" y="186.4" width="0.700" height="0.700" fill="#d99a3c"/>
<rect x="91.4" y="181.2" width="0.700" height="0.700" fill="#e8b24a"/>
<rect x="177.2" y="177" width="3.8" height="17.9" rx="0.8" fill="#2f3c55"/>
<rect x="181.1" y="177.6" width="3.6" height="17.3" fill="#1a2233"/>
<rect x="179.4" y="193.6" width="0.700" height="0.700" fill="#e8b24a"/>
<rect x="182.3" y="185" width="0.700" height="0.700" fill="#e8b24a"/>
<rect x="175.7" y="194" width="10.4" height="1.8" rx="0.800" fill="#f5843a" opacity="0.9"/>
<rect x="111.6" y="175.2" width="7.4" height="20.4" rx="0.8" fill="#2a3650"/>
<rect x="119" y="175.8" width="3.2" height="19.8" fill="#171e2e"/>
<rect x="118.5" y="190.1" width="0.700" height="0.700" fill="#e8b24a"/>
<rect x="117.9" y="182.7" width="0.700" height="0.700" fill="#f0c060"/>
<rect x="118.1" y="192" width="0.700" height="0.700" fill="#f0c060"/>
<rect x="118.3" y="190.9" width="0.700" height="0.700" fill="#e8b24a"/>
<rect x="71.8" y="175.4" width="4.8" height="20.2" rx="0.8" fill="#46587a"/>
<rect x="76.6" y="176" width="3.5" height="19.6" fill="#242f47"/>
<rect x="76.4" y="190.4" width="0.700" height="0.700" fill="#d99a3c"/>
<rect x="78.9" y="189.3" width="0.700" height="0.700" fill="#e8b24a"/>
<rect x="75" y="193.8" width="0.700" height="0.700" fill="#f0c060"/>
<rect x="207" y="171.9" width="6.9" height="23.9" rx="0.8" fill="#3e4f6e"/>
<rect x="213.8" y="172.5" width="3.2" height="23.3" fill="#202a40"/>
<rect x="211" y="177.4" width="0.700" height="0.700" fill="#e8b24a"/>
<rect x="207.7" y="188.6" width="0.700" height="0.700" fill="#f0c060"/>
<rect x="209.6" y="193.4" width="0.700" height="0.700" fill="#f0c060"/>
<rect x="208.4" y="184.4" width="0.700" height="0.700" fill="#e8b24a"/>
<rect x="212.1" y="187.3" width="0.700" height="0.700" fill="#e8b24a"/>
<rect x="78.2" y="181.1" width="5.8" height="14.8" rx="0.8" fill="#46587a"/>
<rect x="84" y="181.7" width="5.1" height="14.2" fill="#242f47"/>
<rect x="83.8" y="194" width="0.700" height="0.700" fill="#f0c060"/>
<rect x="82.9" y="193.4" width="0.700" height="0.700" fill="#e8b24a"/>
<rect x="87.5" y="183.6" width="0.700" height="0.700" fill="#d99a3c"/>
<rect x="29.2" y="175.3" width="3.6" height="20.9" rx="0.8" fill="#46587a"/>
<rect x="32.9" y="175.9" width="3.6" height="20.3" fill="#242f47"/>
<rect x="30" y="180.3" width="0.700" height="0.700" fill="#f0c060"/>
<rect x="32.8" y="179.2" width="0.700" height="0.700" fill="#e8b24a"/>
<rect x="30.9" y="188.8" width="0.700" height="0.700" fill="#f0c060"/>
<rect x="27.7" y="195.2" width="10.2" height="1.8" rx="0.800" fill="#f5843a" opacity="0.9"/>
<rect x="101.9" y="179" width="6.3" height="17.7" rx="0.8" fill="#35445f"/>
<rect x="108.2" y="179.6" width="3.7" height="17.1" fill="#1e273a"/>
<rect x="108.8" y="182.8" width="0.700" height="0.700" fill="#f0c060"/>
<rect x="110.8" y="183.6" width="0.700" height="0.700" fill="#d99a3c"/>
<rect x="110.8" y="191.8" width="0.700" height="0.700" fill="#f0c060"/>
<rect x="100.4" y="195.6" width="13" height="1.6" rx="0.800" fill="#f5843a" opacity="0.9"/>
<rect x="150" y="171.4" width="5.4" height="25.9" rx="0.8" fill="#3e4f6e"/>
<rect x="155.4" y="172" width="3.6" height="25.3" fill="#202a40"/>
<rect x="152.7" y="186" width="0.700" height="0.700" fill="#f0c060"/>
<rect x="153.3" y="175.5" width="0.700" height="0.700" fill="#e8b24a"/>
<rect x="154.3" y="194.6" width="0.700" height="0.700" fill="#d99a3c"/>
<rect x="157.6" y="189.1" width="0.700" height="0.700" fill="#e8b24a"/>
<rect x="150.9" y="184.5" width="0.700" height="0.700" fill="#f0c060"/>
<rect x="97.7" y="174.2" width="4.2" height="23.2" rx="0.8" fill="#46587a"/>
<rect x="101.9" y="174.8" width="3.9" height="22.6" fill="#242f47"/>
<rect x="104.2" y="192.5" width="0.700" height="0.700" fill="#e8b24a"/>
<rect x="103.4" y="191.5" width="0.700" height="0.700" fill="#d99a3c"/>
<rect x="101.4" y="180.1" width="0.700" height="0.700" fill="#f0c060"/>
<rect x="100.2" y="178.7" width="0.700" height="0.700" fill="#f0c060"/>
<rect x="183.7" y="185.4" width="3.7" height="12.8" rx="0.8" fill="#2a3650"/>
<rect x="187.4" y="186" width="4.2" height="12.2" fill="#171e2e"/>
<rect x="184.9" y="194.7" width="0.700" height="0.700" fill="#f0c060"/>
<rect x="185.6" y="189" width="0.700" height="0.700" fill="#e8b24a"/>
<rect x="79.7" y="181" width="3.3" height="17.4" rx="0.8" fill="#2f3c55"/>
<rect x="83" y="181.6" width="3" height="16.8" fill="#1a2233"/>
<rect x="82.5" y="194.2" width="0.700" height="0.700" fill="#d99a3c"/>
<rect x="84.9" y="185.9" width="0.700" height="0.700" fill="#f0c060"/>
<rect x="180.9" y="185.3" width="3.9" height="13.2" rx="0.8" fill="#50637f"/>
<rect x="184.9" y="185.9" width="4.8" height="12.6" fill="#2a3650"/>
<rect x="187.6" y="193.8" width="0.700" height="0.700" fill="#f0c060"/>
<rect x="182.8" y="190.7" width="0.700" height="0.700" fill="#d99a3c"/>
<rect x="179.4" y="197.5" width="11.7" height="2.1" rx="0.800" fill="#f5843a" opacity="0.9"/>
<rect x="208" y="173.1" width="7" height="26.6" rx="0.8" fill="#2f3c55"/>
<rect x="215" y="173.7" width="3.6" height="26" fill="#1a2233"/>
<rect x="208.6" y="185.5" width="0.700" height="0.700" fill="#f0c060"/>
<rect x="211.3" y="197.8" width="0.700" height="0.700" fill="#f0c060"/>
<rect x="217.3" y="176.2" width="0.700" height="0.700" fill="#d99a3c"/>
<rect x="212.4" y="175.4" width="0.700" height="0.700" fill="#e8b24a"/>
<rect x="215.2" y="193.8" width="0.700" height="0.700" fill="#e8b24a"/>
<rect x="211.1" y="194.6" width="0.700" height="0.700" fill="#e8b24a"/>
<rect x="164.9" y="185.7" width="7.2" height="13.9" rx="0.8" fill="#2a3650"/>
<rect x="172.1" y="186.3" width="3.8" height="13.3" fill="#171e2e"/>
<rect x="174.5" y="193.7" width="0.700" height="0.700" fill="#e8b24a"/>
<rect x="174.2" y="198.5" width="0.700" height="0.700" fill="#d99a3c"/>
<rect x="172.1" y="191.5" width="0.700" height="0.700" fill="#f0c060"/>
<rect x="173.9" y="173.6" width="4.9" height="26.3" rx="0.8" fill="#2f3c55"/>
<rect x="178.8" y="174.2" width="2.2" height="25.7" fill="#1a2233"/>
<rect x="178.1" y="178.6" width="0.700" height="0.700" fill="#f0c060"/>
<rect x="177.1" y="186" width="0.700" height="0.700" fill="#d99a3c"/>
<rect x="176.2" y="184.5" width="0.700" height="0.700" fill="#f0c060"/>
<rect x="178.4" y="183" width="0.700" height="0.700" fill="#f0c060"/>
<rect x="202.3" y="187.2" width="5" height="12.7" rx="0.8" fill="#2f3c55"/>
<rect x="207.4" y="187.8" width="3" height="12.1" fill="#1a2233"/>
<rect x="207.3" y="192.3" width="0.700" height="0.700" fill="#e8b24a"/>
<rect x="205.4" y="192.1" width="0.700" height="0.700" fill="#e8b24a"/>
<path d="M2 182L4 196" stroke="#b35a2a" stroke-width="4.7" stroke-linecap="round" opacity="0.5" fill="none"/>
<path d="M2 182L4 196" stroke="#f5843a" stroke-width="2.2" stroke-linecap="round" opacity="1" fill="none"/>
<rect x="116.3" y="176.3" width="3.6" height="23.8" rx="0.8" fill="#35445f"/>
<rect x="119.8" y="176.9" width="3.1" height="23.2" fill="#1e273a"/>
<rect x="117" y="194.8" width="0.700" height="0.700" fill="#f0c060"/>
<rect x="117.3" y="178" width="0.700" height="0.700" fill="#f0c060"/>
<rect x="117" y="186.1" width="0.700" height="0.700" fill="#f0c060"/>
<rect x="1.4" y="187.7" width="6" height="12.8" rx="0.8" fill="#71839f"/>
<rect x="7.4" y="188.3" width="4.6" height="12.2" fill="#3d4e6c"/>
<rect x="3.8" y="193.5" width="0.700" height="0.700" fill="#e8b24a"/>
<rect x="3.8" y="193.2" width="0.700" height="0.700" fill="#d99a3c"/>
<rect x="2.9" y="189.9" width="0.700" height="0.700" fill="#d99a3c"/>
<rect x="207" y="182.6" width="5.5" height="18" rx="0.8" fill="#3e4f6e"/>
<rect x="212.5" y="183.2" width="4.6" height="17.4" fill="#202a40"/>
<rect x="212.3" y="191.5" width="0.700" height="0.700" fill="#d99a3c"/>
<rect x="208.7" y="189.6" width="0.700" height="0.700" fill="#f0c060"/>
<rect x="211.5" y="199.4" width="0.700" height="0.700" fill="#f0c060"/>
<rect x="213.1" y="199.4" width="0.700" height="0.700" fill="#d99a3c"/>
<rect x="174.3" y="175.7" width="6.8" height="24.9" rx="0.8" fill="#2a3650"/>
<rect x="181.1" y="176.3" width="3.6" height="24.3" fill="#171e2e"/>
<rect x="180.1" y="179" width="0.700" height="0.700" fill="#e8b24a"/>
<rect x="175.5" y="190.4" width="0.700" height="0.700" fill="#f0c060"/>
<rect x="180.7" y="180.9" width="0.700" height="0.700" fill="#f0c060"/>
<rect x="175.6" y="196.4" width="0.700" height="0.700" fill="#d99a3c"/>
<rect x="176" y="182.8" width="0.700" height="0.700" fill="#d99a3c"/>
<rect x="195" y="179.2" width="4.1" height="21.7" rx="0.8" fill="#2f3c55"/>
<rect x="199.1" y="179.8" width="4.2" height="21.1" fill="#1a2233"/>
<rect x="196.8" y="190.9" width="0.700" height="0.700" fill="#e8b24a"/>
<rect x="198.9" y="193.9" width="0.700" height="0.700" fill="#d99a3c"/>
<rect x="196.6" y="197.3" width="0.700" height="0.700" fill="#e8b24a"/>
<rect x="200.4" y="181.7" width="3.3" height="19.3" rx="0.8" fill="#46587a"/>
<rect x="203.7" y="182.3" width="3.6" height="18.7" fill="#242f47"/>
<rect x="203.9" y="186.1" width="0.700" height="0.700" fill="#e8b24a"/>
<rect x="204.9" y="193.5" width="0.700" height="0.700" fill="#f0c060"/>
<rect x="198.9" y="200" width="10" height="1.5" rx="0.800" fill="#f5843a" opacity="0.9"/>
<rect x="42.4" y="179.1" width="3.6" height="22.1" rx="0.8" fill="#50637f"/>
<rect x="46" y="179.7" width="3.3" height="21.5" fill="#2a3650"/>
<rect x="45.6" y="190.8" width="0.700" height="0.700" fill="#d99a3c"/>
<rect x="46.3" y="194.4" width="0.700" height="0.700" fill="#d99a3c"/>
<rect x="48.1" y="186.1" width="0.700" height="0.700" fill="#f0c060"/>
<rect x="122.4" y="180.6" width="5.4" height="21.1" rx="0.8" fill="#2a3650"/>
<rect x="127.8" y="181.2" width="4.1" height="20.5" fill="#171e2e"/>
<rect x="128.7" y="187.1" width="0.700" height="0.700" fill="#e8b24a"/>
<rect x="129" y="200" width="0.700" height="0.700" fill="#d99a3c"/>
<rect x="128.8" y="187.6" width="0.700" height="0.700" fill="#f0c060"/>
<rect x="124.2" y="189.9" width="0.700" height="0.700" fill="#f0c060"/>
<rect x="123.8" y="174.8" width="5.9" height="27.1" rx="0.8" fill="#35445f"/>
<rect x="129.7" y="175.4" width="5.1" height="26.5" fill="#1e273a"/>
<rect x="125.3" y="186.4" width="0.700" height="0.700" fill="#f0c060"/>
<rect x="126.2" y="180.6" width="0.700" height="0.700" fill="#d99a3c"/>
<rect x="132" y="182.4" width="0.700" height="0.700" fill="#d99a3c"/>
<rect x="132.5" y="190.4" width="0.700" height="0.700" fill="#e8b24a"/>
<rect x="130" y="192.4" width="0.700" height="0.700" fill="#e8b24a"/>
<rect x="128.5" y="197.5" width="0.700" height="0.700" fill="#d99a3c"/>
<path d="M88 190L92 198" stroke="#b35a2a" stroke-width="4.3" stroke-linecap="round" opacity="0.5" fill="none"/>
<path d="M88 190L92 198" stroke="#f5843a" stroke-width="1.8" stroke-linecap="round" opacity="1" fill="none"/>
<rect x="142.6" y="181.4" width="5" height="20.7" rx="0.8" fill="#2f3c55"/>
<rect x="147.6" y="182" width="2.9" height="20.1" fill="#1a2233"/>
<rect x="144.7" y="188.6" width="0.700" height="0.700" fill="#d99a3c"/>
<rect x="146.6" y="188.1" width="0.700" height="0.700" fill="#f0c060"/>
<rect x="143.1" y="185.3" width="0.700" height="0.700" fill="#e8b24a"/>
<rect x="13.7" y="185.3" width="5" height="17.1" rx="0.8" fill="#2a3650"/>
<rect x="18.7" y="185.9" width="6" height="16.5" fill="#171e2e"/>
<rect x="16.4" y="191.8" width="0.700" height="0.700" fill="#d99a3c"/>
<rect x="14.7" y="197" width="0.700" height="0.700" fill="#e8b24a"/>
<rect x="14.3" y="188.8" width="0.700" height="0.700" fill="#e8b24a"/>
<rect x="14.8" y="201" width="0.700" height="0.700" fill="#e8b24a"/>
<rect x="190" y="187.3" width="6.4" height="16.2" rx="0.8" fill="#2f3c55"/>
<rect x="196.4" y="187.9" width="4.1" height="15.6" fill="#1a2233"/>
<rect x="194.2" y="200.6" width="0.700" height="0.700" fill="#d99a3c"/>
<rect x="192.7" y="189.8" width="0.700" height="0.700" fill="#e8b24a"/>
<rect x="198.1" y="191.5" width="0.700" height="0.700" fill="#e8b24a"/>
<rect x="188.5" y="202.6" width="13.4" height="2.2" rx="0.800" fill="#f5843a" opacity="0.9"/>
<rect x="157.3" y="180.4" width="3.8" height="23.6" rx="0.8" fill="#2f3c55"/>
<rect x="161.1" y="181" width="3.7" height="23" fill="#1a2233"/>
<rect x="159.2" y="187.3" width="0.700" height="0.700" fill="#f0c060"/>
<rect x="158.1" y="199.6" width="0.700" height="0.700" fill="#d99a3c"/>
<rect x="160.1" y="198.5" width="0.700" height="0.700" fill="#e8b24a"/>
<rect x="128.5" y="186.4" width="4.7" height="17.8" rx="0.8" fill="#3e4f6e"/>
<rect x="133.1" y="187" width="4.6" height="17.2" fill="#202a40"/>
<rect x="134.4" y="200.7" width="0.700" height="0.700" fill="#f0c060"/>
<rect x="134.9" y="188.1" width="0.700" height="0.700" fill="#d99a3c"/>
<rect x="131.2" y="189.7" width="0.700" height="0.700" fill="#d99a3c"/>
<rect x="127" y="203.2" width="12.3" height="2.1" rx="0.800" fill="#f5843a" opacity="0.9"/>
<rect x="196.7" y="183" width="6" height="21.2" rx="0.8" fill="#35445f"/>
<rect x="202.7" y="183.6" width="5.3" height="20.6" fill="#1e273a"/>
<rect x="206.4" y="193.6" width="0.700" height="0.700" fill="#f0c060"/>
<rect x="202.4" y="185.6" width="0.700" height="0.700" fill="#e8b24a"/>
<rect x="206.2" y="187.1" width="0.700" height="0.700" fill="#e8b24a"/>
<rect x="206" y="197.1" width="0.700" height="0.700" fill="#d99a3c"/>
<rect x="205.7" y="193.6" width="0.700" height="0.700" fill="#f0c060"/>
<rect x="150.1" y="178" width="4.9" height="26.4" rx="0.8" fill="#2f3c55"/>
<rect x="154.9" y="178.6" width="4.3" height="25.8" fill="#1a2233"/>
<rect x="150.7" y="192.3" width="0.700" height="0.700" fill="#f0c060"/>
<rect x="150.7" y="179.9" width="0.700" height="0.700" fill="#e8b24a"/>
<rect x="150.9" y="184.6" width="0.700" height="0.700" fill="#d99a3c"/>
<rect x="153.5" y="193.3" width="0.700" height="0.700" fill="#d99a3c"/>
<rect x="156.7" y="190.8" width="0.700" height="0.700" fill="#f0c060"/>
<rect x="39.1" y="189.1" width="4.7" height="15.3" rx="0.8" fill="#46587a"/>
<rect x="43.8" y="189.7" width="2.2" height="14.7" fill="#242f47"/>
<rect x="41.4" y="193.2" width="0.700" height="0.700" fill="#d99a3c"/>
<rect x="40.8" y="201.3" width="0.700" height="0.700" fill="#d99a3c"/>
<rect x="89.2" y="180.4" width="5.5" height="24.5" rx="0.8" fill="#3e4f6e"/>
<rect x="94.8" y="181" width="2.7" height="23.9" fill="#202a40"/>
<rect x="93.5" y="191.9" width="0.700" height="0.700" fill="#d99a3c"/>
<rect x="90.9" y="187.1" width="0.700" height="0.700" fill="#e8b24a"/>
<rect x="90" y="203" width="0.700" height="0.700" fill="#f0c060"/>
<rect x="94.7" y="191.7" width="0.700" height="0.700" fill="#f0c060"/>
<rect x="87.7" y="203.8" width="11.2" height="2.4" rx="0.800" fill="#f5843a" opacity="0.9"/>
<rect x="121.7" y="191.9" width="4.2" height="13.5" rx="0.8" fill="#2a3650"/>
<rect x="125.8" y="192.5" width="3.5" height="12.9" fill="#171e2e"/>
<rect x="125.4" y="199.8" width="0.700" height="0.700" fill="#e8b24a"/>
<rect x="124.2" y="202" width="0.700" height="0.700" fill="#e8b24a"/>
<rect x="131" y="190.8" width="5.2" height="15.3" rx="0.8" fill="#2a3650"/>
<rect x="136.2" y="191.4" width="3.3" height="14.7" fill="#171e2e"/>
<rect x="135.4" y="202.6" width="0.700" height="0.700" fill="#f0c060"/>
<rect x="133.9" y="196.3" width="0.700" height="0.700" fill="#d99a3c"/>
<rect x="88.8" y="193.2" width="4.8" height="13.3" rx="0.8" fill="#2a3650"/>
<rect x="93.6" y="193.8" width="5.8" height="12.7" fill="#171e2e"/>
<rect x="92.1" y="199.1" width="0.700" height="0.700" fill="#e8b24a"/>
<rect x="92.4" y="197.8" width="0.700" height="0.700" fill="#d99a3c"/>
<rect x="91.8" y="198" width="0.700" height="0.700" fill="#e8b24a"/>
<rect x="23.6" y="178.4" width="7.4" height="28.2" rx="0.8" fill="#35445f"/>
<rect x="31" y="179" width="3.5" height="27.6" fill="#1e273a"/>
<rect x="25.1" y="201" width="0.700" height="0.700" fill="#d99a3c"/>
<rect x="32.1" y="203.8" width="0.700" height="0.700" fill="#d99a3c"/>
<rect x="29.4" y="182.3" width="0.700" height="0.700" fill="#d99a3c"/>
<rect x="32" y="195.4" width="0.700" height="0.700" fill="#f0c060"/>
<rect x="30.3" y="189.7" width="0.700" height="0.700" fill="#f0c060"/>
<rect x="28" y="182.6" width="0.700" height="0.700" fill="#e8b24a"/>
<rect x="77.6" y="178.6" width="6.7" height="28" rx="0.8" fill="#3e4f6e"/>
<rect x="84.4" y="179.2" width="4.1" height="27.4" fill="#202a40"/>
<rect x="81.2" y="193" width="0.700" height="0.700" fill="#d99a3c"/>
<rect x="84.9" y="202.6" width="0.700" height="0.700" fill="#d99a3c"/>
<rect x="82.2" y="199.8" width="0.700" height="0.700" fill="#e8b24a"/>
<rect x="78.4" y="191.5" width="0.700" height="0.700" fill="#f0c060"/>
<rect x="84.5" y="197.4" width="0.700" height="0.700" fill="#e8b24a"/>
<rect x="84.8" y="192" width="0.700" height="0.700" fill="#f0c060"/>
<rect x="102.3" y="183.1" width="4.4" height="23.7" rx="0.8" fill="#2f3c55"/>
<rect x="106.7" y="183.7" width="5.3" height="23.1" fill="#1a2233"/>
<rect x="105.8" y="194" width="0.700" height="0.700" fill="#d99a3c"/>
<rect x="103.1" y="185.7" width="0.700" height="0.700" fill="#e8b24a"/>
<rect x="104.4" y="190.5" width="0.700" height="0.700" fill="#d99a3c"/>
<rect x="105.3" y="186.9" width="0.700" height="0.700" fill="#e8b24a"/>
<rect x="103.9" y="202.7" width="0.700" height="0.700" fill="#f0c060"/>
<rect x="206.1" y="178.4" width="4.3" height="28.6" rx="0.8" fill="#2a3650"/>
<rect x="210.5" y="179" width="4.6" height="28" fill="#171e2e"/>
<rect x="208.9" y="203.4" width="0.700" height="0.700" fill="#f0c060"/>
<rect x="207.3" y="206" width="0.700" height="0.700" fill="#d99a3c"/>
<rect x="209.7" y="197.2" width="0.700" height="0.700" fill="#e8b24a"/>
<rect x="207" y="182.6" width="0.700" height="0.700" fill="#e8b24a"/>
<rect x="209.4" y="191.5" width="0.700" height="0.700" fill="#d99a3c"/>
<rect x="204.6" y="206" width="11.9" height="2.3" rx="0.800" fill="#f5843a" opacity="0.9"/>
<rect x="119.8" y="184" width="5.2" height="23.1" rx="0.8" fill="#8090a8"/>
<rect x="125" y="184.6" width="2.5" height="22.5" fill="#46587a"/>
<rect x="124.6" y="203.7" width="0.700" height="0.700" fill="#d99a3c"/>
<rect x="125.9" y="195.1" width="0.700" height="0.700" fill="#f0c060"/>
<rect x="126.5" y="187.1" width="0.700" height="0.700" fill="#f0c060"/>
<rect x="4.5" y="192.3" width="5" height="14.8" rx="0.8" fill="#2f3c55"/>
<rect x="9.6" y="192.9" width="5.2" height="14.2" fill="#1a2233"/>
<rect x="5.4" y="198.2" width="0.700" height="0.700" fill="#e8b24a"/>
<rect x="9.2" y="195.2" width="0.700" height="0.700" fill="#f0c060"/>
<rect x="9.5" y="194.8" width="0.700" height="0.700" fill="#d99a3c"/>
<rect x="123.4" y="185.6" width="4.2" height="21.5" rx="0.8" fill="#3e4f6e"/>
<rect x="127.6" y="186.2" width="3.6" height="20.9" fill="#202a40"/>
<rect x="129.4" y="196.8" width="0.700" height="0.700" fill="#f0c060"/>
<rect x="128.9" y="188.9" width="0.700" height="0.700" fill="#e8b24a"/>
<rect x="129.5" y="187.8" width="0.700" height="0.700" fill="#d99a3c"/>
<rect x="165.9" y="184.3" width="4.8" height="23.4" rx="0.8" fill="#50637f"/>
<rect x="170.6" y="184.9" width="5.4" height="22.8" fill="#2a3650"/>
<rect x="173.9" y="195.3" width="0.700" height="0.700" fill="#f0c060"/>
<rect x="168.3" y="186.8" width="0.700" height="0.700" fill="#d99a3c"/>
<rect x="173.9" y="186.6" width="0.700" height="0.700" fill="#e8b24a"/>
<rect x="169.2" y="192.3" width="0.700" height="0.700" fill="#e8b24a"/>
<rect x="174.9" y="193.2" width="0.700" height="0.700" fill="#e8b24a"/>
<rect x="70.8" y="183.4" width="6.6" height="24.3" rx="0.8" fill="#2f3c55"/>
<rect x="77.5" y="184" width="3.8" height="23.7" fill="#1a2233"/>
<rect x="76.2" y="190.4" width="0.700" height="0.700" fill="#d99a3c"/>
<rect x="73.2" y="196.3" width="0.700" height="0.700" fill="#d99a3c"/>
<rect x="78.3" y="203" width="0.700" height="0.700" fill="#f0c060"/>
<rect x="73.7" y="196" width="0.700" height="0.700" fill="#f0c060"/>
<rect x="71.4" y="187.9" width="0.700" height="0.700" fill="#f0c060"/>
<rect x="69.3" y="206.8" width="13.4" height="1.5" rx="0.800" fill="#f5843a" opacity="0.9"/>
<rect x="193.9" y="190.6" width="5.6" height="18" rx="0.8" fill="#50637f"/>
<rect x="199.5" y="191.2" width="5.2" height="17.4" fill="#2a3650"/>
<rect x="198.1" y="195.6" width="0.700" height="0.700" fill="#e8b24a"/>
<rect x="201.2" y="203.4" width="0.700" height="0.700" fill="#f0c060"/>
<rect x="197.2" y="195.9" width="0.700" height="0.700" fill="#f0c060"/>
<rect x="202.8" y="200.2" width="0.700" height="0.700" fill="#f0c060"/>
<rect x="104.2" y="180.6" width="5.2" height="28.6" rx="0.8" fill="#2f3c55"/>
<rect x="109.5" y="181.2" width="2.6" height="28" fill="#1a2233"/>
<rect x="109.5" y="190.8" width="0.700" height="0.700" fill="#d99a3c"/>
<rect x="106.7" y="182.3" width="0.700" height="0.700" fill="#f0c060"/>
<rect x="107.2" y="186.9" width="0.700" height="0.700" fill="#f0c060"/>
<rect x="109.5" y="192.9" width="0.700" height="0.700" fill="#f0c060"/>
<rect x="102.7" y="208.2" width="10.9" height="2.1" rx="0.800" fill="#f5843a" opacity="0.9"/>
<rect x="157.5" y="181.6" width="5.6" height="27.7" rx="0.8" fill="#50637f"/>
<rect x="163.1" y="182.2" width="5.4" height="27.1" fill="#2a3650"/>
<rect x="161.2" y="200.2" width="0.700" height="0.700" fill="#e8b24a"/>
<rect x="158.7" y="194.4" width="0.700" height="0.700" fill="#d99a3c"/>
<rect x="159.2" y="206.6" width="0.700" height="0.700" fill="#f0c060"/>
<rect x="160.1" y="191" width="0.700" height="0.700" fill="#e8b24a"/>
<rect x="158.4" y="192.4" width="0.700" height="0.700" fill="#d99a3c"/>
<rect x="163.5" y="183.3" width="0.700" height="0.700" fill="#f0c060"/>
<rect x="27.2" y="186.4" width="4.8" height="23.1" rx="0.8" fill="#3e4f6e"/>
<rect x="32" y="187" width="3" height="22.5" fill="#202a40"/>
<rect x="30" y="202.1" width="0.700" height="0.700" fill="#f0c060"/>
<rect x="28.2" y="203.5" width="0.700" height="0.700" fill="#d99a3c"/>
<rect x="29.9" y="191" width="0.700" height="0.700" fill="#f0c060"/>
<rect x="31.9" y="200.4" width="0.700" height="0.700" fill="#e8b24a"/>
<rect x="13.8" y="187.1" width="6.2" height="22.8" rx="0.8" fill="#2a3650"/>
<rect x="20" y="187.7" width="3.4" height="22.2" fill="#171e2e"/>
<rect x="20.1" y="205.1" width="0.700" height="0.700" fill="#e8b24a"/>
<rect x="16.9" y="207.2" width="0.700" height="0.700" fill="#d99a3c"/>
<rect x="14.8" y="201.7" width="0.700" height="0.700" fill="#e8b24a"/>
<rect x="19.6" y="199.2" width="0.700" height="0.700" fill="#e8b24a"/>
<rect x="197.6" y="186.9" width="4.4" height="23.1" rx="0.8" fill="#3e4f6e"/>
<rect x="202" y="187.5" width="5.4" height="22.5" fill="#202a40"/>
<rect x="199.3" y="201.1" width="0.700" height="0.700" fill="#e8b24a"/>
<rect x="199.9" y="207.5" width="0.700" height="0.700" fill="#d99a3c"/>
<rect x="199.5" y="191.4" width="0.700" height="0.700" fill="#f0c060"/>
<rect x="203.9" y="188.8" width="0.700" height="0.700" fill="#d99a3c"/>
<rect x="204.5" y="201.6" width="0.700" height="0.700" fill="#e8b24a"/>
<rect x="184" y="183.7" width="5" height="26.5" rx="0.8" fill="#2a3650"/>
<rect x="189" y="184.3" width="5.1" height="25.9" fill="#171e2e"/>
<rect x="188.4" y="186" width="0.700" height="0.700" fill="#e8b24a"/>
<rect x="187.1" y="194.8" width="0.700" height="0.700" fill="#d99a3c"/>
<rect x="192.1" y="199.4" width="0.700" height="0.700" fill="#d99a3c"/>
<rect x="184.9" y="194" width="0.700" height="0.700" fill="#d99a3c"/>
<rect x="191.2" y="200.1" width="0.700" height="0.700" fill="#d99a3c"/>
<rect x="182.5" y="209.1" width="13.1" height="1.4" rx="0.800" fill="#f5843a" opacity="0.9"/>
<rect x="93.8" y="187.2" width="6.1" height="23.3" rx="0.8" fill="#46587a"/>
<rect x="99.9" y="187.8" width="2.7" height="22.7" fill="#242f47"/>
<rect x="97.1" y="189" width="0.700" height="0.700" fill="#f0c060"/>
<rect x="95.6" y="200.8" width="0.700" height="0.700" fill="#e8b24a"/>
<rect x="96.9" y="209.3" width="0.700" height="0.700" fill="#f0c060"/>
<rect x="101" y="208" width="0.700" height="0.700" fill="#e8b24a"/>
<rect x="112" y="193.3" width="4" height="17.1" rx="0.8" fill="#46587a"/>
<rect x="116" y="193.9" width="4.2" height="16.5" fill="#242f47"/>
<rect x="116.4" y="202.9" width="0.700" height="0.700" fill="#f0c060"/>
<rect x="116.4" y="205.4" width="0.700" height="0.700" fill="#f0c060"/>
<rect x="115.3" y="198.5" width="0.700" height="0.700" fill="#f0c060"/>
<rect x="110.5" y="209.5" width="11.2" height="2" rx="0.800" fill="#f5843a" opacity="0.9"/>
<rect x="32.5" y="184.3" width="5.8" height="26.2" rx="0.8" fill="#2f3c55"/>
<rect x="38.2" y="184.9" width="4.6" height="25.6" fill="#1a2233"/>
<rect x="40.5" y="192.8" width="0.700" height="0.700" fill="#f0c060"/>
<rect x="35.9" y="201.8" width="0.700" height="0.700" fill="#e8b24a"/>
<rect x="35.1" y="206.6" width="0.700" height="0.700" fill="#d99a3c"/>
<rect x="35.1" y="188.8" width="0.700" height="0.700" fill="#e8b24a"/>
<rect x="37.8" y="202" width="0.700" height="0.700" fill="#d99a3c"/>
<rect x="34.4" y="205.7" width="0.700" height="0.700" fill="#f0c060"/>
<rect x="36.3" y="193.9" width="5.2" height="16.7" rx="0.8" fill="#35445f"/>
<rect x="41.5" y="194.5" width="4" height="16.1" fill="#1e273a"/>
<rect x="37.8" y="199.6" width="0.700" height="0.700" fill="#d99a3c"/>
<rect x="39.6" y="208.6" width="0.700" height="0.700" fill="#d99a3c"/>
<rect x="38.2" y="205.9" width="0.700" height="0.700" fill="#f0c060"/>
<rect x="72" y="184.9" width="6.3" height="26.1" rx="0.8" fill="#35445f"/>
<rect x="78.3" y="185.5" width="3" height="25.5" fill="#1e273a"/>
<rect x="73.4" y="193.7" width="0.700" height="0.700" fill="#d99a3c"/>
<rect x="78.4" y="206" width="0.700" height="0.700" fill="#e8b24a"/>
<rect x="76.5" y="199.9" width="0.700" height="0.700" fill="#d99a3c"/>
<rect x="76.6" y="192.9" width="0.700" height="0.700" fill="#e8b24a"/>
<rect x="78.8" y="203.3" width="0.700" height="0.700" fill="#d99a3c"/>
<rect x="121.2" y="195.5" width="3.4" height="15.7" rx="0.8" fill="#8090a8"/>
<rect x="124.7" y="196.1" width="3.5" height="15.1" fill="#46587a"/>
<rect x="122" y="204.6" width="0.700" height="0.700" fill="#d99a3c"/>
<rect x="124" y="199.3" width="0.700" height="0.700" fill="#d99a3c"/>
<rect x="50.4" y="189.9" width="4.3" height="21.4" rx="0.8" fill="#46587a"/>
<rect x="54.7" y="190.5" width="3.8" height="20.8" fill="#242f47"/>
<rect x="54.7" y="197.6" width="0.700" height="0.700" fill="#f0c060"/>
<rect x="55.1" y="191.5" width="0.700" height="0.700" fill="#d99a3c"/>
<rect x="56.4" y="200.2" width="0.700" height="0.700" fill="#e8b24a"/>
<rect x="56.5" y="184.8" width="4.1" height="27.1" rx="0.8" fill="#50637f"/>
<rect x="60.7" y="185.4" width="4.7" height="26.5" fill="#2a3650"/>
<rect x="62.5" y="188.7" width="0.700" height="0.700" fill="#f0c060"/>
<rect x="62.6" y="209.4" width="0.700" height="0.700" fill="#f0c060"/>
<rect x="60.3" y="189.1" width="0.700" height="0.700" fill="#f0c060"/>
<rect x="59.3" y="192.6" width="0.700" height="0.700" fill="#d99a3c"/>
<rect x="61.1" y="196" width="0.700" height="0.700" fill="#f0c060"/>
<rect x="55" y="210.9" width="11.8" height="2.3" rx="0.800" fill="#f5843a" opacity="0.9"/>
<path d="M137 189L119 208" stroke="#b35a2a" stroke-width="5.3" stroke-linecap="round" opacity="0.5" fill="none"/>
<path d="M137 189L119 208" stroke="#f5843a" stroke-width="2.8" stroke-linecap="round" opacity="1" fill="none"/>
<rect x="-2.6" y="185.8" width="3.1" height="26.3" rx="0.8" fill="#3e4f6e"/>
<rect x="0.5" y="186.4" width="3.7" height="25.7" fill="#202a40"/>
<rect x="2.8" y="188.7" width="0.700" height="0.700" fill="#d99a3c"/>
<rect x="1" y="193.9" width="0.700" height="0.700" fill="#e8b24a"/>
<rect x="-0.8" y="191.6" width="0.700" height="0.700" fill="#f0c060"/>
<rect x="2.7" y="195.5" width="0.700" height="0.700" fill="#e8b24a"/>
<rect x="182.5" y="187.5" width="5.1" height="25.1" rx="0.8" fill="#35445f"/>
<rect x="187.6" y="188.1" width="4.2" height="24.5" fill="#1e273a"/>
<rect x="183.4" y="210.9" width="0.700" height="0.700" fill="#f0c060"/>
<rect x="184.1" y="209.6" width="0.700" height="0.700" fill="#d99a3c"/>
<rect x="183.2" y="199.5" width="0.700" height="0.700" fill="#f0c060"/>
<rect x="189.9" y="198.8" width="0.700" height="0.700" fill="#d99a3c"/>
<rect x="187.3" y="203.2" width="0.700" height="0.700" fill="#f0c060"/>
<rect x="190.6" y="183.8" width="6.3" height="28.9" rx="0.8" fill="#3e4f6e"/>
<rect x="196.9" y="184.4" width="4.7" height="28.3" fill="#202a40"/>
<rect x="191.8" y="208.2" width="0.700" height="0.700" fill="#d99a3c"/>
<rect x="200.4" y="208.7" width="0.700" height="0.700" fill="#d99a3c"/>
<rect x="191.6" y="206.3" width="0.700" height="0.700" fill="#e8b24a"/>
<rect x="192.8" y="188.2" width="0.700" height="0.700" fill="#f0c060"/>
<rect x="192.8" y="186.5" width="0.700" height="0.700" fill="#d99a3c"/>
<rect x="198.3" y="209.3" width="0.700" height="0.700" fill="#e8b24a"/>
<rect x="199.5" y="187.5" width="0.700" height="0.700" fill="#e8b24a"/>
<rect x="189.1" y="211.7" width="14" height="1.8" rx="0.800" fill="#f5843a" opacity="0.9"/>
<rect x="118.8" y="184.1" width="6.1" height="28.6" rx="0.8" fill="#71839f"/>
<rect x="125" y="184.7" width="5.1" height="28" fill="#3d4e6c"/>
<rect x="124.3" y="191.4" width="0.700" height="0.700" fill="#d99a3c"/>
<rect x="127.7" y="209.6" width="0.700" height="0.700" fill="#d99a3c"/>
<rect x="119.5" y="186.1" width="0.700" height="0.700" fill="#d99a3c"/>
<rect x="119.5" y="199.7" width="0.700" height="0.700" fill="#f0c060"/>
<rect x="128.2" y="197.8" width="0.700" height="0.700" fill="#e8b24a"/>
<rect x="120.3" y="186.4" width="0.700" height="0.700" fill="#f0c060"/>
<rect x="128.8" y="209.1" width="0.700" height="0.700" fill="#e8b24a"/>
<path d="M41 203L53 209" stroke="#b35a2a" stroke-width="5.5" stroke-linecap="round" opacity="0.5" fill="none"/>
<path d="M41 203L53 209" stroke="#f5843a" stroke-width="3" stroke-linecap="round" opacity="1" fill="none"/>
<path d="M189 206L197 209" stroke="#b35a2a" stroke-width="5.1" stroke-linecap="round" opacity="0.5" fill="none"/>
<path d="M189 206L197 209" stroke="#f5843a" stroke-width="2.6" stroke-linecap="round" opacity="1" fill="none"/>
<rect x="92.3" y="197.3" width="5.8" height="16.1" rx="0.8" fill="#8090a8"/>
<rect x="98.1" y="197.9" width="3.5" height="15.5" fill="#46587a"/>
<rect x="94.1" y="212.3" width="0.700" height="0.700" fill="#e8b24a"/>
<rect x="96.1" y="205.2" width="0.700" height="0.700" fill="#e8b24a"/>
<rect x="93.2" y="202.5" width="0.700" height="0.700" fill="#e8b24a"/>
<rect x="0" y="98" width="210" height="112" fill="#1a1208" opacity="0.2"/>
<ellipse cx="20" cy="210" rx="20" ry="9" fill="#39476b"/>
<ellipse cx="78" cy="26" rx="7.500" ry="1.100" fill="#6b6448"/><ellipse cx="78" cy="27.200" rx="2" ry="2" fill="#ffe870"/><path d="M78 21V25" stroke="#55607a" stroke-width="0.600"/>
<ellipse cx="106" cy="41" rx="4.200" ry="1.700" fill="#f2c83a"/><ellipse cx="106" cy="39.200" rx="2.200" ry="1.900" fill="#ffe870"/>
<ellipse cx="194" cy="34" rx="1.800" ry="0.800" fill="#7a705c"/><ellipse cx="203" cy="33.200" rx="1" ry="0.700" fill="#8a6a4c"/>
</g></svg>
<text x="11" y="865" font-size="10" fill="#7c7c7c" stroke="#7c7c7c">T: 0.00s</text>
<text x="11" y="878" font-size="10" fill="#7c7c7c" stroke="#7c7c7c">I: 0</text>
<text x="11" y="891" font-size="10" fill="#7c7c7c" stroke="#7c7c7c">N: 7 [7]</text>
<text x="11" y="904" font-size="10" fill="#7c7c7c" stroke="#7c7c7c">V: 16</text>
<text x="11" y="917" font-size="10" fill="#7c7c7c" stroke="#7c7c7c">FPS:58.48</text>
</svg>
<div class="ta" style="left:422px;top:221px;width:402.8px;height:117.5px">subset in Vancouver, large friendly aliens fly over the city.
futuristic. magical. mathematical.</div>
<div class="ta" style="left:420px;top:424px;width:405.3px;height:135px">text, watermark</div>
<svg style="position:absolute;left:760px;top:298px" width="66" height="40" viewBox="760 298 66 40">
<defs><linearGradient id="gbadge" x1="0" y1="0" x2="1" y2="1"><stop offset="0" stop-color="#7a2fc0"/><stop offset="1" stop-color="#2438d6"/></linearGradient>
<linearGradient id="gbulb" x1="0" y1="0" x2="1" y2="1"><stop offset="0" stop-color="#0b947e"/><stop offset="1" stop-color="#12b596"/></linearGradient></defs>
<path d="M779 303H804A15 15 0 0 1 819 318A15 15 0 0 1 804 333H764V318A15 15 0 0 1 779 303Z" fill="#fff"/>
<path d="M779 310a7 7 0 0 1 4.2 12.6l-1.2 2.2h-6l-1.2-2.2A7 7 0 0 1 779 310Z" fill="url(#gbulb)"/>
<path d="M775.2 326h7.6l-1.2 2h-5.2Z" fill="#0b947e"/>
<path d="M779 312.600q0.900 3.500 4.400 4.400q-3.500 0.900-4.400 4.400q-0.900-3.500-4.400-4.400q3.500-0.900 4.400-4.400Z" fill="#fff"/>
<path d="M804 307A11 11 0 0 1 815 318A11 11 0 0 1 804 329H793V318A11 11 0 0 1 804 307Z" fill="#027e6f"/>
<path d="M810.600 318.200H804.800M810.600 318.200A6.600 6.600 0 1 1 808.300 313.200" fill="none" stroke="#fff" stroke-width="1.5" stroke-linecap="round" stroke-linejoin="round"/>
<circle cx="813.200" cy="308.900" r="6.500" fill="#fff"/><circle cx="813.200" cy="308.900" r="5.600" fill="url(#gbadge)"/>
<text x="813.200" y="312" font-size="8.500" font-weight="bold" fill="#fff" stroke="none" text-anchor="middle" font-family='"Liberation Sans", sans-serif'>4</text>
</svg>
<div class="menu">
<svg style="position:absolute;left:11px;top:11px" width="14" height="16" viewBox="0 0 14 16"><rect x="2.1" y="1.5" width="1.800" height="1.600" fill="#000" opacity="0.75"/><rect x="2.1" y="6.5" width="1.800" height="1.600" fill="#000" opacity="0.75"/><rect x="2.1" y="11.5" width="1.800" height="1.600" fill="#000" opacity="0.75"/><rect x="7.7" y="1.5" width="1.800" height="1.600" fill="#000" opacity="0.75"/><rect x="7.7" y="6.5" width="1.800" height="1.600" fill="#000" opacity="0.75"/><rect x="7.7" y="11.5" width="1.800" height="1.600" fill="#000" opacity="0.75"/><rect x="1.2" y="1.5" width="1.500" height="1.500" fill="#e6e6e6"/><rect x="1.2" y="6.5" width="1.500" height="1.500" fill="#e6e6e6"/><rect x="1.2" y="11.5" width="1.500" height="1.500" fill="#e6e6e6"/><rect x="6.8" y="1.5" width="1.500" height="1.500" fill="#e6e6e6"/><rect x="6.8" y="6.5" width="1.500" height="1.500" fill="#e6e6e6"/><rect x="6.8" y="11.5" width="1.500" height="1.500" fill="#e6e6e6"/></svg>
<span class="t" style="left:41px;top:10px">Queue size: 0</span>
<svg style="position:absolute;left:147.100px;top:10.800px" width="18" height="18" viewBox="-9 -9 18 18"><defs><linearGradient id="gg" x1="0" y1="0" x2="0" y2="1"><stop offset="0" stop-color="#cfe0ee"/><stop offset="1" stop-color="#a9a4b0"/></linearGradient></defs><path d="M-0.78 -5.24L-0.39 -7.89L0.39 -7.89L0.78 -5.24ZM1.28 -5.14L2.66 -7.44L3.38 -7.14L2.73 -4.54ZM3.15 -4.26L5.3 -5.86L5.86 -5.3L4.26 -3.15ZM4.54 -2.73L7.14 -3.38L7.44 -2.66L5.14 -1.28ZM5.24 -0.78L7.89 -0.39L7.89 0.39L5.24 0.78ZM5.14 1.28L7.44 2.66L7.14 3.38L4.54 2.73ZM4.26 3.15L5.86 5.3L5.3 5.86L3.15 4.26ZM2.73 4.54L3.38 7.14L2.66 7.44L1.28 5.14ZM0.78 5.24L0.39 7.89L-0.39 7.89L-0.78 5.24ZM-1.28 5.14L-2.66 7.44L-3.38 7.14L-2.73 4.54ZM-3.15 4.26L-5.3 5.86L-5.86 5.3L-4.26 3.15ZM-4.54 2.73L-7.14 3.38L-7.44 2.66L-5.14 1.28ZM-5.24 0.78L-7.89 0.39L-7.89 -0.39L-5.24 -0.78ZM-5.14 -1.28L-7.44 -2.66L-7.14 -3.38L-4.54 -2.73ZM-4.26 -3.15L-5.86 -5.3L-5.3 -5.86L-3.15 -4.26ZM-2.73 -4.54L-3.38 -7.14L-2.66 -7.44L-1.28 -5.14Z" fill="url(#gg)"/><circle r="5.900" fill="url(#gg)"/><circle r="4.900" fill="#8391a4"/><circle r="4" fill="none" stroke="#6a7789" stroke-width="1.100"/><circle r="2.900" fill="#dde5ee"/><circle r="1.500" fill="#55575c"/></svg>
<svg style="position:absolute;left:167.900px;top:11.200px" width="12" height="12" viewBox="-6 -6 12 12"><path d="M-4.200 -4.200L4.200 4.200M4.200 -4.200L-4.200 4.200" stroke="#d2d2d2" stroke-width="2.700"/></svg>
<div class="b" style="top:37px">Queue Prompt</div>
<span class="t" style="left:41px;top:74px">Extra options</span>
<div style="position:absolute;left:132.800px;top:75.500px;width:12.500px;height:12.500px;background:#fff;border-radius:2px"></div>
<div class="s" style="left:10px;top:93px;width:84.300px">Queue Front</div>
<div class="s" style="left:95.500px;top:93px;width:84.500px">View Queue</div>
<div class="s" style="left:53px;top:112px;width:85px">View History</div>
<div class="b" style="top:141px">Save</div>
<div class="b" style="top:172px">Load</div>
<div class="b" style="top:203px">Refresh</div>
<div class="b" style="top:234px">Clipspace</div>
<div class="b" style="top:265px">Clear</div>
<div class="b" style="top:296px">Load Default</div>
<div class="b" style="top:327px">Reset View</div>
<div style="position:absolute;left:9px;top:376px;width:172px;height:2px;background:#e4e4e4"></div>
<div class="b" style="top:400px">Manager</div>
<div class="b" style="top:431px;background:linear-gradient(90deg,#00C2FF 0%,#00DECE 50%,#3CF0A8 78%,#66FF94 100%);color:#000;-webkit-text-stroke:0.35px #000">Share</div>
</div>
</body></html>
